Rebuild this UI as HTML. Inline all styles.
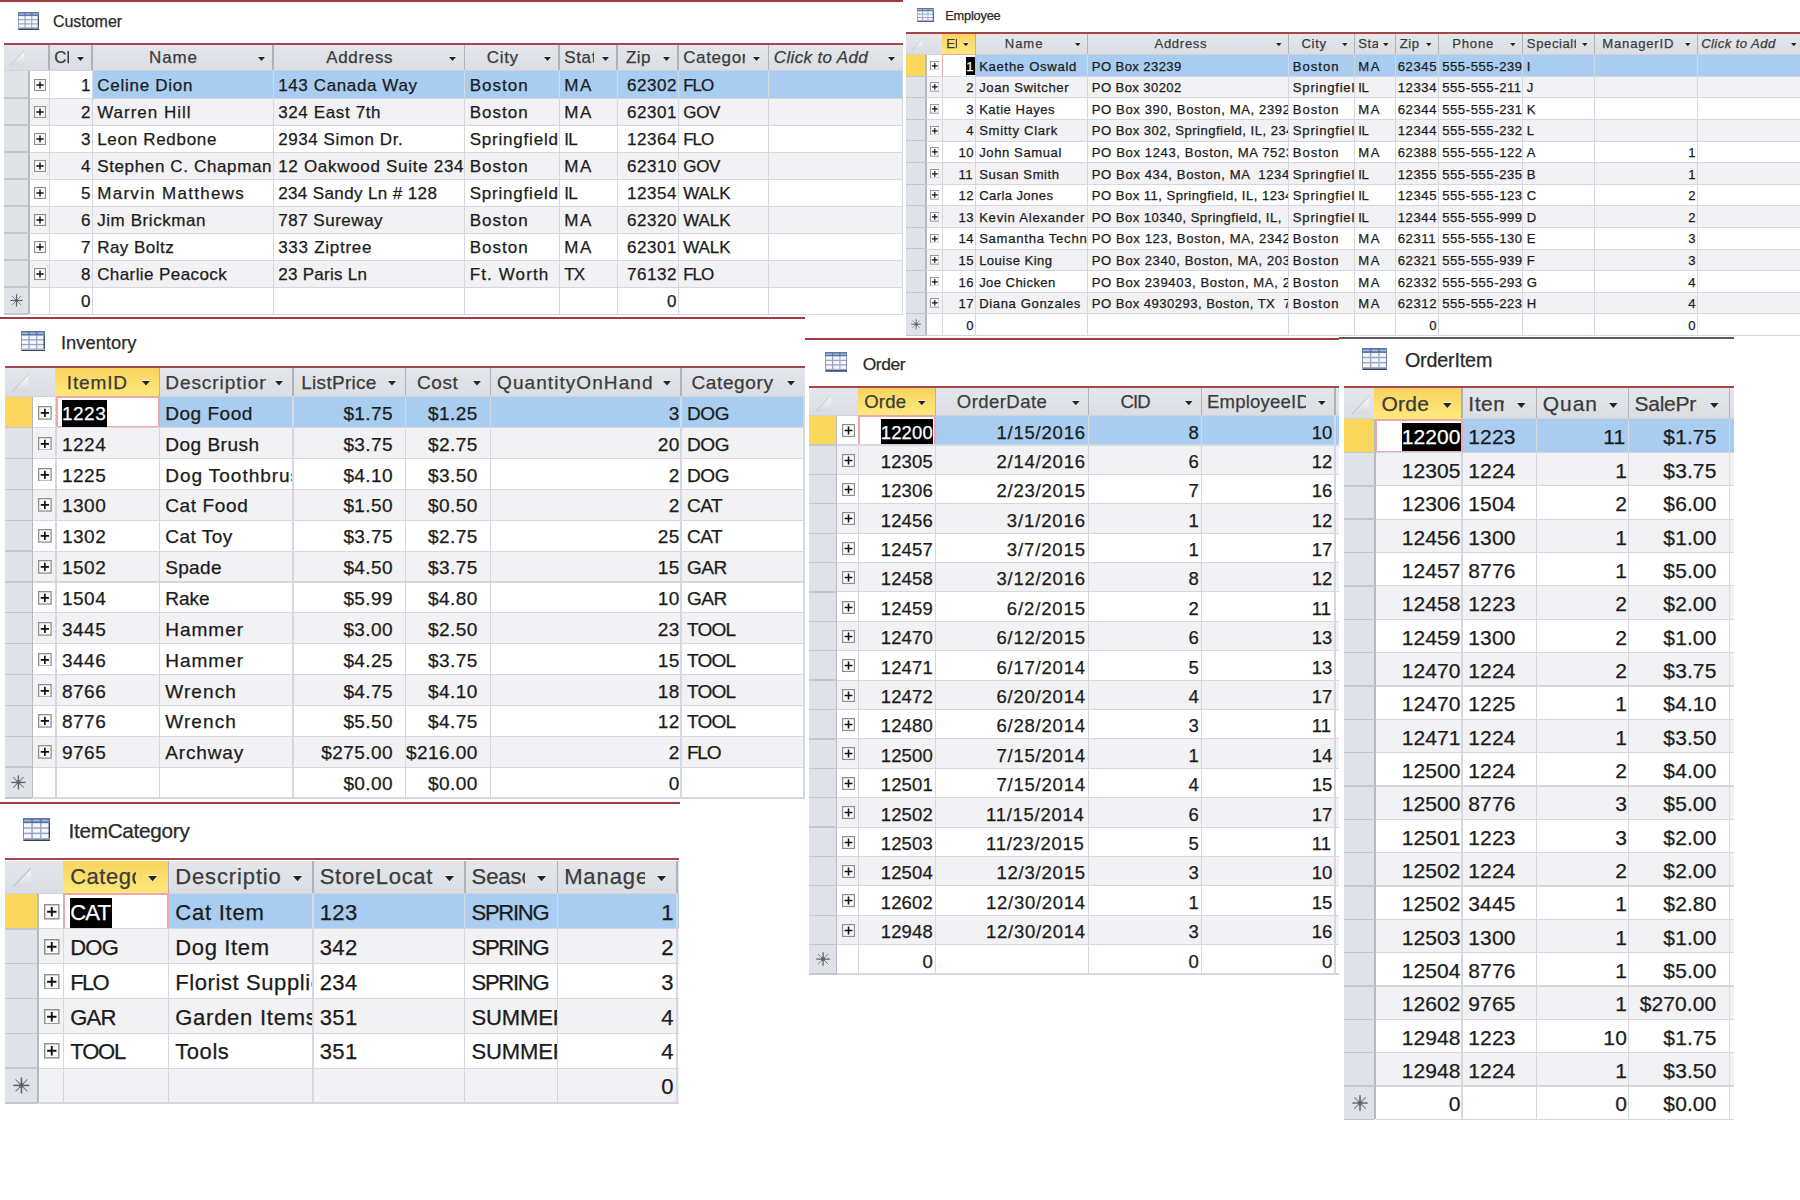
<!DOCTYPE html><html><head><meta charset="utf-8"><style>html,body{margin:0;padding:0;width:1800px;height:1200px;overflow:hidden;background:#fff;}body{position:relative;font-family:"Liberation Sans",sans-serif;}div{position:absolute;}.t{white-space:pre;line-height:0;-webkit-text-stroke:0.25px currentColor;}.c{overflow:hidden;}</style></head><body>
<div style="left:0px;top:0px;width:903px;height:317px;background:#fff"></div>
<div style="left:0px;top:0px;width:903px;height:1.5px;background:#a5393f"></div>
<svg style="position:absolute;left:18px;top:12px" width="20.8" height="18" viewBox="0 0 26 21.5" preserveAspectRatio="none">
<rect x="0" y="0" width="26" height="21.5" fill="#6f83a8"/><rect x="0" y="0" width="26" height="4.6" fill="#5c76a3"/><rect x="0.9" y="1.6" width="7" height="1.5" fill="#a9bbe2"/><rect x="9.6" y="1.6" width="6.6" height="1.5" fill="#a9bbe2"/><rect x="18" y="1.6" width="6.6" height="1.5" fill="#a9bbe2"/><rect x="0.9" y="4.8" width="24" height="14" fill="#9aa5bf"/>
<rect x="0.9" y="4.9" width="7.1" height="3.6" fill="#f4f7fd"/>
<rect x="9.5" y="4.9" width="7.0" height="3.6" fill="#f4f7fd"/>
<rect x="17.8" y="4.9" width="7.0" height="3.6" fill="#f4f7fd"/>
<rect x="0.9" y="9.9" width="7.1" height="3.6" fill="#f4f7fd"/>
<rect x="9.5" y="9.9" width="7.0" height="3.6" fill="#f4f7fd"/>
<rect x="17.8" y="9.9" width="7.0" height="3.6" fill="#f4f7fd"/>
<rect x="0.9" y="14.9" width="7.1" height="3.6" fill="#f4f7fd"/>
<rect x="9.5" y="14.9" width="7.0" height="3.6" fill="#f4f7fd"/>
<rect x="17.8" y="14.9" width="7.0" height="3.6" fill="#f4f7fd"/>
<rect x="24.8" y="4.8" width="1.2" height="16.7" fill="#34405f"/><rect x="0" y="18.6" width="26" height="1.5" fill="#a6b2c9"/><rect x="0.9" y="20" width="25.1" height="1.5" fill="#34405f"/>
</svg>
<div class="t" style="left:53px;top:22.46px;font-size:16px;letter-spacing:-0.04px;color:#2a2a2a;">Customer</div>
<div style="left:4px;top:43px;width:899px;height:1.7px;background:#a8464b"></div>
<div style="left:4px;top:45px;width:899px;height:26px;background:linear-gradient(#e3e6ea,#dadee4)"></div>
<svg style="position:absolute;left:10px;top:51px" width="14" height="14.6" viewBox="0 0 14 14.6">
<defs><linearGradient id="tg" x1="0" y1="0" x2="0" y2="1"><stop offset="0" stop-color="#f8f9fb"/><stop offset="1" stop-color="#d6dae0"/></linearGradient></defs><path d="M0,14.6 L14,0 L14,14.6 Z" fill="url(#tg)"/><path d="M0,14.6 L14,0" stroke="#b9bec6" stroke-width="0.8"/></svg>
<div style="left:48.45px;top:45px;width:1.1px;height:26px;background:#aeb3ba"></div>
<div style="left:91.45px;top:45px;width:1.1px;height:26px;background:#aeb3ba"></div>
<div style="left:272.45px;top:45px;width:1.1px;height:26px;background:#aeb3ba"></div>
<div style="left:463.95px;top:45px;width:1.1px;height:26px;background:#aeb3ba"></div>
<div style="left:558.45px;top:45px;width:1.1px;height:26px;background:#aeb3ba"></div>
<div style="left:616.45px;top:45px;width:1.1px;height:26px;background:#aeb3ba"></div>
<div style="left:677.45px;top:45px;width:1.1px;height:26px;background:#aeb3ba"></div>
<div style="left:768.05px;top:45px;width:1.1px;height:26px;background:#aeb3ba"></div>
<div style="left:4px;top:70px;width:899px;height:1px;background:#cfd4da"></div>
<div class="c" style="left:50px;top:41.11px;width:18.5px;height:34px">
<div class="t" style="left:4.2px;top:17px;font-size:17px;letter-spacing:-0.43px;color:#3b3b3b;">CID</div></div>
<svg style="position:absolute;left:76.5px;top:57px;overflow:visible" width="7" height="4" viewBox="0 0 7 4">
<path d="M-0.6,-0.5 L7.6,-0.5 L3.5,4.6 Z" fill="#fbfcfd" opacity="0.9"/><path d="M0,0 L7,0 L3.5,4 Z" fill="#232323"/></svg>
<div class="c" style="left:93px;top:41.11px;width:156.5px;height:34px">
<div class="t" style="left:56px;top:17px;font-size:17px;letter-spacing:0.91px;color:#3b3b3b;">Name</div></div>
<svg style="position:absolute;left:257.5px;top:57px;overflow:visible" width="7" height="4" viewBox="0 0 7 4">
<path d="M-0.6,-0.5 L7.6,-0.5 L3.5,4.6 Z" fill="#fbfcfd" opacity="0.9"/><path d="M0,0 L7,0 L3.5,4 Z" fill="#232323"/></svg>
<div class="c" style="left:274px;top:41.11px;width:167px;height:34px">
<div class="t" style="left:52.25px;top:17px;font-size:17px;letter-spacing:0.66px;color:#3b3b3b;">Address</div></div>
<svg style="position:absolute;left:449px;top:57px;overflow:visible" width="7" height="4" viewBox="0 0 7 4">
<path d="M-0.6,-0.5 L7.6,-0.5 L3.5,4.6 Z" fill="#fbfcfd" opacity="0.9"/><path d="M0,0 L7,0 L3.5,4 Z" fill="#232323"/></svg>
<div class="c" style="left:465.5px;top:41.11px;width:70px;height:34px">
<div class="t" style="left:21.25px;top:17px;font-size:17px;letter-spacing:0.68px;color:#3b3b3b;">City</div></div>
<svg style="position:absolute;left:543.5px;top:57px;overflow:visible" width="7" height="4" viewBox="0 0 7 4">
<path d="M-0.6,-0.5 L7.6,-0.5 L3.5,4.6 Z" fill="#fbfcfd" opacity="0.9"/><path d="M0,0 L7,0 L3.5,4 Z" fill="#232323"/></svg>
<div class="c" style="left:560px;top:41.11px;width:33.5px;height:34px">
<div class="t" style="left:4.2px;top:17px;font-size:17px;letter-spacing:0.66px;color:#3b3b3b;">State</div></div>
<svg style="position:absolute;left:601.5px;top:57px;overflow:visible" width="7" height="4" viewBox="0 0 7 4">
<path d="M-0.6,-0.5 L7.6,-0.5 L3.5,4.6 Z" fill="#fbfcfd" opacity="0.9"/><path d="M0,0 L7,0 L3.5,4 Z" fill="#232323"/></svg>
<div class="c" style="left:618px;top:41.11px;width:36.5px;height:34px">
<div class="t" style="left:8px;top:17px;font-size:17px;letter-spacing:0.46px;color:#3b3b3b;">Zip</div></div>
<svg style="position:absolute;left:662.5px;top:57px;overflow:visible" width="7" height="4" viewBox="0 0 7 4">
<path d="M-0.6,-0.5 L7.6,-0.5 L3.5,4.6 Z" fill="#fbfcfd" opacity="0.9"/><path d="M0,0 L7,0 L3.5,4 Z" fill="#232323"/></svg>
<div class="c" style="left:679px;top:41.11px;width:66.1px;height:34px">
<div class="t" style="left:4.2px;top:17px;font-size:17px;letter-spacing:0.63px;color:#3b3b3b;">Category</div></div>
<svg style="position:absolute;left:753.1px;top:57px;overflow:visible" width="7" height="4" viewBox="0 0 7 4">
<path d="M-0.6,-0.5 L7.6,-0.5 L3.5,4.6 Z" fill="#fbfcfd" opacity="0.9"/><path d="M0,0 L7,0 L3.5,4 Z" fill="#232323"/></svg>
<div class="c" style="left:769.6px;top:41.11px;width:109.9px;height:34px">
<div class="t" style="left:4.2px;top:17px;font-size:17px;letter-spacing:0.36px;color:#3b3b3b;font-style:italic;">Click to Add</div></div>
<svg style="position:absolute;left:887.5px;top:57px;overflow:visible" width="7" height="4" viewBox="0 0 7 4">
<path d="M-0.6,-0.5 L7.6,-0.5 L3.5,4.6 Z" fill="#fbfcfd" opacity="0.9"/><path d="M0,0 L7,0 L3.5,4 Z" fill="#232323"/></svg>
<div style="left:4px;top:71px;width:25px;height:27px;background:#dfe3e8"></div>
<div style="left:29px;top:71px;width:874px;height:27px;background:#ffffff"></div>
<div style="left:92px;top:71px;width:811px;height:27px;background:#a8cdf0"></div>
<div style="left:28.35px;top:71px;width:1.3px;height:27px;background:#b5bac1"></div>
<div style="left:48.5px;top:71px;width:1px;height:27px;background:#d3d8e1"></div>
<div style="left:91.5px;top:71px;width:1px;height:27px;background:#d3d8e1"></div>
<div style="left:272.5px;top:71px;width:1px;height:27px;background:#d3d8e1"></div>
<div style="left:464px;top:71px;width:1px;height:27px;background:#d3d8e1"></div>
<div style="left:558.5px;top:71px;width:1px;height:27px;background:#d3d8e1"></div>
<div style="left:616.5px;top:71px;width:1px;height:27px;background:#d3d8e1"></div>
<div style="left:677.5px;top:71px;width:1px;height:27px;background:#d3d8e1"></div>
<div style="left:768.1px;top:71px;width:1px;height:27px;background:#d3d8e1"></div>
<div style="left:902px;top:71px;width:1px;height:27px;background:#d3d8e1"></div>
<svg style="position:absolute;left:33.8px;top:78.9px" width="12" height="12" viewBox="0 0 12 12">
<rect x="0.55" y="0.55" width="10.9" height="10.9" fill="#fbfbfb" stroke="#8e8e8e" stroke-width="1.1"/><path d="M2.4,6 H9.6 M6,2.4 V9.6" stroke="#111" stroke-width="1.45"/></svg>
<div class="c" style="left:49.5px;top:68.81px;width:42px;height:34px">
<div class="t" style="left:31.5px;top:17px;font-size:17px;letter-spacing:0.55px;color:#1b1b1b;">1</div></div>
<div class="c" style="left:92.5px;top:68.81px;width:180px;height:34px">
<div class="t" style="left:4.7px;top:17px;font-size:17px;letter-spacing:0.74px;color:#1b1b1b;">Celine Dion</div></div>
<div class="c" style="left:273.5px;top:68.81px;width:190.5px;height:34px">
<div class="t" style="left:4.7px;top:17px;font-size:17px;letter-spacing:0.62px;color:#1b1b1b;">143 Canada Way</div></div>
<div class="c" style="left:465px;top:68.81px;width:93.5px;height:34px">
<div class="t" style="left:4.7px;top:17px;font-size:17px;letter-spacing:1.01px;color:#1b1b1b;">Boston</div></div>
<div class="c" style="left:559.5px;top:68.81px;width:57px;height:34px">
<div class="t" style="left:4.7px;top:17px;font-size:17px;letter-spacing:1.75px;color:#1b1b1b;">MA</div></div>
<div class="c" style="left:617.5px;top:68.81px;width:60px;height:34px">
<div class="t" style="left:9.5px;top:17px;font-size:17px;letter-spacing:0.55px;color:#1b1b1b;">62302</div></div>
<div class="c" style="left:678.5px;top:68.81px;width:89.6px;height:34px">
<div class="t" style="left:4.7px;top:17px;font-size:17px;letter-spacing:-1.02px;color:#1b1b1b;">FLO</div></div>
<div style="left:4px;top:98px;width:25px;height:27px;background:#dfe3e8"></div>
<div style="left:29px;top:98px;width:874px;height:27px;background:#f2f1f3"></div>
<div style="left:28.35px;top:98px;width:1.3px;height:27px;background:#b5bac1"></div>
<div style="left:48.5px;top:98px;width:1px;height:27px;background:#d3d8e1"></div>
<div style="left:91.5px;top:98px;width:1px;height:27px;background:#d3d8e1"></div>
<div style="left:272.5px;top:98px;width:1px;height:27px;background:#d3d8e1"></div>
<div style="left:464px;top:98px;width:1px;height:27px;background:#d3d8e1"></div>
<div style="left:558.5px;top:98px;width:1px;height:27px;background:#d3d8e1"></div>
<div style="left:616.5px;top:98px;width:1px;height:27px;background:#d3d8e1"></div>
<div style="left:677.5px;top:98px;width:1px;height:27px;background:#d3d8e1"></div>
<div style="left:768.1px;top:98px;width:1px;height:27px;background:#d3d8e1"></div>
<div style="left:902px;top:98px;width:1px;height:27px;background:#d3d8e1"></div>
<div style="left:4px;top:97.4px;width:25px;height:1.2px;background:#c2c7ce"></div>
<div style="left:29.6px;top:97.5px;width:873.4px;height:1px;background:#d3d8e1"></div>
<svg style="position:absolute;left:33.8px;top:105.9px" width="12" height="12" viewBox="0 0 12 12">
<rect x="0.55" y="0.55" width="10.9" height="10.9" fill="#fbfbfb" stroke="#8e8e8e" stroke-width="1.1"/><path d="M2.4,6 H9.6 M6,2.4 V9.6" stroke="#111" stroke-width="1.45"/></svg>
<div class="c" style="left:49.5px;top:95.81px;width:42px;height:34px">
<div class="t" style="left:31.5px;top:17px;font-size:17px;letter-spacing:0.55px;color:#1b1b1b;">2</div></div>
<div class="c" style="left:92.5px;top:95.81px;width:180px;height:34px">
<div class="t" style="left:4.7px;top:17px;font-size:17px;letter-spacing:0.99px;color:#1b1b1b;">Warren Hill</div></div>
<div class="c" style="left:273.5px;top:95.81px;width:190.5px;height:34px">
<div class="t" style="left:4.7px;top:17px;font-size:17px;letter-spacing:0.63px;color:#1b1b1b;">324 East 7th</div></div>
<div class="c" style="left:465px;top:95.81px;width:93.5px;height:34px">
<div class="t" style="left:4.7px;top:17px;font-size:17px;letter-spacing:1.01px;color:#1b1b1b;">Boston</div></div>
<div class="c" style="left:559.5px;top:95.81px;width:57px;height:34px">
<div class="t" style="left:4.7px;top:17px;font-size:17px;letter-spacing:1.75px;color:#1b1b1b;">MA</div></div>
<div class="c" style="left:617.5px;top:95.81px;width:60px;height:34px">
<div class="t" style="left:9.5px;top:17px;font-size:17px;letter-spacing:0.55px;color:#1b1b1b;">62301</div></div>
<div class="c" style="left:678.5px;top:95.81px;width:89.6px;height:34px">
<div class="t" style="left:4.7px;top:17px;font-size:17px;letter-spacing:-0.26px;color:#1b1b1b;">GOV</div></div>
<div style="left:4px;top:125px;width:25px;height:27px;background:#dfe3e8"></div>
<div style="left:29px;top:125px;width:874px;height:27px;background:#ffffff"></div>
<div style="left:28.35px;top:125px;width:1.3px;height:27px;background:#b5bac1"></div>
<div style="left:48.5px;top:125px;width:1px;height:27px;background:#d3d8e1"></div>
<div style="left:91.5px;top:125px;width:1px;height:27px;background:#d3d8e1"></div>
<div style="left:272.5px;top:125px;width:1px;height:27px;background:#d3d8e1"></div>
<div style="left:464px;top:125px;width:1px;height:27px;background:#d3d8e1"></div>
<div style="left:558.5px;top:125px;width:1px;height:27px;background:#d3d8e1"></div>
<div style="left:616.5px;top:125px;width:1px;height:27px;background:#d3d8e1"></div>
<div style="left:677.5px;top:125px;width:1px;height:27px;background:#d3d8e1"></div>
<div style="left:768.1px;top:125px;width:1px;height:27px;background:#d3d8e1"></div>
<div style="left:902px;top:125px;width:1px;height:27px;background:#d3d8e1"></div>
<div style="left:4px;top:124.4px;width:25px;height:1.2px;background:#c2c7ce"></div>
<div style="left:29.6px;top:124.5px;width:873.4px;height:1px;background:#d3d8e1"></div>
<svg style="position:absolute;left:33.8px;top:132.9px" width="12" height="12" viewBox="0 0 12 12">
<rect x="0.55" y="0.55" width="10.9" height="10.9" fill="#fbfbfb" stroke="#8e8e8e" stroke-width="1.1"/><path d="M2.4,6 H9.6 M6,2.4 V9.6" stroke="#111" stroke-width="1.45"/></svg>
<div class="c" style="left:49.5px;top:122.81px;width:42px;height:34px">
<div class="t" style="left:31.5px;top:17px;font-size:17px;letter-spacing:0.55px;color:#1b1b1b;">3</div></div>
<div class="c" style="left:92.5px;top:122.81px;width:180px;height:34px">
<div class="t" style="left:4.7px;top:17px;font-size:17px;letter-spacing:0.7px;color:#1b1b1b;">Leon Redbone</div></div>
<div class="c" style="left:273.5px;top:122.81px;width:190.5px;height:34px">
<div class="t" style="left:4.7px;top:17px;font-size:17px;letter-spacing:0.56px;color:#1b1b1b;">2934 Simon Dr.</div></div>
<div class="c" style="left:465px;top:122.81px;width:93.5px;height:34px">
<div class="t" style="left:4.7px;top:17px;font-size:17px;letter-spacing:0.79px;color:#1b1b1b;">Springfield</div></div>
<div class="c" style="left:559.5px;top:122.81px;width:57px;height:34px">
<div class="t" style="left:4.7px;top:17px;font-size:17px;letter-spacing:-0.59px;color:#1b1b1b;">IL</div></div>
<div class="c" style="left:617.5px;top:122.81px;width:60px;height:34px">
<div class="t" style="left:9.5px;top:17px;font-size:17px;letter-spacing:0.55px;color:#1b1b1b;">12364</div></div>
<div class="c" style="left:678.5px;top:122.81px;width:89.6px;height:34px">
<div class="t" style="left:4.7px;top:17px;font-size:17px;letter-spacing:-1.02px;color:#1b1b1b;">FLO</div></div>
<div style="left:4px;top:152px;width:25px;height:27px;background:#dfe3e8"></div>
<div style="left:29px;top:152px;width:874px;height:27px;background:#f2f1f3"></div>
<div style="left:28.35px;top:152px;width:1.3px;height:27px;background:#b5bac1"></div>
<div style="left:48.5px;top:152px;width:1px;height:27px;background:#d3d8e1"></div>
<div style="left:91.5px;top:152px;width:1px;height:27px;background:#d3d8e1"></div>
<div style="left:272.5px;top:152px;width:1px;height:27px;background:#d3d8e1"></div>
<div style="left:464px;top:152px;width:1px;height:27px;background:#d3d8e1"></div>
<div style="left:558.5px;top:152px;width:1px;height:27px;background:#d3d8e1"></div>
<div style="left:616.5px;top:152px;width:1px;height:27px;background:#d3d8e1"></div>
<div style="left:677.5px;top:152px;width:1px;height:27px;background:#d3d8e1"></div>
<div style="left:768.1px;top:152px;width:1px;height:27px;background:#d3d8e1"></div>
<div style="left:902px;top:152px;width:1px;height:27px;background:#d3d8e1"></div>
<div style="left:4px;top:151.4px;width:25px;height:1.2px;background:#c2c7ce"></div>
<div style="left:29.6px;top:151.5px;width:873.4px;height:1px;background:#d3d8e1"></div>
<svg style="position:absolute;left:33.8px;top:159.9px" width="12" height="12" viewBox="0 0 12 12">
<rect x="0.55" y="0.55" width="10.9" height="10.9" fill="#fbfbfb" stroke="#8e8e8e" stroke-width="1.1"/><path d="M2.4,6 H9.6 M6,2.4 V9.6" stroke="#111" stroke-width="1.45"/></svg>
<div class="c" style="left:49.5px;top:149.81px;width:42px;height:34px">
<div class="t" style="left:31.5px;top:17px;font-size:17px;letter-spacing:0.55px;color:#1b1b1b;">4</div></div>
<div class="c" style="left:92.5px;top:149.81px;width:180px;height:34px">
<div class="t" style="left:4.7px;top:17px;font-size:17px;letter-spacing:0.64px;color:#1b1b1b;">Stephen C. Chapman</div></div>
<div class="c" style="left:273.5px;top:149.81px;width:190.5px;height:34px">
<div class="t" style="left:4.7px;top:17px;font-size:17px;letter-spacing:0.7px;color:#1b1b1b;">12 Oakwood Suite 234</div></div>
<div class="c" style="left:465px;top:149.81px;width:93.5px;height:34px">
<div class="t" style="left:4.7px;top:17px;font-size:17px;letter-spacing:1.01px;color:#1b1b1b;">Boston</div></div>
<div class="c" style="left:559.5px;top:149.81px;width:57px;height:34px">
<div class="t" style="left:4.7px;top:17px;font-size:17px;letter-spacing:1.75px;color:#1b1b1b;">MA</div></div>
<div class="c" style="left:617.5px;top:149.81px;width:60px;height:34px">
<div class="t" style="left:9.5px;top:17px;font-size:17px;letter-spacing:0.55px;color:#1b1b1b;">62310</div></div>
<div class="c" style="left:678.5px;top:149.81px;width:89.6px;height:34px">
<div class="t" style="left:4.7px;top:17px;font-size:17px;letter-spacing:-0.26px;color:#1b1b1b;">GOV</div></div>
<div style="left:4px;top:179px;width:25px;height:27px;background:#dfe3e8"></div>
<div style="left:29px;top:179px;width:874px;height:27px;background:#ffffff"></div>
<div style="left:28.35px;top:179px;width:1.3px;height:27px;background:#b5bac1"></div>
<div style="left:48.5px;top:179px;width:1px;height:27px;background:#d3d8e1"></div>
<div style="left:91.5px;top:179px;width:1px;height:27px;background:#d3d8e1"></div>
<div style="left:272.5px;top:179px;width:1px;height:27px;background:#d3d8e1"></div>
<div style="left:464px;top:179px;width:1px;height:27px;background:#d3d8e1"></div>
<div style="left:558.5px;top:179px;width:1px;height:27px;background:#d3d8e1"></div>
<div style="left:616.5px;top:179px;width:1px;height:27px;background:#d3d8e1"></div>
<div style="left:677.5px;top:179px;width:1px;height:27px;background:#d3d8e1"></div>
<div style="left:768.1px;top:179px;width:1px;height:27px;background:#d3d8e1"></div>
<div style="left:902px;top:179px;width:1px;height:27px;background:#d3d8e1"></div>
<div style="left:4px;top:178.4px;width:25px;height:1.2px;background:#c2c7ce"></div>
<div style="left:29.6px;top:178.5px;width:873.4px;height:1px;background:#d3d8e1"></div>
<svg style="position:absolute;left:33.8px;top:186.9px" width="12" height="12" viewBox="0 0 12 12">
<rect x="0.55" y="0.55" width="10.9" height="10.9" fill="#fbfbfb" stroke="#8e8e8e" stroke-width="1.1"/><path d="M2.4,6 H9.6 M6,2.4 V9.6" stroke="#111" stroke-width="1.45"/></svg>
<div class="c" style="left:49.5px;top:176.81px;width:42px;height:34px">
<div class="t" style="left:31.5px;top:17px;font-size:17px;letter-spacing:0.55px;color:#1b1b1b;">5</div></div>
<div class="c" style="left:92.5px;top:176.81px;width:180px;height:34px">
<div class="t" style="left:4.7px;top:17px;font-size:17px;letter-spacing:1.3px;color:#1b1b1b;">Marvin Matthews</div></div>
<div class="c" style="left:273.5px;top:176.81px;width:190.5px;height:34px">
<div class="t" style="left:4.7px;top:17px;font-size:17px;letter-spacing:0.38px;color:#1b1b1b;">234 Sandy Ln # 128</div></div>
<div class="c" style="left:465px;top:176.81px;width:93.5px;height:34px">
<div class="t" style="left:4.7px;top:17px;font-size:17px;letter-spacing:0.79px;color:#1b1b1b;">Springfield</div></div>
<div class="c" style="left:559.5px;top:176.81px;width:57px;height:34px">
<div class="t" style="left:4.7px;top:17px;font-size:17px;letter-spacing:-0.59px;color:#1b1b1b;">IL</div></div>
<div class="c" style="left:617.5px;top:176.81px;width:60px;height:34px">
<div class="t" style="left:9.5px;top:17px;font-size:17px;letter-spacing:0.55px;color:#1b1b1b;">12354</div></div>
<div class="c" style="left:678.5px;top:176.81px;width:89.6px;height:34px">
<div class="t" style="left:4.7px;top:17px;font-size:17px;letter-spacing:-0.04px;color:#1b1b1b;">WALK</div></div>
<div style="left:4px;top:206px;width:25px;height:27px;background:#dfe3e8"></div>
<div style="left:29px;top:206px;width:874px;height:27px;background:#f2f1f3"></div>
<div style="left:28.35px;top:206px;width:1.3px;height:27px;background:#b5bac1"></div>
<div style="left:48.5px;top:206px;width:1px;height:27px;background:#d3d8e1"></div>
<div style="left:91.5px;top:206px;width:1px;height:27px;background:#d3d8e1"></div>
<div style="left:272.5px;top:206px;width:1px;height:27px;background:#d3d8e1"></div>
<div style="left:464px;top:206px;width:1px;height:27px;background:#d3d8e1"></div>
<div style="left:558.5px;top:206px;width:1px;height:27px;background:#d3d8e1"></div>
<div style="left:616.5px;top:206px;width:1px;height:27px;background:#d3d8e1"></div>
<div style="left:677.5px;top:206px;width:1px;height:27px;background:#d3d8e1"></div>
<div style="left:768.1px;top:206px;width:1px;height:27px;background:#d3d8e1"></div>
<div style="left:902px;top:206px;width:1px;height:27px;background:#d3d8e1"></div>
<div style="left:4px;top:205.4px;width:25px;height:1.2px;background:#c2c7ce"></div>
<div style="left:29.6px;top:205.5px;width:873.4px;height:1px;background:#d3d8e1"></div>
<svg style="position:absolute;left:33.8px;top:213.9px" width="12" height="12" viewBox="0 0 12 12">
<rect x="0.55" y="0.55" width="10.9" height="10.9" fill="#fbfbfb" stroke="#8e8e8e" stroke-width="1.1"/><path d="M2.4,6 H9.6 M6,2.4 V9.6" stroke="#111" stroke-width="1.45"/></svg>
<div class="c" style="left:49.5px;top:203.81px;width:42px;height:34px">
<div class="t" style="left:31.5px;top:17px;font-size:17px;letter-spacing:0.55px;color:#1b1b1b;">6</div></div>
<div class="c" style="left:92.5px;top:203.81px;width:180px;height:34px">
<div class="t" style="left:4.7px;top:17px;font-size:17px;letter-spacing:0.58px;color:#1b1b1b;">Jim Brickman</div></div>
<div class="c" style="left:273.5px;top:203.81px;width:190.5px;height:34px">
<div class="t" style="left:4.7px;top:17px;font-size:17px;letter-spacing:0.52px;color:#1b1b1b;">787 Sureway</div></div>
<div class="c" style="left:465px;top:203.81px;width:93.5px;height:34px">
<div class="t" style="left:4.7px;top:17px;font-size:17px;letter-spacing:1.01px;color:#1b1b1b;">Boston</div></div>
<div class="c" style="left:559.5px;top:203.81px;width:57px;height:34px">
<div class="t" style="left:4.7px;top:17px;font-size:17px;letter-spacing:1.75px;color:#1b1b1b;">MA</div></div>
<div class="c" style="left:617.5px;top:203.81px;width:60px;height:34px">
<div class="t" style="left:9.5px;top:17px;font-size:17px;letter-spacing:0.55px;color:#1b1b1b;">62320</div></div>
<div class="c" style="left:678.5px;top:203.81px;width:89.6px;height:34px">
<div class="t" style="left:4.7px;top:17px;font-size:17px;letter-spacing:-0.04px;color:#1b1b1b;">WALK</div></div>
<div style="left:4px;top:233px;width:25px;height:27px;background:#dfe3e8"></div>
<div style="left:29px;top:233px;width:874px;height:27px;background:#ffffff"></div>
<div style="left:28.35px;top:233px;width:1.3px;height:27px;background:#b5bac1"></div>
<div style="left:48.5px;top:233px;width:1px;height:27px;background:#d3d8e1"></div>
<div style="left:91.5px;top:233px;width:1px;height:27px;background:#d3d8e1"></div>
<div style="left:272.5px;top:233px;width:1px;height:27px;background:#d3d8e1"></div>
<div style="left:464px;top:233px;width:1px;height:27px;background:#d3d8e1"></div>
<div style="left:558.5px;top:233px;width:1px;height:27px;background:#d3d8e1"></div>
<div style="left:616.5px;top:233px;width:1px;height:27px;background:#d3d8e1"></div>
<div style="left:677.5px;top:233px;width:1px;height:27px;background:#d3d8e1"></div>
<div style="left:768.1px;top:233px;width:1px;height:27px;background:#d3d8e1"></div>
<div style="left:902px;top:233px;width:1px;height:27px;background:#d3d8e1"></div>
<div style="left:4px;top:232.4px;width:25px;height:1.2px;background:#c2c7ce"></div>
<div style="left:29.6px;top:232.5px;width:873.4px;height:1px;background:#d3d8e1"></div>
<svg style="position:absolute;left:33.8px;top:240.9px" width="12" height="12" viewBox="0 0 12 12">
<rect x="0.55" y="0.55" width="10.9" height="10.9" fill="#fbfbfb" stroke="#8e8e8e" stroke-width="1.1"/><path d="M2.4,6 H9.6 M6,2.4 V9.6" stroke="#111" stroke-width="1.45"/></svg>
<div class="c" style="left:49.5px;top:230.81px;width:42px;height:34px">
<div class="t" style="left:31.5px;top:17px;font-size:17px;letter-spacing:0.55px;color:#1b1b1b;">7</div></div>
<div class="c" style="left:92.5px;top:230.81px;width:180px;height:34px">
<div class="t" style="left:4.7px;top:17px;font-size:17px;letter-spacing:0.47px;color:#1b1b1b;">Ray Boltz</div></div>
<div class="c" style="left:273.5px;top:230.81px;width:190.5px;height:34px">
<div class="t" style="left:4.7px;top:17px;font-size:17px;letter-spacing:0.73px;color:#1b1b1b;">333 Ziptree</div></div>
<div class="c" style="left:465px;top:230.81px;width:93.5px;height:34px">
<div class="t" style="left:4.7px;top:17px;font-size:17px;letter-spacing:1.01px;color:#1b1b1b;">Boston</div></div>
<div class="c" style="left:559.5px;top:230.81px;width:57px;height:34px">
<div class="t" style="left:4.7px;top:17px;font-size:17px;letter-spacing:1.75px;color:#1b1b1b;">MA</div></div>
<div class="c" style="left:617.5px;top:230.81px;width:60px;height:34px">
<div class="t" style="left:9.5px;top:17px;font-size:17px;letter-spacing:0.55px;color:#1b1b1b;">62301</div></div>
<div class="c" style="left:678.5px;top:230.81px;width:89.6px;height:34px">
<div class="t" style="left:4.7px;top:17px;font-size:17px;letter-spacing:-0.04px;color:#1b1b1b;">WALK</div></div>
<div style="left:4px;top:260px;width:25px;height:27px;background:#dfe3e8"></div>
<div style="left:29px;top:260px;width:874px;height:27px;background:#f2f1f3"></div>
<div style="left:28.35px;top:260px;width:1.3px;height:27px;background:#b5bac1"></div>
<div style="left:48.5px;top:260px;width:1px;height:27px;background:#d3d8e1"></div>
<div style="left:91.5px;top:260px;width:1px;height:27px;background:#d3d8e1"></div>
<div style="left:272.5px;top:260px;width:1px;height:27px;background:#d3d8e1"></div>
<div style="left:464px;top:260px;width:1px;height:27px;background:#d3d8e1"></div>
<div style="left:558.5px;top:260px;width:1px;height:27px;background:#d3d8e1"></div>
<div style="left:616.5px;top:260px;width:1px;height:27px;background:#d3d8e1"></div>
<div style="left:677.5px;top:260px;width:1px;height:27px;background:#d3d8e1"></div>
<div style="left:768.1px;top:260px;width:1px;height:27px;background:#d3d8e1"></div>
<div style="left:902px;top:260px;width:1px;height:27px;background:#d3d8e1"></div>
<div style="left:4px;top:259.4px;width:25px;height:1.2px;background:#c2c7ce"></div>
<div style="left:29.6px;top:259.5px;width:873.4px;height:1px;background:#d3d8e1"></div>
<svg style="position:absolute;left:33.8px;top:267.9px" width="12" height="12" viewBox="0 0 12 12">
<rect x="0.55" y="0.55" width="10.9" height="10.9" fill="#fbfbfb" stroke="#8e8e8e" stroke-width="1.1"/><path d="M2.4,6 H9.6 M6,2.4 V9.6" stroke="#111" stroke-width="1.45"/></svg>
<div class="c" style="left:49.5px;top:257.81px;width:42px;height:34px">
<div class="t" style="left:31.5px;top:17px;font-size:17px;letter-spacing:0.55px;color:#1b1b1b;">8</div></div>
<div class="c" style="left:92.5px;top:257.81px;width:180px;height:34px">
<div class="t" style="left:4.7px;top:17px;font-size:17px;letter-spacing:0.41px;color:#1b1b1b;">Charlie Peacock</div></div>
<div class="c" style="left:273.5px;top:257.81px;width:190.5px;height:34px">
<div class="t" style="left:4.7px;top:17px;font-size:17px;letter-spacing:0.27px;color:#1b1b1b;">23 Paris Ln</div></div>
<div class="c" style="left:465px;top:257.81px;width:93.5px;height:34px">
<div class="t" style="left:4.7px;top:17px;font-size:17px;letter-spacing:1.12px;color:#1b1b1b;">Ft. Worth</div></div>
<div class="c" style="left:559.5px;top:257.81px;width:57px;height:34px">
<div class="t" style="left:4.7px;top:17px;font-size:17px;letter-spacing:-0.86px;color:#1b1b1b;">TX</div></div>
<div class="c" style="left:617.5px;top:257.81px;width:60px;height:34px">
<div class="t" style="left:9.5px;top:17px;font-size:17px;letter-spacing:0.55px;color:#1b1b1b;">76132</div></div>
<div class="c" style="left:678.5px;top:257.81px;width:89.6px;height:34px">
<div class="t" style="left:4.7px;top:17px;font-size:17px;letter-spacing:-1.02px;color:#1b1b1b;">FLO</div></div>
<div style="left:4px;top:287px;width:25px;height:27px;background:#dfe3e8"></div>
<div style="left:29px;top:287px;width:874px;height:27px;background:#ffffff"></div>
<div style="left:28.35px;top:287px;width:1.3px;height:27px;background:#b5bac1"></div>
<div style="left:48.5px;top:287px;width:1px;height:27px;background:#d3d8e1"></div>
<div style="left:91.5px;top:287px;width:1px;height:27px;background:#d3d8e1"></div>
<div style="left:272.5px;top:287px;width:1px;height:27px;background:#d3d8e1"></div>
<div style="left:464px;top:287px;width:1px;height:27px;background:#d3d8e1"></div>
<div style="left:558.5px;top:287px;width:1px;height:27px;background:#d3d8e1"></div>
<div style="left:616.5px;top:287px;width:1px;height:27px;background:#d3d8e1"></div>
<div style="left:677.5px;top:287px;width:1px;height:27px;background:#d3d8e1"></div>
<div style="left:768.1px;top:287px;width:1px;height:27px;background:#d3d8e1"></div>
<div style="left:902px;top:287px;width:1px;height:27px;background:#d3d8e1"></div>
<div style="left:4px;top:286.4px;width:25px;height:1.2px;background:#c2c7ce"></div>
<div style="left:29.6px;top:286.5px;width:873.4px;height:1px;background:#d3d8e1"></div>
<div style="left:4px;top:313.4px;width:25px;height:1.2px;background:#c2c7ce"></div>
<div style="left:29.6px;top:313.5px;width:873.4px;height:1px;background:#d3d8e1"></div>
<svg style="position:absolute;left:10px;top:294px" width="13" height="13" viewBox="-6.5 -6.5 13 13">
<g stroke="#60636a" stroke-width="1.2"><line x1="-6.2" y1="0" x2="6.2" y2="0"/><line x1="0" y1="-6.2" x2="0" y2="6.2"/></g><g stroke="#7d8087" stroke-width="0.9"><line x1="-4.6" y1="-4.6" x2="4.6" y2="4.6"/><line x1="-4.6" y1="4.6" x2="4.6" y2="-4.6"/></g><circle r="1.8" fill="#60636a"/></svg>
<div class="c" style="left:49.5px;top:284.81px;width:42px;height:34px">
<div class="t" style="left:31.5px;top:17px;font-size:17px;letter-spacing:0.55px;color:#1b1b1b;">0</div></div>
<div class="c" style="left:617.5px;top:284.81px;width:60px;height:34px">
<div class="t" style="left:49.5px;top:17px;font-size:17px;letter-spacing:0.55px;color:#1b1b1b;">0</div></div>
<div style="left:903px;top:0px;width:897px;height:338px;background:#fff"></div>
<svg style="position:absolute;left:917.2px;top:7.5px" width="16.64" height="14.4" viewBox="0 0 26 21.5" preserveAspectRatio="none">
<rect x="0" y="0" width="26" height="21.5" fill="#6f83a8"/><rect x="0" y="0" width="26" height="4.6" fill="#5c76a3"/><rect x="0.9" y="1.6" width="7" height="1.5" fill="#a9bbe2"/><rect x="9.6" y="1.6" width="6.6" height="1.5" fill="#a9bbe2"/><rect x="18" y="1.6" width="6.6" height="1.5" fill="#a9bbe2"/><rect x="0.9" y="4.8" width="24" height="14" fill="#9aa5bf"/>
<rect x="0.9" y="4.9" width="7.1" height="3.6" fill="#f4f7fd"/>
<rect x="9.5" y="4.9" width="7.0" height="3.6" fill="#f4f7fd"/>
<rect x="17.8" y="4.9" width="7.0" height="3.6" fill="#f4f7fd"/>
<rect x="0.9" y="9.9" width="7.1" height="3.6" fill="#f4f7fd"/>
<rect x="9.5" y="9.9" width="7.0" height="3.6" fill="#f4f7fd"/>
<rect x="17.8" y="9.9" width="7.0" height="3.6" fill="#f4f7fd"/>
<rect x="0.9" y="14.9" width="7.1" height="3.6" fill="#f4f7fd"/>
<rect x="9.5" y="14.9" width="7.0" height="3.6" fill="#f4f7fd"/>
<rect x="17.8" y="14.9" width="7.0" height="3.6" fill="#f4f7fd"/>
<rect x="24.8" y="4.8" width="1.2" height="16.7" fill="#34405f"/><rect x="0" y="18.6" width="26" height="1.5" fill="#a6b2c9"/><rect x="0.9" y="20" width="25.1" height="1.5" fill="#34405f"/>
</svg>
<div class="t" style="left:945.2px;top:15.86px;font-size:12.8px;letter-spacing:-0.2px;color:#2a2a2a;">Employee</div>
<div style="left:906px;top:32.3px;width:894px;height:1.36px;background:#a8464b"></div>
<div style="left:906px;top:33.9px;width:894px;height:20.6px;background:linear-gradient(#e3e6ea,#dadee4)"></div>
<svg style="position:absolute;left:910.8px;top:38.7px" width="11.2" height="11.68" viewBox="0 0 14 14.6">
<defs><linearGradient id="tg" x1="0" y1="0" x2="0" y2="1"><stop offset="0" stop-color="#f8f9fb"/><stop offset="1" stop-color="#d6dae0"/></linearGradient></defs><path d="M0,14.6 L14,0 L14,14.6 Z" fill="url(#tg)"/><path d="M0,14.6 L14,0" stroke="#b9bec6" stroke-width="0.8"/></svg>
<div style="left:941.56px;top:33.9px;width:0.88px;height:20.6px;background:#aeb3ba"></div>
<div style="left:974.56px;top:33.9px;width:0.88px;height:20.6px;background:#aeb3ba"></div>
<div style="left:1087.16px;top:33.9px;width:0.88px;height:20.6px;background:#aeb3ba"></div>
<div style="left:1288.26px;top:33.9px;width:0.88px;height:20.6px;background:#aeb3ba"></div>
<div style="left:1353.56px;top:33.9px;width:0.88px;height:20.6px;background:#aeb3ba"></div>
<div style="left:1395.16px;top:33.9px;width:0.88px;height:20.6px;background:#aeb3ba"></div>
<div style="left:1437.56px;top:33.9px;width:0.88px;height:20.6px;background:#aeb3ba"></div>
<div style="left:1522.26px;top:33.9px;width:0.88px;height:20.6px;background:#aeb3ba"></div>
<div style="left:1593.56px;top:33.9px;width:0.88px;height:20.6px;background:#aeb3ba"></div>
<div style="left:1696.56px;top:33.9px;width:0.88px;height:20.6px;background:#aeb3ba"></div>
<div style="left:906px;top:53.7px;width:894px;height:0.8px;background:#cfd4da"></div>
<div style="left:941.52px;top:33.9px;width:33px;height:20.6px;background:linear-gradient(#fad35f,#fee97c)"></div>
<div class="c" style="left:943px;top:31.37px;width:14.4px;height:26.18px">
<div class="t" style="left:3.16px;top:13.09px;font-size:13.09px;letter-spacing:-0.16px;color:#3b3b3b;">EID</div></div>
<svg style="position:absolute;left:962.6px;top:43.4px;overflow:visible" width="5.6" height="3.2" viewBox="0 0 7 4">
<path d="M-0.6,-0.5 L7.6,-0.5 L3.5,4.6 Z" fill="#fbfcfd" opacity="0.9"/><path d="M0,0 L7,0 L3.5,4 Z" fill="#232323"/></svg>
<div class="c" style="left:976px;top:31.37px;width:94px;height:26.18px">
<div class="t" style="left:28.74px;top:13.09px;font-size:13.09px;letter-spacing:0.95px;color:#3b3b3b;">Name</div></div>
<svg style="position:absolute;left:1075.2px;top:43.4px;overflow:visible" width="5.6" height="3.2" viewBox="0 0 7 4">
<path d="M-0.6,-0.5 L7.6,-0.5 L3.5,4.6 Z" fill="#fbfcfd" opacity="0.9"/><path d="M0,0 L7,0 L3.5,4 Z" fill="#232323"/></svg>
<div class="c" style="left:1088.6px;top:31.37px;width:182.5px;height:26.18px">
<div class="t" style="left:65.88px;top:13.09px;font-size:13.09px;letter-spacing:0.7px;color:#3b3b3b;">Address</div></div>
<svg style="position:absolute;left:1276.3px;top:43.4px;overflow:visible" width="5.6" height="3.2" viewBox="0 0 7 4">
<path d="M-0.6,-0.5 L7.6,-0.5 L3.5,4.6 Z" fill="#fbfcfd" opacity="0.9"/><path d="M0,0 L7,0 L3.5,4 Z" fill="#232323"/></svg>
<div class="c" style="left:1289.7px;top:31.37px;width:46.7px;height:26.18px">
<div class="t" style="left:11.81px;top:13.09px;font-size:13.09px;letter-spacing:0.68px;color:#3b3b3b;">City</div></div>
<svg style="position:absolute;left:1341.6px;top:43.4px;overflow:visible" width="5.6" height="3.2" viewBox="0 0 7 4">
<path d="M-0.6,-0.5 L7.6,-0.5 L3.5,4.6 Z" fill="#fbfcfd" opacity="0.9"/><path d="M0,0 L7,0 L3.5,4 Z" fill="#232323"/></svg>
<div class="c" style="left:1355px;top:31.37px;width:23px;height:26.18px">
<div class="t" style="left:3.16px;top:13.09px;font-size:13.09px;letter-spacing:0.68px;color:#3b3b3b;">State</div></div>
<svg style="position:absolute;left:1383.2px;top:43.4px;overflow:visible" width="5.6" height="3.2" viewBox="0 0 7 4">
<path d="M-0.6,-0.5 L7.6,-0.5 L3.5,4.6 Z" fill="#fbfcfd" opacity="0.9"/><path d="M0,0 L7,0 L3.5,4 Z" fill="#232323"/></svg>
<div class="c" style="left:1396.6px;top:31.37px;width:23.8px;height:26.18px">
<div class="t" style="left:3.12px;top:13.09px;font-size:13.09px;letter-spacing:0.52px;color:#3b3b3b;">Zip</div></div>
<svg style="position:absolute;left:1425.6px;top:43.4px;overflow:visible" width="5.6" height="3.2" viewBox="0 0 7 4">
<path d="M-0.6,-0.5 L7.6,-0.5 L3.5,4.6 Z" fill="#fbfcfd" opacity="0.9"/><path d="M0,0 L7,0 L3.5,4 Z" fill="#232323"/></svg>
<div class="c" style="left:1439px;top:31.37px;width:66.1px;height:26.18px">
<div class="t" style="left:13.22px;top:13.09px;font-size:13.09px;letter-spacing:0.8px;color:#3b3b3b;">Phone</div></div>
<svg style="position:absolute;left:1510.3px;top:43.4px;overflow:visible" width="5.6" height="3.2" viewBox="0 0 7 4">
<path d="M-0.6,-0.5 L7.6,-0.5 L3.5,4.6 Z" fill="#fbfcfd" opacity="0.9"/><path d="M0,0 L7,0 L3.5,4 Z" fill="#232323"/></svg>
<div class="c" style="left:1523.7px;top:31.37px;width:52.7px;height:26.18px">
<div class="t" style="left:3.16px;top:13.09px;font-size:13.09px;letter-spacing:0.59px;color:#3b3b3b;">Specialty</div></div>
<svg style="position:absolute;left:1581.6px;top:43.4px;overflow:visible" width="5.6" height="3.2" viewBox="0 0 7 4">
<path d="M-0.6,-0.5 L7.6,-0.5 L3.5,4.6 Z" fill="#fbfcfd" opacity="0.9"/><path d="M0,0 L7,0 L3.5,4 Z" fill="#232323"/></svg>
<div class="c" style="left:1595px;top:31.37px;width:84.4px;height:26.18px">
<div class="t" style="left:7.36px;top:13.09px;font-size:13.09px;letter-spacing:0.79px;color:#3b3b3b;">ManagerID</div></div>
<svg style="position:absolute;left:1684.6px;top:43.4px;overflow:visible" width="5.6" height="3.2" viewBox="0 0 7 4">
<path d="M-0.6,-0.5 L7.6,-0.5 L3.5,4.6 Z" fill="#fbfcfd" opacity="0.9"/><path d="M0,0 L7,0 L3.5,4 Z" fill="#232323"/></svg>
<div class="c" style="left:1698px;top:31.37px;width:87.9px;height:26.18px">
<div class="t" style="left:3.16px;top:13.09px;font-size:13.09px;letter-spacing:0.43px;color:#3b3b3b;font-style:italic;">Click to Add</div></div>
<svg style="position:absolute;left:1791.1px;top:43.4px;overflow:visible" width="5.6" height="3.2" viewBox="0 0 7 4">
<path d="M-0.6,-0.5 L7.6,-0.5 L3.5,4.6 Z" fill="#fbfcfd" opacity="0.9"/><path d="M0,0 L7,0 L3.5,4 Z" fill="#232323"/></svg>
<div style="left:906px;top:54.5px;width:20px;height:21.6px;background:#fcd75e"></div>
<div style="left:926px;top:54.5px;width:874px;height:21.6px;background:#ffffff"></div>
<div style="left:975px;top:54.5px;width:825px;height:21.6px;background:#a8cdf0"></div>
<div style="left:925.48px;top:54.5px;width:1.04px;height:21.6px;background:#b5bac1"></div>
<div style="left:941.6px;top:54.5px;width:0.8px;height:21.6px;background:#d3d8e1"></div>
<div style="left:974.6px;top:54.5px;width:0.8px;height:21.6px;background:#d3d8e1"></div>
<div style="left:1087.2px;top:54.5px;width:0.8px;height:21.6px;background:#d3d8e1"></div>
<div style="left:1288.3px;top:54.5px;width:0.8px;height:21.6px;background:#d3d8e1"></div>
<div style="left:1353.6px;top:54.5px;width:0.8px;height:21.6px;background:#d3d8e1"></div>
<div style="left:1395.2px;top:54.5px;width:0.8px;height:21.6px;background:#d3d8e1"></div>
<div style="left:1437.6px;top:54.5px;width:0.8px;height:21.6px;background:#d3d8e1"></div>
<div style="left:1522.3px;top:54.5px;width:0.8px;height:21.6px;background:#d3d8e1"></div>
<div style="left:1593.6px;top:54.5px;width:0.8px;height:21.6px;background:#d3d8e1"></div>
<div style="left:1696.6px;top:54.5px;width:0.8px;height:21.6px;background:#d3d8e1"></div>
<svg style="position:absolute;left:929.84px;top:60.82px" width="9.6" height="9.6" viewBox="0 0 12 12">
<rect x="0.55" y="0.55" width="10.9" height="10.9" fill="#fbfbfb" stroke="#8e8e8e" stroke-width="1.1"/><path d="M2.4,6 H9.6 M6,2.4 V9.6" stroke="#111" stroke-width="1.45"/></svg>
<div style="left:941.84px;top:54.1px;width:33.72px;height:22.56px;border:1.6px solid #f3a5ac;background:#fff;box-sizing:border-box"></div>
<div style="left:966.3px;top:56.9px;width:8.3px;height:18.4px;background:#000"></div>
<div class="c" style="left:942.4px;top:53.43px;width:32.2px;height:26.18px">
<div class="t" style="left:23.9px;top:13.09px;font-size:13.09px;letter-spacing:0.62px;color:#ffffff;">1</div></div>
<div class="c" style="left:975.4px;top:53.43px;width:111.8px;height:26.18px">
<div class="t" style="left:3.76px;top:13.09px;font-size:13.09px;letter-spacing:0.71px;color:#1b1b1b;">Kaethe Oswald</div></div>
<div class="c" style="left:1088px;top:53.43px;width:200.3px;height:26.18px">
<div class="t" style="left:3.76px;top:13.09px;font-size:13.09px;letter-spacing:0.41px;color:#1b1b1b;">PO Box 23239</div></div>
<div class="c" style="left:1289.1px;top:53.43px;width:64.5px;height:26.18px">
<div class="t" style="left:3.76px;top:13.09px;font-size:13.09px;letter-spacing:0.98px;color:#1b1b1b;">Boston</div></div>
<div class="c" style="left:1354.4px;top:53.43px;width:40.8px;height:26.18px">
<div class="t" style="left:3.76px;top:13.09px;font-size:13.09px;letter-spacing:1.64px;color:#1b1b1b;">MA</div></div>
<div class="c" style="left:1396px;top:53.43px;width:41.6px;height:26.18px">
<div class="t" style="left:1.7px;top:13.09px;font-size:13.09px;letter-spacing:0.62px;color:#1b1b1b;">62345</div></div>
<div class="c" style="left:1438.4px;top:53.43px;width:83.9px;height:26.18px">
<div class="t" style="left:3.76px;top:13.09px;font-size:13.09px;letter-spacing:0.58px;color:#1b1b1b;">555-555-2394</div></div>
<div class="c" style="left:1523.1px;top:53.43px;width:70.5px;height:26.18px">
<div class="t" style="left:3.76px;top:13.09px;font-size:13.09px;letter-spacing:0.31px;color:#1b1b1b;">I</div></div>
<div style="left:906px;top:76.1px;width:20px;height:21.6px;background:#dfe3e8"></div>
<div style="left:926px;top:76.1px;width:874px;height:21.6px;background:#f2f1f3"></div>
<div style="left:925.48px;top:76.1px;width:1.04px;height:21.6px;background:#b5bac1"></div>
<div style="left:941.6px;top:76.1px;width:0.8px;height:21.6px;background:#d3d8e1"></div>
<div style="left:974.6px;top:76.1px;width:0.8px;height:21.6px;background:#d3d8e1"></div>
<div style="left:1087.2px;top:76.1px;width:0.8px;height:21.6px;background:#d3d8e1"></div>
<div style="left:1288.3px;top:76.1px;width:0.8px;height:21.6px;background:#d3d8e1"></div>
<div style="left:1353.6px;top:76.1px;width:0.8px;height:21.6px;background:#d3d8e1"></div>
<div style="left:1395.2px;top:76.1px;width:0.8px;height:21.6px;background:#d3d8e1"></div>
<div style="left:1437.6px;top:76.1px;width:0.8px;height:21.6px;background:#d3d8e1"></div>
<div style="left:1522.3px;top:76.1px;width:0.8px;height:21.6px;background:#d3d8e1"></div>
<div style="left:1593.6px;top:76.1px;width:0.8px;height:21.6px;background:#d3d8e1"></div>
<div style="left:1696.6px;top:76.1px;width:0.8px;height:21.6px;background:#d3d8e1"></div>
<div style="left:906px;top:75.62px;width:20px;height:0.96px;background:#c2c7ce"></div>
<div style="left:926.48px;top:75.7px;width:873.52px;height:0.8px;background:#d3d8e1"></div>
<svg style="position:absolute;left:929.84px;top:82.42px" width="9.6" height="9.6" viewBox="0 0 12 12">
<rect x="0.55" y="0.55" width="10.9" height="10.9" fill="#fbfbfb" stroke="#8e8e8e" stroke-width="1.1"/><path d="M2.4,6 H9.6 M6,2.4 V9.6" stroke="#111" stroke-width="1.45"/></svg>
<div class="c" style="left:942.4px;top:75.03px;width:32.2px;height:26.18px">
<div class="t" style="left:23.9px;top:13.09px;font-size:13.09px;letter-spacing:0.62px;color:#1b1b1b;">2</div></div>
<div class="c" style="left:975.4px;top:75.03px;width:111.8px;height:26.18px">
<div class="t" style="left:3.76px;top:13.09px;font-size:13.09px;letter-spacing:0.6px;color:#1b1b1b;">Joan Switcher</div></div>
<div class="c" style="left:1088px;top:75.03px;width:200.3px;height:26.18px">
<div class="t" style="left:3.76px;top:13.09px;font-size:13.09px;letter-spacing:0.41px;color:#1b1b1b;">PO Box 30202</div></div>
<div class="c" style="left:1289.1px;top:75.03px;width:64.5px;height:26.18px">
<div class="t" style="left:3.76px;top:13.09px;font-size:13.09px;letter-spacing:0.77px;color:#1b1b1b;">Springfield</div></div>
<div class="c" style="left:1354.4px;top:75.03px;width:40.8px;height:26.18px">
<div class="t" style="left:3.76px;top:13.09px;font-size:13.09px;letter-spacing:-0.32px;color:#1b1b1b;">IL</div></div>
<div class="c" style="left:1396px;top:75.03px;width:41.6px;height:26.18px">
<div class="t" style="left:1.7px;top:13.09px;font-size:13.09px;letter-spacing:0.62px;color:#1b1b1b;">12334</div></div>
<div class="c" style="left:1438.4px;top:75.03px;width:83.9px;height:26.18px">
<div class="t" style="left:3.76px;top:13.09px;font-size:13.09px;letter-spacing:0.58px;color:#1b1b1b;">555-555-2112</div></div>
<div class="c" style="left:1523.1px;top:75.03px;width:70.5px;height:26.18px">
<div class="t" style="left:3.76px;top:13.09px;font-size:13.09px;letter-spacing:-1.8px;color:#1b1b1b;">J</div></div>
<div style="left:906px;top:97.7px;width:20px;height:21.6px;background:#dfe3e8"></div>
<div style="left:926px;top:97.7px;width:874px;height:21.6px;background:#ffffff"></div>
<div style="left:925.48px;top:97.7px;width:1.04px;height:21.6px;background:#b5bac1"></div>
<div style="left:941.6px;top:97.7px;width:0.8px;height:21.6px;background:#d3d8e1"></div>
<div style="left:974.6px;top:97.7px;width:0.8px;height:21.6px;background:#d3d8e1"></div>
<div style="left:1087.2px;top:97.7px;width:0.8px;height:21.6px;background:#d3d8e1"></div>
<div style="left:1288.3px;top:97.7px;width:0.8px;height:21.6px;background:#d3d8e1"></div>
<div style="left:1353.6px;top:97.7px;width:0.8px;height:21.6px;background:#d3d8e1"></div>
<div style="left:1395.2px;top:97.7px;width:0.8px;height:21.6px;background:#d3d8e1"></div>
<div style="left:1437.6px;top:97.7px;width:0.8px;height:21.6px;background:#d3d8e1"></div>
<div style="left:1522.3px;top:97.7px;width:0.8px;height:21.6px;background:#d3d8e1"></div>
<div style="left:1593.6px;top:97.7px;width:0.8px;height:21.6px;background:#d3d8e1"></div>
<div style="left:1696.6px;top:97.7px;width:0.8px;height:21.6px;background:#d3d8e1"></div>
<div style="left:906px;top:97.22px;width:20px;height:0.96px;background:#c2c7ce"></div>
<div style="left:926.48px;top:97.3px;width:873.52px;height:0.8px;background:#d3d8e1"></div>
<svg style="position:absolute;left:929.84px;top:104.02px" width="9.6" height="9.6" viewBox="0 0 12 12">
<rect x="0.55" y="0.55" width="10.9" height="10.9" fill="#fbfbfb" stroke="#8e8e8e" stroke-width="1.1"/><path d="M2.4,6 H9.6 M6,2.4 V9.6" stroke="#111" stroke-width="1.45"/></svg>
<div class="c" style="left:942.4px;top:96.63px;width:32.2px;height:26.18px">
<div class="t" style="left:23.9px;top:13.09px;font-size:13.09px;letter-spacing:0.62px;color:#1b1b1b;">3</div></div>
<div class="c" style="left:975.4px;top:96.63px;width:111.8px;height:26.18px">
<div class="t" style="left:3.76px;top:13.09px;font-size:13.09px;letter-spacing:0.48px;color:#1b1b1b;">Katie Hayes</div></div>
<div class="c" style="left:1088px;top:96.63px;width:200.3px;height:26.18px">
<div class="t" style="left:3.76px;top:13.09px;font-size:13.09px;letter-spacing:0.61px;color:#1b1b1b;">PO Box 390, Boston, MA, 23920</div></div>
<div class="c" style="left:1289.1px;top:96.63px;width:64.5px;height:26.18px">
<div class="t" style="left:3.76px;top:13.09px;font-size:13.09px;letter-spacing:0.98px;color:#1b1b1b;">Boston</div></div>
<div class="c" style="left:1354.4px;top:96.63px;width:40.8px;height:26.18px">
<div class="t" style="left:3.76px;top:13.09px;font-size:13.09px;letter-spacing:1.64px;color:#1b1b1b;">MA</div></div>
<div class="c" style="left:1396px;top:96.63px;width:41.6px;height:26.18px">
<div class="t" style="left:1.7px;top:13.09px;font-size:13.09px;letter-spacing:0.62px;color:#1b1b1b;">62344</div></div>
<div class="c" style="left:1438.4px;top:96.63px;width:83.9px;height:26.18px">
<div class="t" style="left:3.76px;top:13.09px;font-size:13.09px;letter-spacing:0.58px;color:#1b1b1b;">555-555-2311</div></div>
<div class="c" style="left:1523.1px;top:96.63px;width:70.5px;height:26.18px">
<div class="t" style="left:3.76px;top:13.09px;font-size:13.09px;letter-spacing:-0.83px;color:#1b1b1b;">K</div></div>
<div style="left:906px;top:119.3px;width:20px;height:21.6px;background:#dfe3e8"></div>
<div style="left:926px;top:119.3px;width:874px;height:21.6px;background:#f2f1f3"></div>
<div style="left:925.48px;top:119.3px;width:1.04px;height:21.6px;background:#b5bac1"></div>
<div style="left:941.6px;top:119.3px;width:0.8px;height:21.6px;background:#d3d8e1"></div>
<div style="left:974.6px;top:119.3px;width:0.8px;height:21.6px;background:#d3d8e1"></div>
<div style="left:1087.2px;top:119.3px;width:0.8px;height:21.6px;background:#d3d8e1"></div>
<div style="left:1288.3px;top:119.3px;width:0.8px;height:21.6px;background:#d3d8e1"></div>
<div style="left:1353.6px;top:119.3px;width:0.8px;height:21.6px;background:#d3d8e1"></div>
<div style="left:1395.2px;top:119.3px;width:0.8px;height:21.6px;background:#d3d8e1"></div>
<div style="left:1437.6px;top:119.3px;width:0.8px;height:21.6px;background:#d3d8e1"></div>
<div style="left:1522.3px;top:119.3px;width:0.8px;height:21.6px;background:#d3d8e1"></div>
<div style="left:1593.6px;top:119.3px;width:0.8px;height:21.6px;background:#d3d8e1"></div>
<div style="left:1696.6px;top:119.3px;width:0.8px;height:21.6px;background:#d3d8e1"></div>
<div style="left:906px;top:118.82px;width:20px;height:0.96px;background:#c2c7ce"></div>
<div style="left:926.48px;top:118.9px;width:873.52px;height:0.8px;background:#d3d8e1"></div>
<svg style="position:absolute;left:929.84px;top:125.62px" width="9.6" height="9.6" viewBox="0 0 12 12">
<rect x="0.55" y="0.55" width="10.9" height="10.9" fill="#fbfbfb" stroke="#8e8e8e" stroke-width="1.1"/><path d="M2.4,6 H9.6 M6,2.4 V9.6" stroke="#111" stroke-width="1.45"/></svg>
<div class="c" style="left:942.4px;top:118.23px;width:32.2px;height:26.18px">
<div class="t" style="left:23.9px;top:13.09px;font-size:13.09px;letter-spacing:0.62px;color:#1b1b1b;">4</div></div>
<div class="c" style="left:975.4px;top:118.23px;width:111.8px;height:26.18px">
<div class="t" style="left:3.76px;top:13.09px;font-size:13.09px;letter-spacing:0.7px;color:#1b1b1b;">Smitty Clark</div></div>
<div class="c" style="left:1088px;top:118.23px;width:200.3px;height:26.18px">
<div class="t" style="left:3.76px;top:13.09px;font-size:13.09px;letter-spacing:0.48px;color:#1b1b1b;">PO Box 302, Springfield, IL, 234</div></div>
<div class="c" style="left:1289.1px;top:118.23px;width:64.5px;height:26.18px">
<div class="t" style="left:3.76px;top:13.09px;font-size:13.09px;letter-spacing:0.77px;color:#1b1b1b;">Springfield</div></div>
<div class="c" style="left:1354.4px;top:118.23px;width:40.8px;height:26.18px">
<div class="t" style="left:3.76px;top:13.09px;font-size:13.09px;letter-spacing:-0.32px;color:#1b1b1b;">IL</div></div>
<div class="c" style="left:1396px;top:118.23px;width:41.6px;height:26.18px">
<div class="t" style="left:1.7px;top:13.09px;font-size:13.09px;letter-spacing:0.62px;color:#1b1b1b;">12344</div></div>
<div class="c" style="left:1438.4px;top:118.23px;width:83.9px;height:26.18px">
<div class="t" style="left:3.76px;top:13.09px;font-size:13.09px;letter-spacing:0.58px;color:#1b1b1b;">555-555-2321</div></div>
<div class="c" style="left:1523.1px;top:118.23px;width:70.5px;height:26.18px">
<div class="t" style="left:3.76px;top:13.09px;font-size:13.09px;letter-spacing:-0.96px;color:#1b1b1b;">L</div></div>
<div style="left:906px;top:140.9px;width:20px;height:21.6px;background:#dfe3e8"></div>
<div style="left:926px;top:140.9px;width:874px;height:21.6px;background:#ffffff"></div>
<div style="left:925.48px;top:140.9px;width:1.04px;height:21.6px;background:#b5bac1"></div>
<div style="left:941.6px;top:140.9px;width:0.8px;height:21.6px;background:#d3d8e1"></div>
<div style="left:974.6px;top:140.9px;width:0.8px;height:21.6px;background:#d3d8e1"></div>
<div style="left:1087.2px;top:140.9px;width:0.8px;height:21.6px;background:#d3d8e1"></div>
<div style="left:1288.3px;top:140.9px;width:0.8px;height:21.6px;background:#d3d8e1"></div>
<div style="left:1353.6px;top:140.9px;width:0.8px;height:21.6px;background:#d3d8e1"></div>
<div style="left:1395.2px;top:140.9px;width:0.8px;height:21.6px;background:#d3d8e1"></div>
<div style="left:1437.6px;top:140.9px;width:0.8px;height:21.6px;background:#d3d8e1"></div>
<div style="left:1522.3px;top:140.9px;width:0.8px;height:21.6px;background:#d3d8e1"></div>
<div style="left:1593.6px;top:140.9px;width:0.8px;height:21.6px;background:#d3d8e1"></div>
<div style="left:1696.6px;top:140.9px;width:0.8px;height:21.6px;background:#d3d8e1"></div>
<div style="left:906px;top:140.42px;width:20px;height:0.96px;background:#c2c7ce"></div>
<div style="left:926.48px;top:140.5px;width:873.52px;height:0.8px;background:#d3d8e1"></div>
<svg style="position:absolute;left:929.84px;top:147.22px" width="9.6" height="9.6" viewBox="0 0 12 12">
<rect x="0.55" y="0.55" width="10.9" height="10.9" fill="#fbfbfb" stroke="#8e8e8e" stroke-width="1.1"/><path d="M2.4,6 H9.6 M6,2.4 V9.6" stroke="#111" stroke-width="1.45"/></svg>
<div class="c" style="left:942.4px;top:139.83px;width:32.2px;height:26.18px">
<div class="t" style="left:16px;top:13.09px;font-size:13.09px;letter-spacing:0.62px;color:#1b1b1b;">10</div></div>
<div class="c" style="left:975.4px;top:139.83px;width:111.8px;height:26.18px">
<div class="t" style="left:3.76px;top:13.09px;font-size:13.09px;letter-spacing:0.59px;color:#1b1b1b;">John Samual</div></div>
<div class="c" style="left:1088px;top:139.83px;width:200.3px;height:26.18px">
<div class="t" style="left:3.76px;top:13.09px;font-size:13.09px;letter-spacing:0.62px;color:#1b1b1b;">PO Box 1243, Boston, MA 75234</div></div>
<div class="c" style="left:1289.1px;top:139.83px;width:64.5px;height:26.18px">
<div class="t" style="left:3.76px;top:13.09px;font-size:13.09px;letter-spacing:0.98px;color:#1b1b1b;">Boston</div></div>
<div class="c" style="left:1354.4px;top:139.83px;width:40.8px;height:26.18px">
<div class="t" style="left:3.76px;top:13.09px;font-size:13.09px;letter-spacing:1.64px;color:#1b1b1b;">MA</div></div>
<div class="c" style="left:1396px;top:139.83px;width:41.6px;height:26.18px">
<div class="t" style="left:1.7px;top:13.09px;font-size:13.09px;letter-spacing:0.62px;color:#1b1b1b;">62388</div></div>
<div class="c" style="left:1438.4px;top:139.83px;width:83.9px;height:26.18px">
<div class="t" style="left:3.76px;top:13.09px;font-size:13.09px;letter-spacing:0.58px;color:#1b1b1b;">555-555-1223</div></div>
<div class="c" style="left:1523.1px;top:139.83px;width:70.5px;height:26.18px">
<div class="t" style="left:3.76px;top:13.09px;font-size:13.09px;letter-spacing:0.75px;color:#1b1b1b;">A</div></div>
<div class="c" style="left:1594.4px;top:139.83px;width:102.2px;height:26.18px">
<div class="t" style="left:93.9px;top:13.09px;font-size:13.09px;letter-spacing:0.62px;color:#1b1b1b;">1</div></div>
<div style="left:906px;top:162.5px;width:20px;height:21.6px;background:#dfe3e8"></div>
<div style="left:926px;top:162.5px;width:874px;height:21.6px;background:#f2f1f3"></div>
<div style="left:925.48px;top:162.5px;width:1.04px;height:21.6px;background:#b5bac1"></div>
<div style="left:941.6px;top:162.5px;width:0.8px;height:21.6px;background:#d3d8e1"></div>
<div style="left:974.6px;top:162.5px;width:0.8px;height:21.6px;background:#d3d8e1"></div>
<div style="left:1087.2px;top:162.5px;width:0.8px;height:21.6px;background:#d3d8e1"></div>
<div style="left:1288.3px;top:162.5px;width:0.8px;height:21.6px;background:#d3d8e1"></div>
<div style="left:1353.6px;top:162.5px;width:0.8px;height:21.6px;background:#d3d8e1"></div>
<div style="left:1395.2px;top:162.5px;width:0.8px;height:21.6px;background:#d3d8e1"></div>
<div style="left:1437.6px;top:162.5px;width:0.8px;height:21.6px;background:#d3d8e1"></div>
<div style="left:1522.3px;top:162.5px;width:0.8px;height:21.6px;background:#d3d8e1"></div>
<div style="left:1593.6px;top:162.5px;width:0.8px;height:21.6px;background:#d3d8e1"></div>
<div style="left:1696.6px;top:162.5px;width:0.8px;height:21.6px;background:#d3d8e1"></div>
<div style="left:906px;top:162.02px;width:20px;height:0.96px;background:#c2c7ce"></div>
<div style="left:926.48px;top:162.1px;width:873.52px;height:0.8px;background:#d3d8e1"></div>
<svg style="position:absolute;left:929.84px;top:168.82px" width="9.6" height="9.6" viewBox="0 0 12 12">
<rect x="0.55" y="0.55" width="10.9" height="10.9" fill="#fbfbfb" stroke="#8e8e8e" stroke-width="1.1"/><path d="M2.4,6 H9.6 M6,2.4 V9.6" stroke="#111" stroke-width="1.45"/></svg>
<div class="c" style="left:942.4px;top:161.43px;width:32.2px;height:26.18px">
<div class="t" style="left:16px;top:13.09px;font-size:13.09px;letter-spacing:0.62px;color:#1b1b1b;">11</div></div>
<div class="c" style="left:975.4px;top:161.43px;width:111.8px;height:26.18px">
<div class="t" style="left:3.76px;top:13.09px;font-size:13.09px;letter-spacing:0.58px;color:#1b1b1b;">Susan Smith</div></div>
<div class="c" style="left:1088px;top:161.43px;width:200.3px;height:26.18px">
<div class="t" style="left:3.76px;top:13.09px;font-size:13.09px;letter-spacing:0.61px;color:#1b1b1b;">PO Box 434, Boston, MA  12345</div></div>
<div class="c" style="left:1289.1px;top:161.43px;width:64.5px;height:26.18px">
<div class="t" style="left:3.76px;top:13.09px;font-size:13.09px;letter-spacing:0.77px;color:#1b1b1b;">Springfield</div></div>
<div class="c" style="left:1354.4px;top:161.43px;width:40.8px;height:26.18px">
<div class="t" style="left:3.76px;top:13.09px;font-size:13.09px;letter-spacing:-0.32px;color:#1b1b1b;">IL</div></div>
<div class="c" style="left:1396px;top:161.43px;width:41.6px;height:26.18px">
<div class="t" style="left:1.7px;top:13.09px;font-size:13.09px;letter-spacing:0.62px;color:#1b1b1b;">12355</div></div>
<div class="c" style="left:1438.4px;top:161.43px;width:83.9px;height:26.18px">
<div class="t" style="left:3.76px;top:13.09px;font-size:13.09px;letter-spacing:0.58px;color:#1b1b1b;">555-555-2351</div></div>
<div class="c" style="left:1523.1px;top:161.43px;width:70.5px;height:26.18px">
<div class="t" style="left:3.76px;top:13.09px;font-size:13.09px;letter-spacing:-0.04px;color:#1b1b1b;">B</div></div>
<div class="c" style="left:1594.4px;top:161.43px;width:102.2px;height:26.18px">
<div class="t" style="left:93.9px;top:13.09px;font-size:13.09px;letter-spacing:0.62px;color:#1b1b1b;">1</div></div>
<div style="left:906px;top:184.1px;width:20px;height:21.6px;background:#dfe3e8"></div>
<div style="left:926px;top:184.1px;width:874px;height:21.6px;background:#ffffff"></div>
<div style="left:925.48px;top:184.1px;width:1.04px;height:21.6px;background:#b5bac1"></div>
<div style="left:941.6px;top:184.1px;width:0.8px;height:21.6px;background:#d3d8e1"></div>
<div style="left:974.6px;top:184.1px;width:0.8px;height:21.6px;background:#d3d8e1"></div>
<div style="left:1087.2px;top:184.1px;width:0.8px;height:21.6px;background:#d3d8e1"></div>
<div style="left:1288.3px;top:184.1px;width:0.8px;height:21.6px;background:#d3d8e1"></div>
<div style="left:1353.6px;top:184.1px;width:0.8px;height:21.6px;background:#d3d8e1"></div>
<div style="left:1395.2px;top:184.1px;width:0.8px;height:21.6px;background:#d3d8e1"></div>
<div style="left:1437.6px;top:184.1px;width:0.8px;height:21.6px;background:#d3d8e1"></div>
<div style="left:1522.3px;top:184.1px;width:0.8px;height:21.6px;background:#d3d8e1"></div>
<div style="left:1593.6px;top:184.1px;width:0.8px;height:21.6px;background:#d3d8e1"></div>
<div style="left:1696.6px;top:184.1px;width:0.8px;height:21.6px;background:#d3d8e1"></div>
<div style="left:906px;top:183.62px;width:20px;height:0.96px;background:#c2c7ce"></div>
<div style="left:926.48px;top:183.7px;width:873.52px;height:0.8px;background:#d3d8e1"></div>
<svg style="position:absolute;left:929.84px;top:190.42px" width="9.6" height="9.6" viewBox="0 0 12 12">
<rect x="0.55" y="0.55" width="10.9" height="10.9" fill="#fbfbfb" stroke="#8e8e8e" stroke-width="1.1"/><path d="M2.4,6 H9.6 M6,2.4 V9.6" stroke="#111" stroke-width="1.45"/></svg>
<div class="c" style="left:942.4px;top:183.03px;width:32.2px;height:26.18px">
<div class="t" style="left:16px;top:13.09px;font-size:13.09px;letter-spacing:0.62px;color:#1b1b1b;">12</div></div>
<div class="c" style="left:975.4px;top:183.03px;width:111.8px;height:26.18px">
<div class="t" style="left:3.76px;top:13.09px;font-size:13.09px;letter-spacing:0.4px;color:#1b1b1b;">Carla Jones</div></div>
<div class="c" style="left:1088px;top:183.03px;width:200.3px;height:26.18px">
<div class="t" style="left:3.76px;top:13.09px;font-size:13.09px;letter-spacing:0.48px;color:#1b1b1b;">PO Box 11, Springfield, IL, 1234</div></div>
<div class="c" style="left:1289.1px;top:183.03px;width:64.5px;height:26.18px">
<div class="t" style="left:3.76px;top:13.09px;font-size:13.09px;letter-spacing:0.77px;color:#1b1b1b;">Springfield</div></div>
<div class="c" style="left:1354.4px;top:183.03px;width:40.8px;height:26.18px">
<div class="t" style="left:3.76px;top:13.09px;font-size:13.09px;letter-spacing:-0.32px;color:#1b1b1b;">IL</div></div>
<div class="c" style="left:1396px;top:183.03px;width:41.6px;height:26.18px">
<div class="t" style="left:1.7px;top:13.09px;font-size:13.09px;letter-spacing:0.62px;color:#1b1b1b;">12345</div></div>
<div class="c" style="left:1438.4px;top:183.03px;width:83.9px;height:26.18px">
<div class="t" style="left:3.76px;top:13.09px;font-size:13.09px;letter-spacing:0.58px;color:#1b1b1b;">555-555-1231</div></div>
<div class="c" style="left:1523.1px;top:183.03px;width:70.5px;height:26.18px">
<div class="t" style="left:3.76px;top:13.09px;font-size:13.09px;letter-spacing:-0.76px;color:#1b1b1b;">C</div></div>
<div class="c" style="left:1594.4px;top:183.03px;width:102.2px;height:26.18px">
<div class="t" style="left:93.9px;top:13.09px;font-size:13.09px;letter-spacing:0.62px;color:#1b1b1b;">2</div></div>
<div style="left:906px;top:205.7px;width:20px;height:21.6px;background:#dfe3e8"></div>
<div style="left:926px;top:205.7px;width:874px;height:21.6px;background:#f2f1f3"></div>
<div style="left:925.48px;top:205.7px;width:1.04px;height:21.6px;background:#b5bac1"></div>
<div style="left:941.6px;top:205.7px;width:0.8px;height:21.6px;background:#d3d8e1"></div>
<div style="left:974.6px;top:205.7px;width:0.8px;height:21.6px;background:#d3d8e1"></div>
<div style="left:1087.2px;top:205.7px;width:0.8px;height:21.6px;background:#d3d8e1"></div>
<div style="left:1288.3px;top:205.7px;width:0.8px;height:21.6px;background:#d3d8e1"></div>
<div style="left:1353.6px;top:205.7px;width:0.8px;height:21.6px;background:#d3d8e1"></div>
<div style="left:1395.2px;top:205.7px;width:0.8px;height:21.6px;background:#d3d8e1"></div>
<div style="left:1437.6px;top:205.7px;width:0.8px;height:21.6px;background:#d3d8e1"></div>
<div style="left:1522.3px;top:205.7px;width:0.8px;height:21.6px;background:#d3d8e1"></div>
<div style="left:1593.6px;top:205.7px;width:0.8px;height:21.6px;background:#d3d8e1"></div>
<div style="left:1696.6px;top:205.7px;width:0.8px;height:21.6px;background:#d3d8e1"></div>
<div style="left:906px;top:205.22px;width:20px;height:0.96px;background:#c2c7ce"></div>
<div style="left:926.48px;top:205.3px;width:873.52px;height:0.8px;background:#d3d8e1"></div>
<svg style="position:absolute;left:929.84px;top:212.02px" width="9.6" height="9.6" viewBox="0 0 12 12">
<rect x="0.55" y="0.55" width="10.9" height="10.9" fill="#fbfbfb" stroke="#8e8e8e" stroke-width="1.1"/><path d="M2.4,6 H9.6 M6,2.4 V9.6" stroke="#111" stroke-width="1.45"/></svg>
<div class="c" style="left:942.4px;top:204.63px;width:32.2px;height:26.18px">
<div class="t" style="left:16px;top:13.09px;font-size:13.09px;letter-spacing:0.62px;color:#1b1b1b;">13</div></div>
<div class="c" style="left:975.4px;top:204.63px;width:111.8px;height:26.18px">
<div class="t" style="left:3.76px;top:13.09px;font-size:13.09px;letter-spacing:0.76px;color:#1b1b1b;">Kevin Alexander</div></div>
<div class="c" style="left:1088px;top:204.63px;width:200.3px;height:26.18px">
<div class="t" style="left:3.76px;top:13.09px;font-size:13.09px;letter-spacing:0.47px;color:#1b1b1b;">PO Box 10340, Springfield, IL, </div></div>
<div class="c" style="left:1289.1px;top:204.63px;width:64.5px;height:26.18px">
<div class="t" style="left:3.76px;top:13.09px;font-size:13.09px;letter-spacing:0.77px;color:#1b1b1b;">Springfield</div></div>
<div class="c" style="left:1354.4px;top:204.63px;width:40.8px;height:26.18px">
<div class="t" style="left:3.76px;top:13.09px;font-size:13.09px;letter-spacing:-0.32px;color:#1b1b1b;">IL</div></div>
<div class="c" style="left:1396px;top:204.63px;width:41.6px;height:26.18px">
<div class="t" style="left:1.7px;top:13.09px;font-size:13.09px;letter-spacing:0.62px;color:#1b1b1b;">12344</div></div>
<div class="c" style="left:1438.4px;top:204.63px;width:83.9px;height:26.18px">
<div class="t" style="left:3.76px;top:13.09px;font-size:13.09px;letter-spacing:0.58px;color:#1b1b1b;">555-555-9991</div></div>
<div class="c" style="left:1523.1px;top:204.63px;width:70.5px;height:26.18px">
<div class="t" style="left:3.76px;top:13.09px;font-size:13.09px;letter-spacing:0.03px;color:#1b1b1b;">D</div></div>
<div class="c" style="left:1594.4px;top:204.63px;width:102.2px;height:26.18px">
<div class="t" style="left:93.9px;top:13.09px;font-size:13.09px;letter-spacing:0.62px;color:#1b1b1b;">2</div></div>
<div style="left:906px;top:227.3px;width:20px;height:21.6px;background:#dfe3e8"></div>
<div style="left:926px;top:227.3px;width:874px;height:21.6px;background:#ffffff"></div>
<div style="left:925.48px;top:227.3px;width:1.04px;height:21.6px;background:#b5bac1"></div>
<div style="left:941.6px;top:227.3px;width:0.8px;height:21.6px;background:#d3d8e1"></div>
<div style="left:974.6px;top:227.3px;width:0.8px;height:21.6px;background:#d3d8e1"></div>
<div style="left:1087.2px;top:227.3px;width:0.8px;height:21.6px;background:#d3d8e1"></div>
<div style="left:1288.3px;top:227.3px;width:0.8px;height:21.6px;background:#d3d8e1"></div>
<div style="left:1353.6px;top:227.3px;width:0.8px;height:21.6px;background:#d3d8e1"></div>
<div style="left:1395.2px;top:227.3px;width:0.8px;height:21.6px;background:#d3d8e1"></div>
<div style="left:1437.6px;top:227.3px;width:0.8px;height:21.6px;background:#d3d8e1"></div>
<div style="left:1522.3px;top:227.3px;width:0.8px;height:21.6px;background:#d3d8e1"></div>
<div style="left:1593.6px;top:227.3px;width:0.8px;height:21.6px;background:#d3d8e1"></div>
<div style="left:1696.6px;top:227.3px;width:0.8px;height:21.6px;background:#d3d8e1"></div>
<div style="left:906px;top:226.82px;width:20px;height:0.96px;background:#c2c7ce"></div>
<div style="left:926.48px;top:226.9px;width:873.52px;height:0.8px;background:#d3d8e1"></div>
<svg style="position:absolute;left:929.84px;top:233.62px" width="9.6" height="9.6" viewBox="0 0 12 12">
<rect x="0.55" y="0.55" width="10.9" height="10.9" fill="#fbfbfb" stroke="#8e8e8e" stroke-width="1.1"/><path d="M2.4,6 H9.6 M6,2.4 V9.6" stroke="#111" stroke-width="1.45"/></svg>
<div class="c" style="left:942.4px;top:226.23px;width:32.2px;height:26.18px">
<div class="t" style="left:16px;top:13.09px;font-size:13.09px;letter-spacing:0.62px;color:#1b1b1b;">14</div></div>
<div class="c" style="left:975.4px;top:226.23px;width:111.8px;height:26.18px">
<div class="t" style="left:3.76px;top:13.09px;font-size:13.09px;letter-spacing:0.74px;color:#1b1b1b;">Samantha Technician</div></div>
<div class="c" style="left:1088px;top:226.23px;width:200.3px;height:26.18px">
<div class="t" style="left:3.76px;top:13.09px;font-size:13.09px;letter-spacing:0.61px;color:#1b1b1b;">PO Box 123, Boston, MA, 23423</div></div>
<div class="c" style="left:1289.1px;top:226.23px;width:64.5px;height:26.18px">
<div class="t" style="left:3.76px;top:13.09px;font-size:13.09px;letter-spacing:0.98px;color:#1b1b1b;">Boston</div></div>
<div class="c" style="left:1354.4px;top:226.23px;width:40.8px;height:26.18px">
<div class="t" style="left:3.76px;top:13.09px;font-size:13.09px;letter-spacing:1.64px;color:#1b1b1b;">MA</div></div>
<div class="c" style="left:1396px;top:226.23px;width:41.6px;height:26.18px">
<div class="t" style="left:1.7px;top:13.09px;font-size:13.09px;letter-spacing:0.62px;color:#1b1b1b;">62311</div></div>
<div class="c" style="left:1438.4px;top:226.23px;width:83.9px;height:26.18px">
<div class="t" style="left:3.76px;top:13.09px;font-size:13.09px;letter-spacing:0.58px;color:#1b1b1b;">555-555-1301</div></div>
<div class="c" style="left:1523.1px;top:226.23px;width:70.5px;height:26.18px">
<div class="t" style="left:3.76px;top:13.09px;font-size:13.09px;letter-spacing:-0.83px;color:#1b1b1b;">E</div></div>
<div class="c" style="left:1594.4px;top:226.23px;width:102.2px;height:26.18px">
<div class="t" style="left:93.9px;top:13.09px;font-size:13.09px;letter-spacing:0.62px;color:#1b1b1b;">3</div></div>
<div style="left:906px;top:248.9px;width:20px;height:21.6px;background:#dfe3e8"></div>
<div style="left:926px;top:248.9px;width:874px;height:21.6px;background:#f2f1f3"></div>
<div style="left:925.48px;top:248.9px;width:1.04px;height:21.6px;background:#b5bac1"></div>
<div style="left:941.6px;top:248.9px;width:0.8px;height:21.6px;background:#d3d8e1"></div>
<div style="left:974.6px;top:248.9px;width:0.8px;height:21.6px;background:#d3d8e1"></div>
<div style="left:1087.2px;top:248.9px;width:0.8px;height:21.6px;background:#d3d8e1"></div>
<div style="left:1288.3px;top:248.9px;width:0.8px;height:21.6px;background:#d3d8e1"></div>
<div style="left:1353.6px;top:248.9px;width:0.8px;height:21.6px;background:#d3d8e1"></div>
<div style="left:1395.2px;top:248.9px;width:0.8px;height:21.6px;background:#d3d8e1"></div>
<div style="left:1437.6px;top:248.9px;width:0.8px;height:21.6px;background:#d3d8e1"></div>
<div style="left:1522.3px;top:248.9px;width:0.8px;height:21.6px;background:#d3d8e1"></div>
<div style="left:1593.6px;top:248.9px;width:0.8px;height:21.6px;background:#d3d8e1"></div>
<div style="left:1696.6px;top:248.9px;width:0.8px;height:21.6px;background:#d3d8e1"></div>
<div style="left:906px;top:248.42px;width:20px;height:0.96px;background:#c2c7ce"></div>
<div style="left:926.48px;top:248.5px;width:873.52px;height:0.8px;background:#d3d8e1"></div>
<svg style="position:absolute;left:929.84px;top:255.22px" width="9.6" height="9.6" viewBox="0 0 12 12">
<rect x="0.55" y="0.55" width="10.9" height="10.9" fill="#fbfbfb" stroke="#8e8e8e" stroke-width="1.1"/><path d="M2.4,6 H9.6 M6,2.4 V9.6" stroke="#111" stroke-width="1.45"/></svg>
<div class="c" style="left:942.4px;top:247.83px;width:32.2px;height:26.18px">
<div class="t" style="left:16px;top:13.09px;font-size:13.09px;letter-spacing:0.62px;color:#1b1b1b;">15</div></div>
<div class="c" style="left:975.4px;top:247.83px;width:111.8px;height:26.18px">
<div class="t" style="left:3.76px;top:13.09px;font-size:13.09px;letter-spacing:0.46px;color:#1b1b1b;">Louise King</div></div>
<div class="c" style="left:1088px;top:247.83px;width:200.3px;height:26.18px">
<div class="t" style="left:3.76px;top:13.09px;font-size:13.09px;letter-spacing:0.61px;color:#1b1b1b;">PO Box 2340, Boston, MA, 2034</div></div>
<div class="c" style="left:1289.1px;top:247.83px;width:64.5px;height:26.18px">
<div class="t" style="left:3.76px;top:13.09px;font-size:13.09px;letter-spacing:0.98px;color:#1b1b1b;">Boston</div></div>
<div class="c" style="left:1354.4px;top:247.83px;width:40.8px;height:26.18px">
<div class="t" style="left:3.76px;top:13.09px;font-size:13.09px;letter-spacing:1.64px;color:#1b1b1b;">MA</div></div>
<div class="c" style="left:1396px;top:247.83px;width:41.6px;height:26.18px">
<div class="t" style="left:1.7px;top:13.09px;font-size:13.09px;letter-spacing:0.62px;color:#1b1b1b;">62321</div></div>
<div class="c" style="left:1438.4px;top:247.83px;width:83.9px;height:26.18px">
<div class="t" style="left:3.76px;top:13.09px;font-size:13.09px;letter-spacing:0.58px;color:#1b1b1b;">555-555-9391</div></div>
<div class="c" style="left:1523.1px;top:247.83px;width:70.5px;height:26.18px">
<div class="t" style="left:3.76px;top:13.09px;font-size:13.09px;letter-spacing:-0.89px;color:#1b1b1b;">F</div></div>
<div class="c" style="left:1594.4px;top:247.83px;width:102.2px;height:26.18px">
<div class="t" style="left:93.9px;top:13.09px;font-size:13.09px;letter-spacing:0.62px;color:#1b1b1b;">3</div></div>
<div style="left:906px;top:270.5px;width:20px;height:21.6px;background:#dfe3e8"></div>
<div style="left:926px;top:270.5px;width:874px;height:21.6px;background:#ffffff"></div>
<div style="left:925.48px;top:270.5px;width:1.04px;height:21.6px;background:#b5bac1"></div>
<div style="left:941.6px;top:270.5px;width:0.8px;height:21.6px;background:#d3d8e1"></div>
<div style="left:974.6px;top:270.5px;width:0.8px;height:21.6px;background:#d3d8e1"></div>
<div style="left:1087.2px;top:270.5px;width:0.8px;height:21.6px;background:#d3d8e1"></div>
<div style="left:1288.3px;top:270.5px;width:0.8px;height:21.6px;background:#d3d8e1"></div>
<div style="left:1353.6px;top:270.5px;width:0.8px;height:21.6px;background:#d3d8e1"></div>
<div style="left:1395.2px;top:270.5px;width:0.8px;height:21.6px;background:#d3d8e1"></div>
<div style="left:1437.6px;top:270.5px;width:0.8px;height:21.6px;background:#d3d8e1"></div>
<div style="left:1522.3px;top:270.5px;width:0.8px;height:21.6px;background:#d3d8e1"></div>
<div style="left:1593.6px;top:270.5px;width:0.8px;height:21.6px;background:#d3d8e1"></div>
<div style="left:1696.6px;top:270.5px;width:0.8px;height:21.6px;background:#d3d8e1"></div>
<div style="left:906px;top:270.02px;width:20px;height:0.96px;background:#c2c7ce"></div>
<div style="left:926.48px;top:270.1px;width:873.52px;height:0.8px;background:#d3d8e1"></div>
<svg style="position:absolute;left:929.84px;top:276.82px" width="9.6" height="9.6" viewBox="0 0 12 12">
<rect x="0.55" y="0.55" width="10.9" height="10.9" fill="#fbfbfb" stroke="#8e8e8e" stroke-width="1.1"/><path d="M2.4,6 H9.6 M6,2.4 V9.6" stroke="#111" stroke-width="1.45"/></svg>
<div class="c" style="left:942.4px;top:269.43px;width:32.2px;height:26.18px">
<div class="t" style="left:16px;top:13.09px;font-size:13.09px;letter-spacing:0.62px;color:#1b1b1b;">16</div></div>
<div class="c" style="left:975.4px;top:269.43px;width:111.8px;height:26.18px">
<div class="t" style="left:3.76px;top:13.09px;font-size:13.09px;letter-spacing:0.42px;color:#1b1b1b;">Joe Chicken</div></div>
<div class="c" style="left:1088px;top:269.43px;width:200.3px;height:26.18px">
<div class="t" style="left:3.76px;top:13.09px;font-size:13.09px;letter-spacing:0.61px;color:#1b1b1b;">PO Box 239403, Boston, MA, 23</div></div>
<div class="c" style="left:1289.1px;top:269.43px;width:64.5px;height:26.18px">
<div class="t" style="left:3.76px;top:13.09px;font-size:13.09px;letter-spacing:0.98px;color:#1b1b1b;">Boston</div></div>
<div class="c" style="left:1354.4px;top:269.43px;width:40.8px;height:26.18px">
<div class="t" style="left:3.76px;top:13.09px;font-size:13.09px;letter-spacing:1.64px;color:#1b1b1b;">MA</div></div>
<div class="c" style="left:1396px;top:269.43px;width:41.6px;height:26.18px">
<div class="t" style="left:1.7px;top:13.09px;font-size:13.09px;letter-spacing:0.62px;color:#1b1b1b;">62332</div></div>
<div class="c" style="left:1438.4px;top:269.43px;width:83.9px;height:26.18px">
<div class="t" style="left:3.76px;top:13.09px;font-size:13.09px;letter-spacing:0.58px;color:#1b1b1b;">555-555-2931</div></div>
<div class="c" style="left:1523.1px;top:269.43px;width:70.5px;height:26.18px">
<div class="t" style="left:3.76px;top:13.09px;font-size:13.09px;letter-spacing:0.09px;color:#1b1b1b;">G</div></div>
<div class="c" style="left:1594.4px;top:269.43px;width:102.2px;height:26.18px">
<div class="t" style="left:93.9px;top:13.09px;font-size:13.09px;letter-spacing:0.62px;color:#1b1b1b;">4</div></div>
<div style="left:906px;top:292.1px;width:20px;height:21.6px;background:#dfe3e8"></div>
<div style="left:926px;top:292.1px;width:874px;height:21.6px;background:#f2f1f3"></div>
<div style="left:925.48px;top:292.1px;width:1.04px;height:21.6px;background:#b5bac1"></div>
<div style="left:941.6px;top:292.1px;width:0.8px;height:21.6px;background:#d3d8e1"></div>
<div style="left:974.6px;top:292.1px;width:0.8px;height:21.6px;background:#d3d8e1"></div>
<div style="left:1087.2px;top:292.1px;width:0.8px;height:21.6px;background:#d3d8e1"></div>
<div style="left:1288.3px;top:292.1px;width:0.8px;height:21.6px;background:#d3d8e1"></div>
<div style="left:1353.6px;top:292.1px;width:0.8px;height:21.6px;background:#d3d8e1"></div>
<div style="left:1395.2px;top:292.1px;width:0.8px;height:21.6px;background:#d3d8e1"></div>
<div style="left:1437.6px;top:292.1px;width:0.8px;height:21.6px;background:#d3d8e1"></div>
<div style="left:1522.3px;top:292.1px;width:0.8px;height:21.6px;background:#d3d8e1"></div>
<div style="left:1593.6px;top:292.1px;width:0.8px;height:21.6px;background:#d3d8e1"></div>
<div style="left:1696.6px;top:292.1px;width:0.8px;height:21.6px;background:#d3d8e1"></div>
<div style="left:906px;top:291.62px;width:20px;height:0.96px;background:#c2c7ce"></div>
<div style="left:926.48px;top:291.7px;width:873.52px;height:0.8px;background:#d3d8e1"></div>
<svg style="position:absolute;left:929.84px;top:298.42px" width="9.6" height="9.6" viewBox="0 0 12 12">
<rect x="0.55" y="0.55" width="10.9" height="10.9" fill="#fbfbfb" stroke="#8e8e8e" stroke-width="1.1"/><path d="M2.4,6 H9.6 M6,2.4 V9.6" stroke="#111" stroke-width="1.45"/></svg>
<div class="c" style="left:942.4px;top:291.03px;width:32.2px;height:26.18px">
<div class="t" style="left:16px;top:13.09px;font-size:13.09px;letter-spacing:0.62px;color:#1b1b1b;">17</div></div>
<div class="c" style="left:975.4px;top:291.03px;width:111.8px;height:26.18px">
<div class="t" style="left:3.76px;top:13.09px;font-size:13.09px;letter-spacing:0.63px;color:#1b1b1b;">Diana Gonzales</div></div>
<div class="c" style="left:1088px;top:291.03px;width:200.3px;height:26.18px">
<div class="t" style="left:3.76px;top:13.09px;font-size:13.09px;letter-spacing:0.47px;color:#1b1b1b;">PO Box 4930293, Boston, TX  72</div></div>
<div class="c" style="left:1289.1px;top:291.03px;width:64.5px;height:26.18px">
<div class="t" style="left:3.76px;top:13.09px;font-size:13.09px;letter-spacing:0.98px;color:#1b1b1b;">Boston</div></div>
<div class="c" style="left:1354.4px;top:291.03px;width:40.8px;height:26.18px">
<div class="t" style="left:3.76px;top:13.09px;font-size:13.09px;letter-spacing:1.64px;color:#1b1b1b;">MA</div></div>
<div class="c" style="left:1396px;top:291.03px;width:41.6px;height:26.18px">
<div class="t" style="left:1.7px;top:13.09px;font-size:13.09px;letter-spacing:0.62px;color:#1b1b1b;">62312</div></div>
<div class="c" style="left:1438.4px;top:291.03px;width:83.9px;height:26.18px">
<div class="t" style="left:3.76px;top:13.09px;font-size:13.09px;letter-spacing:0.58px;color:#1b1b1b;">555-555-2231</div></div>
<div class="c" style="left:1523.1px;top:291.03px;width:70.5px;height:26.18px">
<div class="t" style="left:3.76px;top:13.09px;font-size:13.09px;letter-spacing:0.03px;color:#1b1b1b;">H</div></div>
<div class="c" style="left:1594.4px;top:291.03px;width:102.2px;height:26.18px">
<div class="t" style="left:93.9px;top:13.09px;font-size:13.09px;letter-spacing:0.62px;color:#1b1b1b;">4</div></div>
<div style="left:906px;top:313.7px;width:20px;height:21.6px;background:#dfe3e8"></div>
<div style="left:926px;top:313.7px;width:874px;height:21.6px;background:#ffffff"></div>
<div style="left:925.48px;top:313.7px;width:1.04px;height:21.6px;background:#b5bac1"></div>
<div style="left:941.6px;top:313.7px;width:0.8px;height:21.6px;background:#d3d8e1"></div>
<div style="left:974.6px;top:313.7px;width:0.8px;height:21.6px;background:#d3d8e1"></div>
<div style="left:1087.2px;top:313.7px;width:0.8px;height:21.6px;background:#d3d8e1"></div>
<div style="left:1288.3px;top:313.7px;width:0.8px;height:21.6px;background:#d3d8e1"></div>
<div style="left:1353.6px;top:313.7px;width:0.8px;height:21.6px;background:#d3d8e1"></div>
<div style="left:1395.2px;top:313.7px;width:0.8px;height:21.6px;background:#d3d8e1"></div>
<div style="left:1437.6px;top:313.7px;width:0.8px;height:21.6px;background:#d3d8e1"></div>
<div style="left:1522.3px;top:313.7px;width:0.8px;height:21.6px;background:#d3d8e1"></div>
<div style="left:1593.6px;top:313.7px;width:0.8px;height:21.6px;background:#d3d8e1"></div>
<div style="left:1696.6px;top:313.7px;width:0.8px;height:21.6px;background:#d3d8e1"></div>
<div style="left:906px;top:313.22px;width:20px;height:0.96px;background:#c2c7ce"></div>
<div style="left:926.48px;top:313.3px;width:873.52px;height:0.8px;background:#d3d8e1"></div>
<div style="left:906px;top:334.82px;width:20px;height:0.96px;background:#c2c7ce"></div>
<div style="left:926.48px;top:334.9px;width:873.52px;height:0.8px;background:#d3d8e1"></div>
<svg style="position:absolute;left:910.8px;top:319.3px" width="10.4" height="10.4" viewBox="-6.5 -6.5 13 13">
<g stroke="#60636a" stroke-width="1.2"><line x1="-6.2" y1="0" x2="6.2" y2="0"/><line x1="0" y1="-6.2" x2="0" y2="6.2"/></g><g stroke="#7d8087" stroke-width="0.9"><line x1="-4.6" y1="-4.6" x2="4.6" y2="4.6"/><line x1="-4.6" y1="4.6" x2="4.6" y2="-4.6"/></g><circle r="1.8" fill="#60636a"/></svg>
<div class="c" style="left:942.4px;top:312.63px;width:32.2px;height:26.18px">
<div class="t" style="left:23.9px;top:13.09px;font-size:13.09px;letter-spacing:0.62px;color:#1b1b1b;">0</div></div>
<div class="c" style="left:1396px;top:312.63px;width:41.6px;height:26.18px">
<div class="t" style="left:33.3px;top:13.09px;font-size:13.09px;letter-spacing:0.62px;color:#1b1b1b;">0</div></div>
<div class="c" style="left:1594.4px;top:312.63px;width:102.2px;height:26.18px">
<div class="t" style="left:93.9px;top:13.09px;font-size:13.09px;letter-spacing:0.62px;color:#1b1b1b;">0</div></div>
<div style="left:0px;top:317px;width:805px;height:486px;background:#fff"></div>
<div style="left:0px;top:317px;width:805px;height:1.5px;background:#a5393f"></div>
<svg style="position:absolute;left:21px;top:330.57px" width="23.77" height="20.57" viewBox="0 0 26 21.5" preserveAspectRatio="none">
<rect x="0" y="0" width="26" height="21.5" fill="#6f83a8"/><rect x="0" y="0" width="26" height="4.6" fill="#5c76a3"/><rect x="0.9" y="1.6" width="7" height="1.5" fill="#a9bbe2"/><rect x="9.6" y="1.6" width="6.6" height="1.5" fill="#a9bbe2"/><rect x="18" y="1.6" width="6.6" height="1.5" fill="#a9bbe2"/><rect x="0.9" y="4.8" width="24" height="14" fill="#9aa5bf"/>
<rect x="0.9" y="4.9" width="7.1" height="3.6" fill="#f4f7fd"/>
<rect x="9.5" y="4.9" width="7.0" height="3.6" fill="#f4f7fd"/>
<rect x="17.8" y="4.9" width="7.0" height="3.6" fill="#f4f7fd"/>
<rect x="0.9" y="9.9" width="7.1" height="3.6" fill="#f4f7fd"/>
<rect x="9.5" y="9.9" width="7.0" height="3.6" fill="#f4f7fd"/>
<rect x="17.8" y="9.9" width="7.0" height="3.6" fill="#f4f7fd"/>
<rect x="0.9" y="14.9" width="7.1" height="3.6" fill="#f4f7fd"/>
<rect x="9.5" y="14.9" width="7.0" height="3.6" fill="#f4f7fd"/>
<rect x="17.8" y="14.9" width="7.0" height="3.6" fill="#f4f7fd"/>
<rect x="24.8" y="4.8" width="1.2" height="16.7" fill="#34405f"/><rect x="0" y="18.6" width="26" height="1.5" fill="#a6b2c9"/><rect x="0.9" y="20" width="25.1" height="1.5" fill="#34405f"/>
</svg>
<div class="t" style="left:61.01px;top:342.52px;font-size:18.29px;letter-spacing:0.03px;color:#2a2a2a;">Inventory</div>
<div style="left:5px;top:366px;width:799.6px;height:1.94px;background:#a8464b"></div>
<div style="left:5px;top:368.29px;width:799.6px;height:28.51px;background:linear-gradient(#e3e6ea,#dadee4)"></div>
<svg style="position:absolute;left:11.86px;top:375.14px" width="16" height="16.69" viewBox="0 0 14 14.6">
<defs><linearGradient id="tg" x1="0" y1="0" x2="0" y2="1"><stop offset="0" stop-color="#f8f9fb"/><stop offset="1" stop-color="#d6dae0"/></linearGradient></defs><path d="M0,14.6 L14,0 L14,14.6 Z" fill="url(#tg)"/><path d="M0,14.6 L14,0" stroke="#b9bec6" stroke-width="0.8"/></svg>
<div style="left:55.37px;top:368.29px;width:1.26px;height:28.51px;background:#aeb3ba"></div>
<div style="left:158.67px;top:368.29px;width:1.26px;height:28.51px;background:#aeb3ba"></div>
<div style="left:292.37px;top:368.29px;width:1.26px;height:28.51px;background:#aeb3ba"></div>
<div style="left:404.97px;top:368.29px;width:1.26px;height:28.51px;background:#aeb3ba"></div>
<div style="left:489.67px;top:368.29px;width:1.26px;height:28.51px;background:#aeb3ba"></div>
<div style="left:680.37px;top:368.29px;width:1.26px;height:28.51px;background:#aeb3ba"></div>
<div style="left:5px;top:395.66px;width:799.6px;height:1.14px;background:#cfd4da"></div>
<div style="left:55.31px;top:368.29px;width:103.3px;height:28.51px;background:linear-gradient(#fad35f,#fee97c)"></div>
<div class="c" style="left:57px;top:363.76px;width:75.44px;height:38.08px">
<div class="t" style="left:9.84px;top:19.04px;font-size:19.04px;letter-spacing:0.83px;color:#3b3b3b;">ItemID</div></div>
<svg style="position:absolute;left:141.58px;top:381.4px;overflow:visible" width="8" height="4.57" viewBox="0 0 7 4">
<path d="M-0.6,-0.5 L7.6,-0.5 L3.5,4.6 Z" fill="#fbfcfd" opacity="0.9"/><path d="M0,0 L7,0 L3.5,4 Z" fill="#232323"/></svg>
<div class="c" style="left:160.3px;top:363.76px;width:105.84px;height:38.08px">
<div class="t" style="left:4.94px;top:19.04px;font-size:19.04px;letter-spacing:0.93px;color:#3b3b3b;">Description</div></div>
<svg style="position:absolute;left:275.28px;top:381.4px;overflow:visible" width="8" height="4.57" viewBox="0 0 7 4">
<path d="M-0.6,-0.5 L7.6,-0.5 L3.5,4.6 Z" fill="#fbfcfd" opacity="0.9"/><path d="M0,0 L7,0 L3.5,4 Z" fill="#232323"/></svg>
<div class="c" style="left:294px;top:363.76px;width:84.74px;height:38.08px">
<div class="t" style="left:7.27px;top:19.04px;font-size:19.04px;letter-spacing:0.27px;color:#3b3b3b;">ListPrice</div></div>
<svg style="position:absolute;left:387.88px;top:381.4px;overflow:visible" width="8" height="4.57" viewBox="0 0 7 4">
<path d="M-0.6,-0.5 L7.6,-0.5 L3.5,4.6 Z" fill="#fbfcfd" opacity="0.9"/><path d="M0,0 L7,0 L3.5,4 Z" fill="#232323"/></svg>
<div class="c" style="left:406.6px;top:363.76px;width:56.84px;height:38.08px">
<div class="t" style="left:10.53px;top:19.04px;font-size:19.04px;letter-spacing:0.48px;color:#3b3b3b;">Cost</div></div>
<svg style="position:absolute;left:472.58px;top:381.4px;overflow:visible" width="8" height="4.57" viewBox="0 0 7 4">
<path d="M-0.6,-0.5 L7.6,-0.5 L3.5,4.6 Z" fill="#fbfcfd" opacity="0.9"/><path d="M0,0 L7,0 L3.5,4 Z" fill="#232323"/></svg>
<div class="c" style="left:491.3px;top:363.76px;width:162.84px;height:38.08px">
<div class="t" style="left:5.81px;top:19.04px;font-size:19.04px;letter-spacing:1.05px;color:#3b3b3b;">QuantityOnHand</div></div>
<svg style="position:absolute;left:663.28px;top:381.4px;overflow:visible" width="8" height="4.57" viewBox="0 0 7 4">
<path d="M-0.6,-0.5 L7.6,-0.5 L3.5,4.6 Z" fill="#fbfcfd" opacity="0.9"/><path d="M0,0 L7,0 L3.5,4 Z" fill="#232323"/></svg>
<div class="c" style="left:682px;top:363.76px;width:95.74px;height:38.08px">
<div class="t" style="left:9.44px;top:19.04px;font-size:19.04px;letter-spacing:0.61px;color:#3b3b3b;">Category</div></div>
<svg style="position:absolute;left:786.88px;top:381.4px;overflow:visible" width="8" height="4.57" viewBox="0 0 7 4">
<path d="M-0.6,-0.5 L7.6,-0.5 L3.5,4.6 Z" fill="#fbfcfd" opacity="0.9"/><path d="M0,0 L7,0 L3.5,4 Z" fill="#232323"/></svg>
<div style="left:5px;top:396.8px;width:27.4px;height:30.86px;background:#fcd75e"></div>
<div style="left:32.4px;top:396.8px;width:772.2px;height:30.86px;background:#ffffff"></div>
<div style="left:159.3px;top:396.8px;width:645.3px;height:30.86px;background:#a8cdf0"></div>
<div style="left:31.66px;top:396.8px;width:1.49px;height:30.86px;background:#b5bac1"></div>
<div style="left:55.43px;top:396.8px;width:1.14px;height:30.86px;background:#d3d8e1"></div>
<div style="left:158.73px;top:396.8px;width:1.14px;height:30.86px;background:#d3d8e1"></div>
<div style="left:292.43px;top:396.8px;width:1.14px;height:30.86px;background:#d3d8e1"></div>
<div style="left:405.03px;top:396.8px;width:1.14px;height:30.86px;background:#d3d8e1"></div>
<div style="left:489.73px;top:396.8px;width:1.14px;height:30.86px;background:#d3d8e1"></div>
<div style="left:680.43px;top:396.8px;width:1.14px;height:30.86px;background:#d3d8e1"></div>
<div style="left:803.46px;top:396.8px;width:1.14px;height:30.86px;background:#d3d8e1"></div>
<svg style="position:absolute;left:38.26px;top:405.83px" width="13.72" height="13.72" viewBox="0 0 12 12">
<rect x="0.55" y="0.55" width="10.9" height="10.9" fill="#fbfbfb" stroke="#8e8e8e" stroke-width="1.1"/><path d="M2.4,6 H9.6 M6,2.4 V9.6" stroke="#111" stroke-width="1.45"/></svg>
<div style="left:55.77px;top:396.23px;width:104.33px;height:32.23px;border:2.29px solid #f3a5ac;background:#fff;box-sizing:border-box"></div>
<div style="left:61.94px;top:400.23px;width:44.97px;height:26.29px;background:#000"></div>
<div class="c" style="left:56.57px;top:394.82px;width:102.16px;height:38.08px">
<div class="t" style="left:5.37px;top:19.04px;font-size:19.04px;letter-spacing:0.51px;color:#ffffff;">1223</div></div>
<div class="c" style="left:159.87px;top:394.82px;width:132.56px;height:38.08px">
<div class="t" style="left:5.37px;top:19.04px;font-size:19.04px;letter-spacing:0.51px;color:#1b1b1b;">Dog Food</div></div>
<div class="c" style="left:293.57px;top:394.82px;width:111.46px;height:38.08px">
<div class="t" style="left:49.84px;top:19.04px;font-size:19.04px;letter-spacing:0.4px;color:#1b1b1b;">$1.75  </div></div>
<div class="c" style="left:406.17px;top:394.82px;width:83.56px;height:38.08px">
<div class="t" style="left:21.94px;top:19.04px;font-size:19.04px;letter-spacing:0.4px;color:#1b1b1b;">$1.25  </div></div>
<div class="c" style="left:490.87px;top:394.82px;width:189.56px;height:38.08px">
<div class="t" style="left:177.89px;top:19.04px;font-size:19.04px;letter-spacing:0.51px;color:#1b1b1b;">3</div></div>
<div class="c" style="left:681.57px;top:394.82px;width:122.46px;height:38.08px">
<div class="t" style="left:5.37px;top:19.04px;font-size:19.04px;letter-spacing:-0.4px;color:#1b1b1b;">DOG</div></div>
<div style="left:5px;top:427.66px;width:27.4px;height:30.86px;background:#dfe3e8"></div>
<div style="left:32.4px;top:427.66px;width:772.2px;height:30.86px;background:#f2f1f3"></div>
<div style="left:31.66px;top:427.66px;width:1.49px;height:30.86px;background:#b5bac1"></div>
<div style="left:55.43px;top:427.66px;width:1.14px;height:30.86px;background:#d3d8e1"></div>
<div style="left:158.73px;top:427.66px;width:1.14px;height:30.86px;background:#d3d8e1"></div>
<div style="left:292.43px;top:427.66px;width:1.14px;height:30.86px;background:#d3d8e1"></div>
<div style="left:405.03px;top:427.66px;width:1.14px;height:30.86px;background:#d3d8e1"></div>
<div style="left:489.73px;top:427.66px;width:1.14px;height:30.86px;background:#d3d8e1"></div>
<div style="left:680.43px;top:427.66px;width:1.14px;height:30.86px;background:#d3d8e1"></div>
<div style="left:803.46px;top:427.66px;width:1.14px;height:30.86px;background:#d3d8e1"></div>
<div style="left:5px;top:426.97px;width:27.4px;height:1.37px;background:#c2c7ce"></div>
<div style="left:33.09px;top:427.09px;width:771.51px;height:1.14px;background:#d3d8e1"></div>
<svg style="position:absolute;left:38.26px;top:436.69px" width="13.72" height="13.72" viewBox="0 0 12 12">
<rect x="0.55" y="0.55" width="10.9" height="10.9" fill="#fbfbfb" stroke="#8e8e8e" stroke-width="1.1"/><path d="M2.4,6 H9.6 M6,2.4 V9.6" stroke="#111" stroke-width="1.45"/></svg>
<div class="c" style="left:56.57px;top:425.68px;width:102.16px;height:38.08px">
<div class="t" style="left:5.37px;top:19.04px;font-size:19.04px;letter-spacing:0.51px;color:#1b1b1b;">1224</div></div>
<div class="c" style="left:159.87px;top:425.68px;width:132.56px;height:38.08px">
<div class="t" style="left:5.37px;top:19.04px;font-size:19.04px;letter-spacing:0.49px;color:#1b1b1b;">Dog Brush</div></div>
<div class="c" style="left:293.57px;top:425.68px;width:111.46px;height:38.08px">
<div class="t" style="left:49.84px;top:19.04px;font-size:19.04px;letter-spacing:0.4px;color:#1b1b1b;">$3.75  </div></div>
<div class="c" style="left:406.17px;top:425.68px;width:83.56px;height:38.08px">
<div class="t" style="left:21.94px;top:19.04px;font-size:19.04px;letter-spacing:0.4px;color:#1b1b1b;">$2.75  </div></div>
<div class="c" style="left:490.87px;top:425.68px;width:189.56px;height:38.08px">
<div class="t" style="left:166.79px;top:19.04px;font-size:19.04px;letter-spacing:0.51px;color:#1b1b1b;">20</div></div>
<div class="c" style="left:681.57px;top:425.68px;width:122.46px;height:38.08px">
<div class="t" style="left:5.37px;top:19.04px;font-size:19.04px;letter-spacing:-0.4px;color:#1b1b1b;">DOG</div></div>
<div style="left:5px;top:458.52px;width:27.4px;height:30.86px;background:#dfe3e8"></div>
<div style="left:32.4px;top:458.52px;width:772.2px;height:30.86px;background:#ffffff"></div>
<div style="left:31.66px;top:458.52px;width:1.49px;height:30.86px;background:#b5bac1"></div>
<div style="left:55.43px;top:458.52px;width:1.14px;height:30.86px;background:#d3d8e1"></div>
<div style="left:158.73px;top:458.52px;width:1.14px;height:30.86px;background:#d3d8e1"></div>
<div style="left:292.43px;top:458.52px;width:1.14px;height:30.86px;background:#d3d8e1"></div>
<div style="left:405.03px;top:458.52px;width:1.14px;height:30.86px;background:#d3d8e1"></div>
<div style="left:489.73px;top:458.52px;width:1.14px;height:30.86px;background:#d3d8e1"></div>
<div style="left:680.43px;top:458.52px;width:1.14px;height:30.86px;background:#d3d8e1"></div>
<div style="left:803.46px;top:458.52px;width:1.14px;height:30.86px;background:#d3d8e1"></div>
<div style="left:5px;top:457.83px;width:27.4px;height:1.37px;background:#c2c7ce"></div>
<div style="left:33.09px;top:457.95px;width:771.51px;height:1.14px;background:#d3d8e1"></div>
<svg style="position:absolute;left:38.26px;top:467.55px" width="13.72" height="13.72" viewBox="0 0 12 12">
<rect x="0.55" y="0.55" width="10.9" height="10.9" fill="#fbfbfb" stroke="#8e8e8e" stroke-width="1.1"/><path d="M2.4,6 H9.6 M6,2.4 V9.6" stroke="#111" stroke-width="1.45"/></svg>
<div class="c" style="left:56.57px;top:456.54px;width:102.16px;height:38.08px">
<div class="t" style="left:5.37px;top:19.04px;font-size:19.04px;letter-spacing:0.51px;color:#1b1b1b;">1225</div></div>
<div class="c" style="left:159.87px;top:456.54px;width:132.56px;height:38.08px">
<div class="t" style="left:5.37px;top:19.04px;font-size:19.04px;letter-spacing:0.95px;color:#1b1b1b;">Dog Toothbrush</div></div>
<div class="c" style="left:293.57px;top:456.54px;width:111.46px;height:38.08px">
<div class="t" style="left:49.84px;top:19.04px;font-size:19.04px;letter-spacing:0.4px;color:#1b1b1b;">$4.10  </div></div>
<div class="c" style="left:406.17px;top:456.54px;width:83.56px;height:38.08px">
<div class="t" style="left:21.94px;top:19.04px;font-size:19.04px;letter-spacing:0.4px;color:#1b1b1b;">$3.50  </div></div>
<div class="c" style="left:490.87px;top:456.54px;width:189.56px;height:38.08px">
<div class="t" style="left:177.89px;top:19.04px;font-size:19.04px;letter-spacing:0.51px;color:#1b1b1b;">2</div></div>
<div class="c" style="left:681.57px;top:456.54px;width:122.46px;height:38.08px">
<div class="t" style="left:5.37px;top:19.04px;font-size:19.04px;letter-spacing:-0.4px;color:#1b1b1b;">DOG</div></div>
<div style="left:5px;top:489.38px;width:27.4px;height:30.86px;background:#dfe3e8"></div>
<div style="left:32.4px;top:489.38px;width:772.2px;height:30.86px;background:#f2f1f3"></div>
<div style="left:31.66px;top:489.38px;width:1.49px;height:30.86px;background:#b5bac1"></div>
<div style="left:55.43px;top:489.38px;width:1.14px;height:30.86px;background:#d3d8e1"></div>
<div style="left:158.73px;top:489.38px;width:1.14px;height:30.86px;background:#d3d8e1"></div>
<div style="left:292.43px;top:489.38px;width:1.14px;height:30.86px;background:#d3d8e1"></div>
<div style="left:405.03px;top:489.38px;width:1.14px;height:30.86px;background:#d3d8e1"></div>
<div style="left:489.73px;top:489.38px;width:1.14px;height:30.86px;background:#d3d8e1"></div>
<div style="left:680.43px;top:489.38px;width:1.14px;height:30.86px;background:#d3d8e1"></div>
<div style="left:803.46px;top:489.38px;width:1.14px;height:30.86px;background:#d3d8e1"></div>
<div style="left:5px;top:488.69px;width:27.4px;height:1.37px;background:#c2c7ce"></div>
<div style="left:33.09px;top:488.81px;width:771.51px;height:1.14px;background:#d3d8e1"></div>
<svg style="position:absolute;left:38.26px;top:498.41px" width="13.72" height="13.72" viewBox="0 0 12 12">
<rect x="0.55" y="0.55" width="10.9" height="10.9" fill="#fbfbfb" stroke="#8e8e8e" stroke-width="1.1"/><path d="M2.4,6 H9.6 M6,2.4 V9.6" stroke="#111" stroke-width="1.45"/></svg>
<div class="c" style="left:56.57px;top:487.4px;width:102.16px;height:38.08px">
<div class="t" style="left:5.37px;top:19.04px;font-size:19.04px;letter-spacing:0.51px;color:#1b1b1b;">1300</div></div>
<div class="c" style="left:159.87px;top:487.4px;width:132.56px;height:38.08px">
<div class="t" style="left:5.37px;top:19.04px;font-size:19.04px;letter-spacing:0.62px;color:#1b1b1b;">Cat Food</div></div>
<div class="c" style="left:293.57px;top:487.4px;width:111.46px;height:38.08px">
<div class="t" style="left:49.84px;top:19.04px;font-size:19.04px;letter-spacing:0.4px;color:#1b1b1b;">$1.50  </div></div>
<div class="c" style="left:406.17px;top:487.4px;width:83.56px;height:38.08px">
<div class="t" style="left:21.94px;top:19.04px;font-size:19.04px;letter-spacing:0.4px;color:#1b1b1b;">$0.50  </div></div>
<div class="c" style="left:490.87px;top:487.4px;width:189.56px;height:38.08px">
<div class="t" style="left:177.89px;top:19.04px;font-size:19.04px;letter-spacing:0.51px;color:#1b1b1b;">2</div></div>
<div class="c" style="left:681.57px;top:487.4px;width:122.46px;height:38.08px">
<div class="t" style="left:5.37px;top:19.04px;font-size:19.04px;letter-spacing:-0.48px;color:#1b1b1b;">CAT</div></div>
<div style="left:5px;top:520.24px;width:27.4px;height:30.86px;background:#dfe3e8"></div>
<div style="left:32.4px;top:520.24px;width:772.2px;height:30.86px;background:#ffffff"></div>
<div style="left:31.66px;top:520.24px;width:1.49px;height:30.86px;background:#b5bac1"></div>
<div style="left:55.43px;top:520.24px;width:1.14px;height:30.86px;background:#d3d8e1"></div>
<div style="left:158.73px;top:520.24px;width:1.14px;height:30.86px;background:#d3d8e1"></div>
<div style="left:292.43px;top:520.24px;width:1.14px;height:30.86px;background:#d3d8e1"></div>
<div style="left:405.03px;top:520.24px;width:1.14px;height:30.86px;background:#d3d8e1"></div>
<div style="left:489.73px;top:520.24px;width:1.14px;height:30.86px;background:#d3d8e1"></div>
<div style="left:680.43px;top:520.24px;width:1.14px;height:30.86px;background:#d3d8e1"></div>
<div style="left:803.46px;top:520.24px;width:1.14px;height:30.86px;background:#d3d8e1"></div>
<div style="left:5px;top:519.55px;width:27.4px;height:1.37px;background:#c2c7ce"></div>
<div style="left:33.09px;top:519.67px;width:771.51px;height:1.14px;background:#d3d8e1"></div>
<svg style="position:absolute;left:38.26px;top:529.27px" width="13.72" height="13.72" viewBox="0 0 12 12">
<rect x="0.55" y="0.55" width="10.9" height="10.9" fill="#fbfbfb" stroke="#8e8e8e" stroke-width="1.1"/><path d="M2.4,6 H9.6 M6,2.4 V9.6" stroke="#111" stroke-width="1.45"/></svg>
<div class="c" style="left:56.57px;top:518.26px;width:102.16px;height:38.08px">
<div class="t" style="left:5.37px;top:19.04px;font-size:19.04px;letter-spacing:0.51px;color:#1b1b1b;">1302</div></div>
<div class="c" style="left:159.87px;top:518.26px;width:132.56px;height:38.08px">
<div class="t" style="left:5.37px;top:19.04px;font-size:19.04px;letter-spacing:0.47px;color:#1b1b1b;">Cat Toy</div></div>
<div class="c" style="left:293.57px;top:518.26px;width:111.46px;height:38.08px">
<div class="t" style="left:49.84px;top:19.04px;font-size:19.04px;letter-spacing:0.4px;color:#1b1b1b;">$3.75  </div></div>
<div class="c" style="left:406.17px;top:518.26px;width:83.56px;height:38.08px">
<div class="t" style="left:21.94px;top:19.04px;font-size:19.04px;letter-spacing:0.4px;color:#1b1b1b;">$2.75  </div></div>
<div class="c" style="left:490.87px;top:518.26px;width:189.56px;height:38.08px">
<div class="t" style="left:166.79px;top:19.04px;font-size:19.04px;letter-spacing:0.51px;color:#1b1b1b;">25</div></div>
<div class="c" style="left:681.57px;top:518.26px;width:122.46px;height:38.08px">
<div class="t" style="left:5.37px;top:19.04px;font-size:19.04px;letter-spacing:-0.48px;color:#1b1b1b;">CAT</div></div>
<div style="left:5px;top:551.1px;width:27.4px;height:30.86px;background:#dfe3e8"></div>
<div style="left:32.4px;top:551.1px;width:772.2px;height:30.86px;background:#f2f1f3"></div>
<div style="left:31.66px;top:551.1px;width:1.49px;height:30.86px;background:#b5bac1"></div>
<div style="left:55.43px;top:551.1px;width:1.14px;height:30.86px;background:#d3d8e1"></div>
<div style="left:158.73px;top:551.1px;width:1.14px;height:30.86px;background:#d3d8e1"></div>
<div style="left:292.43px;top:551.1px;width:1.14px;height:30.86px;background:#d3d8e1"></div>
<div style="left:405.03px;top:551.1px;width:1.14px;height:30.86px;background:#d3d8e1"></div>
<div style="left:489.73px;top:551.1px;width:1.14px;height:30.86px;background:#d3d8e1"></div>
<div style="left:680.43px;top:551.1px;width:1.14px;height:30.86px;background:#d3d8e1"></div>
<div style="left:803.46px;top:551.1px;width:1.14px;height:30.86px;background:#d3d8e1"></div>
<div style="left:5px;top:550.41px;width:27.4px;height:1.37px;background:#c2c7ce"></div>
<div style="left:33.09px;top:550.53px;width:771.51px;height:1.14px;background:#d3d8e1"></div>
<svg style="position:absolute;left:38.26px;top:560.13px" width="13.72" height="13.72" viewBox="0 0 12 12">
<rect x="0.55" y="0.55" width="10.9" height="10.9" fill="#fbfbfb" stroke="#8e8e8e" stroke-width="1.1"/><path d="M2.4,6 H9.6 M6,2.4 V9.6" stroke="#111" stroke-width="1.45"/></svg>
<div class="c" style="left:56.57px;top:549.12px;width:102.16px;height:38.08px">
<div class="t" style="left:5.37px;top:19.04px;font-size:19.04px;letter-spacing:0.51px;color:#1b1b1b;">1502</div></div>
<div class="c" style="left:159.87px;top:549.12px;width:132.56px;height:38.08px">
<div class="t" style="left:5.37px;top:19.04px;font-size:19.04px;letter-spacing:0.31px;color:#1b1b1b;">Spade</div></div>
<div class="c" style="left:293.57px;top:549.12px;width:111.46px;height:38.08px">
<div class="t" style="left:49.84px;top:19.04px;font-size:19.04px;letter-spacing:0.4px;color:#1b1b1b;">$4.50  </div></div>
<div class="c" style="left:406.17px;top:549.12px;width:83.56px;height:38.08px">
<div class="t" style="left:21.94px;top:19.04px;font-size:19.04px;letter-spacing:0.4px;color:#1b1b1b;">$3.75  </div></div>
<div class="c" style="left:490.87px;top:549.12px;width:189.56px;height:38.08px">
<div class="t" style="left:166.79px;top:19.04px;font-size:19.04px;letter-spacing:0.51px;color:#1b1b1b;">15</div></div>
<div class="c" style="left:681.57px;top:549.12px;width:122.46px;height:38.08px">
<div class="t" style="left:5.37px;top:19.04px;font-size:19.04px;letter-spacing:-0.43px;color:#1b1b1b;">GAR</div></div>
<div style="left:5px;top:581.96px;width:27.4px;height:30.86px;background:#dfe3e8"></div>
<div style="left:32.4px;top:581.96px;width:772.2px;height:30.86px;background:#ffffff"></div>
<div style="left:31.66px;top:581.96px;width:1.49px;height:30.86px;background:#b5bac1"></div>
<div style="left:55.43px;top:581.96px;width:1.14px;height:30.86px;background:#d3d8e1"></div>
<div style="left:158.73px;top:581.96px;width:1.14px;height:30.86px;background:#d3d8e1"></div>
<div style="left:292.43px;top:581.96px;width:1.14px;height:30.86px;background:#d3d8e1"></div>
<div style="left:405.03px;top:581.96px;width:1.14px;height:30.86px;background:#d3d8e1"></div>
<div style="left:489.73px;top:581.96px;width:1.14px;height:30.86px;background:#d3d8e1"></div>
<div style="left:680.43px;top:581.96px;width:1.14px;height:30.86px;background:#d3d8e1"></div>
<div style="left:803.46px;top:581.96px;width:1.14px;height:30.86px;background:#d3d8e1"></div>
<div style="left:5px;top:581.27px;width:27.4px;height:1.37px;background:#c2c7ce"></div>
<div style="left:33.09px;top:581.39px;width:771.51px;height:1.14px;background:#d3d8e1"></div>
<svg style="position:absolute;left:38.26px;top:590.99px" width="13.72" height="13.72" viewBox="0 0 12 12">
<rect x="0.55" y="0.55" width="10.9" height="10.9" fill="#fbfbfb" stroke="#8e8e8e" stroke-width="1.1"/><path d="M2.4,6 H9.6 M6,2.4 V9.6" stroke="#111" stroke-width="1.45"/></svg>
<div class="c" style="left:56.57px;top:579.98px;width:102.16px;height:38.08px">
<div class="t" style="left:5.37px;top:19.04px;font-size:19.04px;letter-spacing:0.51px;color:#1b1b1b;">1504</div></div>
<div class="c" style="left:159.87px;top:579.98px;width:132.56px;height:38.08px">
<div class="t" style="left:5.37px;top:19.04px;font-size:19.04px;letter-spacing:-0.01px;color:#1b1b1b;">Rake</div></div>
<div class="c" style="left:293.57px;top:579.98px;width:111.46px;height:38.08px">
<div class="t" style="left:49.84px;top:19.04px;font-size:19.04px;letter-spacing:0.4px;color:#1b1b1b;">$5.99  </div></div>
<div class="c" style="left:406.17px;top:579.98px;width:83.56px;height:38.08px">
<div class="t" style="left:21.94px;top:19.04px;font-size:19.04px;letter-spacing:0.4px;color:#1b1b1b;">$4.80  </div></div>
<div class="c" style="left:490.87px;top:579.98px;width:189.56px;height:38.08px">
<div class="t" style="left:166.79px;top:19.04px;font-size:19.04px;letter-spacing:0.51px;color:#1b1b1b;">10</div></div>
<div class="c" style="left:681.57px;top:579.98px;width:122.46px;height:38.08px">
<div class="t" style="left:5.37px;top:19.04px;font-size:19.04px;letter-spacing:-0.43px;color:#1b1b1b;">GAR</div></div>
<div style="left:5px;top:612.82px;width:27.4px;height:30.86px;background:#dfe3e8"></div>
<div style="left:32.4px;top:612.82px;width:772.2px;height:30.86px;background:#f2f1f3"></div>
<div style="left:31.66px;top:612.82px;width:1.49px;height:30.86px;background:#b5bac1"></div>
<div style="left:55.43px;top:612.82px;width:1.14px;height:30.86px;background:#d3d8e1"></div>
<div style="left:158.73px;top:612.82px;width:1.14px;height:30.86px;background:#d3d8e1"></div>
<div style="left:292.43px;top:612.82px;width:1.14px;height:30.86px;background:#d3d8e1"></div>
<div style="left:405.03px;top:612.82px;width:1.14px;height:30.86px;background:#d3d8e1"></div>
<div style="left:489.73px;top:612.82px;width:1.14px;height:30.86px;background:#d3d8e1"></div>
<div style="left:680.43px;top:612.82px;width:1.14px;height:30.86px;background:#d3d8e1"></div>
<div style="left:803.46px;top:612.82px;width:1.14px;height:30.86px;background:#d3d8e1"></div>
<div style="left:5px;top:612.13px;width:27.4px;height:1.37px;background:#c2c7ce"></div>
<div style="left:33.09px;top:612.25px;width:771.51px;height:1.14px;background:#d3d8e1"></div>
<svg style="position:absolute;left:38.26px;top:621.85px" width="13.72" height="13.72" viewBox="0 0 12 12">
<rect x="0.55" y="0.55" width="10.9" height="10.9" fill="#fbfbfb" stroke="#8e8e8e" stroke-width="1.1"/><path d="M2.4,6 H9.6 M6,2.4 V9.6" stroke="#111" stroke-width="1.45"/></svg>
<div class="c" style="left:56.57px;top:610.84px;width:102.16px;height:38.08px">
<div class="t" style="left:5.37px;top:19.04px;font-size:19.04px;letter-spacing:0.51px;color:#1b1b1b;">3445</div></div>
<div class="c" style="left:159.87px;top:610.84px;width:132.56px;height:38.08px">
<div class="t" style="left:5.37px;top:19.04px;font-size:19.04px;letter-spacing:0.97px;color:#1b1b1b;">Hammer</div></div>
<div class="c" style="left:293.57px;top:610.84px;width:111.46px;height:38.08px">
<div class="t" style="left:49.84px;top:19.04px;font-size:19.04px;letter-spacing:0.4px;color:#1b1b1b;">$3.00  </div></div>
<div class="c" style="left:406.17px;top:610.84px;width:83.56px;height:38.08px">
<div class="t" style="left:21.94px;top:19.04px;font-size:19.04px;letter-spacing:0.4px;color:#1b1b1b;">$2.50  </div></div>
<div class="c" style="left:490.87px;top:610.84px;width:189.56px;height:38.08px">
<div class="t" style="left:166.79px;top:19.04px;font-size:19.04px;letter-spacing:0.51px;color:#1b1b1b;">23</div></div>
<div class="c" style="left:681.57px;top:610.84px;width:122.46px;height:38.08px">
<div class="t" style="left:5.37px;top:19.04px;font-size:19.04px;letter-spacing:-0.75px;color:#1b1b1b;">TOOL</div></div>
<div style="left:5px;top:643.68px;width:27.4px;height:30.86px;background:#dfe3e8"></div>
<div style="left:32.4px;top:643.68px;width:772.2px;height:30.86px;background:#ffffff"></div>
<div style="left:31.66px;top:643.68px;width:1.49px;height:30.86px;background:#b5bac1"></div>
<div style="left:55.43px;top:643.68px;width:1.14px;height:30.86px;background:#d3d8e1"></div>
<div style="left:158.73px;top:643.68px;width:1.14px;height:30.86px;background:#d3d8e1"></div>
<div style="left:292.43px;top:643.68px;width:1.14px;height:30.86px;background:#d3d8e1"></div>
<div style="left:405.03px;top:643.68px;width:1.14px;height:30.86px;background:#d3d8e1"></div>
<div style="left:489.73px;top:643.68px;width:1.14px;height:30.86px;background:#d3d8e1"></div>
<div style="left:680.43px;top:643.68px;width:1.14px;height:30.86px;background:#d3d8e1"></div>
<div style="left:803.46px;top:643.68px;width:1.14px;height:30.86px;background:#d3d8e1"></div>
<div style="left:5px;top:642.99px;width:27.4px;height:1.37px;background:#c2c7ce"></div>
<div style="left:33.09px;top:643.11px;width:771.51px;height:1.14px;background:#d3d8e1"></div>
<svg style="position:absolute;left:38.26px;top:652.71px" width="13.72" height="13.72" viewBox="0 0 12 12">
<rect x="0.55" y="0.55" width="10.9" height="10.9" fill="#fbfbfb" stroke="#8e8e8e" stroke-width="1.1"/><path d="M2.4,6 H9.6 M6,2.4 V9.6" stroke="#111" stroke-width="1.45"/></svg>
<div class="c" style="left:56.57px;top:641.7px;width:102.16px;height:38.08px">
<div class="t" style="left:5.37px;top:19.04px;font-size:19.04px;letter-spacing:0.51px;color:#1b1b1b;">3446</div></div>
<div class="c" style="left:159.87px;top:641.7px;width:132.56px;height:38.08px">
<div class="t" style="left:5.37px;top:19.04px;font-size:19.04px;letter-spacing:0.97px;color:#1b1b1b;">Hammer</div></div>
<div class="c" style="left:293.57px;top:641.7px;width:111.46px;height:38.08px">
<div class="t" style="left:49.84px;top:19.04px;font-size:19.04px;letter-spacing:0.4px;color:#1b1b1b;">$4.25  </div></div>
<div class="c" style="left:406.17px;top:641.7px;width:83.56px;height:38.08px">
<div class="t" style="left:21.94px;top:19.04px;font-size:19.04px;letter-spacing:0.4px;color:#1b1b1b;">$3.75  </div></div>
<div class="c" style="left:490.87px;top:641.7px;width:189.56px;height:38.08px">
<div class="t" style="left:166.79px;top:19.04px;font-size:19.04px;letter-spacing:0.51px;color:#1b1b1b;">15</div></div>
<div class="c" style="left:681.57px;top:641.7px;width:122.46px;height:38.08px">
<div class="t" style="left:5.37px;top:19.04px;font-size:19.04px;letter-spacing:-0.75px;color:#1b1b1b;">TOOL</div></div>
<div style="left:5px;top:674.54px;width:27.4px;height:30.86px;background:#dfe3e8"></div>
<div style="left:32.4px;top:674.54px;width:772.2px;height:30.86px;background:#f2f1f3"></div>
<div style="left:31.66px;top:674.54px;width:1.49px;height:30.86px;background:#b5bac1"></div>
<div style="left:55.43px;top:674.54px;width:1.14px;height:30.86px;background:#d3d8e1"></div>
<div style="left:158.73px;top:674.54px;width:1.14px;height:30.86px;background:#d3d8e1"></div>
<div style="left:292.43px;top:674.54px;width:1.14px;height:30.86px;background:#d3d8e1"></div>
<div style="left:405.03px;top:674.54px;width:1.14px;height:30.86px;background:#d3d8e1"></div>
<div style="left:489.73px;top:674.54px;width:1.14px;height:30.86px;background:#d3d8e1"></div>
<div style="left:680.43px;top:674.54px;width:1.14px;height:30.86px;background:#d3d8e1"></div>
<div style="left:803.46px;top:674.54px;width:1.14px;height:30.86px;background:#d3d8e1"></div>
<div style="left:5px;top:673.85px;width:27.4px;height:1.37px;background:#c2c7ce"></div>
<div style="left:33.09px;top:673.97px;width:771.51px;height:1.14px;background:#d3d8e1"></div>
<svg style="position:absolute;left:38.26px;top:683.57px" width="13.72" height="13.72" viewBox="0 0 12 12">
<rect x="0.55" y="0.55" width="10.9" height="10.9" fill="#fbfbfb" stroke="#8e8e8e" stroke-width="1.1"/><path d="M2.4,6 H9.6 M6,2.4 V9.6" stroke="#111" stroke-width="1.45"/></svg>
<div class="c" style="left:56.57px;top:672.56px;width:102.16px;height:38.08px">
<div class="t" style="left:5.37px;top:19.04px;font-size:19.04px;letter-spacing:0.51px;color:#1b1b1b;">8766</div></div>
<div class="c" style="left:159.87px;top:672.56px;width:132.56px;height:38.08px">
<div class="t" style="left:5.37px;top:19.04px;font-size:19.04px;letter-spacing:1.09px;color:#1b1b1b;">Wrench</div></div>
<div class="c" style="left:293.57px;top:672.56px;width:111.46px;height:38.08px">
<div class="t" style="left:49.84px;top:19.04px;font-size:19.04px;letter-spacing:0.4px;color:#1b1b1b;">$4.75  </div></div>
<div class="c" style="left:406.17px;top:672.56px;width:83.56px;height:38.08px">
<div class="t" style="left:21.94px;top:19.04px;font-size:19.04px;letter-spacing:0.4px;color:#1b1b1b;">$4.10  </div></div>
<div class="c" style="left:490.87px;top:672.56px;width:189.56px;height:38.08px">
<div class="t" style="left:166.79px;top:19.04px;font-size:19.04px;letter-spacing:0.51px;color:#1b1b1b;">18</div></div>
<div class="c" style="left:681.57px;top:672.56px;width:122.46px;height:38.08px">
<div class="t" style="left:5.37px;top:19.04px;font-size:19.04px;letter-spacing:-0.75px;color:#1b1b1b;">TOOL</div></div>
<div style="left:5px;top:705.4px;width:27.4px;height:30.86px;background:#dfe3e8"></div>
<div style="left:32.4px;top:705.4px;width:772.2px;height:30.86px;background:#ffffff"></div>
<div style="left:31.66px;top:705.4px;width:1.49px;height:30.86px;background:#b5bac1"></div>
<div style="left:55.43px;top:705.4px;width:1.14px;height:30.86px;background:#d3d8e1"></div>
<div style="left:158.73px;top:705.4px;width:1.14px;height:30.86px;background:#d3d8e1"></div>
<div style="left:292.43px;top:705.4px;width:1.14px;height:30.86px;background:#d3d8e1"></div>
<div style="left:405.03px;top:705.4px;width:1.14px;height:30.86px;background:#d3d8e1"></div>
<div style="left:489.73px;top:705.4px;width:1.14px;height:30.86px;background:#d3d8e1"></div>
<div style="left:680.43px;top:705.4px;width:1.14px;height:30.86px;background:#d3d8e1"></div>
<div style="left:803.46px;top:705.4px;width:1.14px;height:30.86px;background:#d3d8e1"></div>
<div style="left:5px;top:704.71px;width:27.4px;height:1.37px;background:#c2c7ce"></div>
<div style="left:33.09px;top:704.83px;width:771.51px;height:1.14px;background:#d3d8e1"></div>
<svg style="position:absolute;left:38.26px;top:714.43px" width="13.72" height="13.72" viewBox="0 0 12 12">
<rect x="0.55" y="0.55" width="10.9" height="10.9" fill="#fbfbfb" stroke="#8e8e8e" stroke-width="1.1"/><path d="M2.4,6 H9.6 M6,2.4 V9.6" stroke="#111" stroke-width="1.45"/></svg>
<div class="c" style="left:56.57px;top:703.42px;width:102.16px;height:38.08px">
<div class="t" style="left:5.37px;top:19.04px;font-size:19.04px;letter-spacing:0.51px;color:#1b1b1b;">8776</div></div>
<div class="c" style="left:159.87px;top:703.42px;width:132.56px;height:38.08px">
<div class="t" style="left:5.37px;top:19.04px;font-size:19.04px;letter-spacing:1.09px;color:#1b1b1b;">Wrench</div></div>
<div class="c" style="left:293.57px;top:703.42px;width:111.46px;height:38.08px">
<div class="t" style="left:49.84px;top:19.04px;font-size:19.04px;letter-spacing:0.4px;color:#1b1b1b;">$5.50  </div></div>
<div class="c" style="left:406.17px;top:703.42px;width:83.56px;height:38.08px">
<div class="t" style="left:21.94px;top:19.04px;font-size:19.04px;letter-spacing:0.4px;color:#1b1b1b;">$4.75  </div></div>
<div class="c" style="left:490.87px;top:703.42px;width:189.56px;height:38.08px">
<div class="t" style="left:166.79px;top:19.04px;font-size:19.04px;letter-spacing:0.51px;color:#1b1b1b;">12</div></div>
<div class="c" style="left:681.57px;top:703.42px;width:122.46px;height:38.08px">
<div class="t" style="left:5.37px;top:19.04px;font-size:19.04px;letter-spacing:-0.75px;color:#1b1b1b;">TOOL</div></div>
<div style="left:5px;top:736.26px;width:27.4px;height:30.86px;background:#dfe3e8"></div>
<div style="left:32.4px;top:736.26px;width:772.2px;height:30.86px;background:#f2f1f3"></div>
<div style="left:31.66px;top:736.26px;width:1.49px;height:30.86px;background:#b5bac1"></div>
<div style="left:55.43px;top:736.26px;width:1.14px;height:30.86px;background:#d3d8e1"></div>
<div style="left:158.73px;top:736.26px;width:1.14px;height:30.86px;background:#d3d8e1"></div>
<div style="left:292.43px;top:736.26px;width:1.14px;height:30.86px;background:#d3d8e1"></div>
<div style="left:405.03px;top:736.26px;width:1.14px;height:30.86px;background:#d3d8e1"></div>
<div style="left:489.73px;top:736.26px;width:1.14px;height:30.86px;background:#d3d8e1"></div>
<div style="left:680.43px;top:736.26px;width:1.14px;height:30.86px;background:#d3d8e1"></div>
<div style="left:803.46px;top:736.26px;width:1.14px;height:30.86px;background:#d3d8e1"></div>
<div style="left:5px;top:735.57px;width:27.4px;height:1.37px;background:#c2c7ce"></div>
<div style="left:33.09px;top:735.69px;width:771.51px;height:1.14px;background:#d3d8e1"></div>
<svg style="position:absolute;left:38.26px;top:745.29px" width="13.72" height="13.72" viewBox="0 0 12 12">
<rect x="0.55" y="0.55" width="10.9" height="10.9" fill="#fbfbfb" stroke="#8e8e8e" stroke-width="1.1"/><path d="M2.4,6 H9.6 M6,2.4 V9.6" stroke="#111" stroke-width="1.45"/></svg>
<div class="c" style="left:56.57px;top:734.28px;width:102.16px;height:38.08px">
<div class="t" style="left:5.37px;top:19.04px;font-size:19.04px;letter-spacing:0.51px;color:#1b1b1b;">9765</div></div>
<div class="c" style="left:159.87px;top:734.28px;width:132.56px;height:38.08px">
<div class="t" style="left:5.37px;top:19.04px;font-size:19.04px;letter-spacing:0.83px;color:#1b1b1b;">Archway</div></div>
<div class="c" style="left:293.57px;top:734.28px;width:111.46px;height:38.08px">
<div class="t" style="left:27.64px;top:19.04px;font-size:19.04px;letter-spacing:0.43px;color:#1b1b1b;">$275.00  </div></div>
<div class="c" style="left:406.17px;top:734.28px;width:83.56px;height:38.08px">
<div class="t" style="left:-0.26px;top:19.04px;font-size:19.04px;letter-spacing:0.43px;color:#1b1b1b;">$216.00  </div></div>
<div class="c" style="left:490.87px;top:734.28px;width:189.56px;height:38.08px">
<div class="t" style="left:177.89px;top:19.04px;font-size:19.04px;letter-spacing:0.51px;color:#1b1b1b;">2</div></div>
<div class="c" style="left:681.57px;top:734.28px;width:122.46px;height:38.08px">
<div class="t" style="left:5.37px;top:19.04px;font-size:19.04px;letter-spacing:-1.24px;color:#1b1b1b;">FLO</div></div>
<div style="left:5px;top:767.12px;width:27.4px;height:30.86px;background:#dfe3e8"></div>
<div style="left:32.4px;top:767.12px;width:772.2px;height:30.86px;background:#ffffff"></div>
<div style="left:31.66px;top:767.12px;width:1.49px;height:30.86px;background:#b5bac1"></div>
<div style="left:55.43px;top:767.12px;width:1.14px;height:30.86px;background:#d3d8e1"></div>
<div style="left:158.73px;top:767.12px;width:1.14px;height:30.86px;background:#d3d8e1"></div>
<div style="left:292.43px;top:767.12px;width:1.14px;height:30.86px;background:#d3d8e1"></div>
<div style="left:405.03px;top:767.12px;width:1.14px;height:30.86px;background:#d3d8e1"></div>
<div style="left:489.73px;top:767.12px;width:1.14px;height:30.86px;background:#d3d8e1"></div>
<div style="left:680.43px;top:767.12px;width:1.14px;height:30.86px;background:#d3d8e1"></div>
<div style="left:803.46px;top:767.12px;width:1.14px;height:30.86px;background:#d3d8e1"></div>
<div style="left:5px;top:766.43px;width:27.4px;height:1.37px;background:#c2c7ce"></div>
<div style="left:33.09px;top:766.55px;width:771.51px;height:1.14px;background:#d3d8e1"></div>
<div style="left:5px;top:797.29px;width:27.4px;height:1.37px;background:#c2c7ce"></div>
<div style="left:33.09px;top:797.41px;width:771.51px;height:1.14px;background:#d3d8e1"></div>
<svg style="position:absolute;left:11.27px;top:775.12px" width="14.86" height="14.86" viewBox="-6.5 -6.5 13 13">
<g stroke="#60636a" stroke-width="1.2"><line x1="-6.2" y1="0" x2="6.2" y2="0"/><line x1="0" y1="-6.2" x2="0" y2="6.2"/></g><g stroke="#7d8087" stroke-width="0.9"><line x1="-4.6" y1="-4.6" x2="4.6" y2="4.6"/><line x1="-4.6" y1="4.6" x2="4.6" y2="-4.6"/></g><circle r="1.8" fill="#60636a"/></svg>
<div class="c" style="left:293.57px;top:765.14px;width:111.46px;height:38.08px">
<div class="t" style="left:49.84px;top:19.04px;font-size:19.04px;letter-spacing:0.4px;color:#1b1b1b;">$0.00  </div></div>
<div class="c" style="left:406.17px;top:765.14px;width:83.56px;height:38.08px">
<div class="t" style="left:21.94px;top:19.04px;font-size:19.04px;letter-spacing:0.4px;color:#1b1b1b;">$0.00  </div></div>
<div class="c" style="left:490.87px;top:765.14px;width:189.56px;height:38.08px">
<div class="t" style="left:177.89px;top:19.04px;font-size:19.04px;letter-spacing:0.51px;color:#1b1b1b;">0</div></div>
<div style="left:805px;top:338px;width:534px;height:862px;background:#fff"></div>
<div style="left:805px;top:338px;width:534px;height:1.5px;background:#a5393f"></div>
<svg style="position:absolute;left:824.54px;top:352.26px" width="22.64" height="19.59" viewBox="0 0 26 21.5" preserveAspectRatio="none">
<rect x="0" y="0" width="26" height="21.5" fill="#6f83a8"/><rect x="0" y="0" width="26" height="4.6" fill="#5c76a3"/><rect x="0.9" y="1.6" width="7" height="1.5" fill="#a9bbe2"/><rect x="9.6" y="1.6" width="6.6" height="1.5" fill="#a9bbe2"/><rect x="18" y="1.6" width="6.6" height="1.5" fill="#a9bbe2"/><rect x="0.9" y="4.8" width="24" height="14" fill="#9aa5bf"/>
<rect x="0.9" y="4.9" width="7.1" height="3.6" fill="#f4f7fd"/>
<rect x="9.5" y="4.9" width="7.0" height="3.6" fill="#f4f7fd"/>
<rect x="17.8" y="4.9" width="7.0" height="3.6" fill="#f4f7fd"/>
<rect x="0.9" y="9.9" width="7.1" height="3.6" fill="#f4f7fd"/>
<rect x="9.5" y="9.9" width="7.0" height="3.6" fill="#f4f7fd"/>
<rect x="17.8" y="9.9" width="7.0" height="3.6" fill="#f4f7fd"/>
<rect x="0.9" y="14.9" width="7.1" height="3.6" fill="#f4f7fd"/>
<rect x="9.5" y="14.9" width="7.0" height="3.6" fill="#f4f7fd"/>
<rect x="17.8" y="14.9" width="7.0" height="3.6" fill="#f4f7fd"/>
<rect x="24.8" y="4.8" width="1.2" height="16.7" fill="#34405f"/><rect x="0" y="18.6" width="26" height="1.5" fill="#a6b2c9"/><rect x="0.9" y="20" width="25.1" height="1.5" fill="#34405f"/>
</svg>
<div class="t" style="left:862.64px;top:363.64px;font-size:17.42px;letter-spacing:-0.38px;color:#2a2a2a;">Order</div>
<div style="left:809.3px;top:386px;width:529.7px;height:1.85px;background:#a8464b"></div>
<div style="left:809.3px;top:388.18px;width:529.7px;height:27.42px;background:linear-gradient(#e3e6ea,#dadee4)"></div>
<svg style="position:absolute;left:815.83px;top:394.71px" width="15.24" height="15.89" viewBox="0 0 14 14.6">
<defs><linearGradient id="tg" x1="0" y1="0" x2="0" y2="1"><stop offset="0" stop-color="#f8f9fb"/><stop offset="1" stop-color="#d6dae0"/></linearGradient></defs><path d="M0,14.6 L14,0 L14,14.6 Z" fill="url(#tg)"/><path d="M0,14.6 L14,0" stroke="#b9bec6" stroke-width="0.8"/></svg>
<div style="left:857.9px;top:388.18px;width:1.2px;height:27.42px;background:#aeb3ba"></div>
<div style="left:934.7px;top:388.18px;width:1.2px;height:27.42px;background:#aeb3ba"></div>
<div style="left:1087.8px;top:388.18px;width:1.2px;height:27.42px;background:#aeb3ba"></div>
<div style="left:1200.8px;top:388.18px;width:1.2px;height:27.42px;background:#aeb3ba"></div>
<div style="left:1334.4px;top:388.18px;width:1.2px;height:27.42px;background:#aeb3ba"></div>
<div style="left:809.3px;top:414.51px;width:529.7px;height:1.09px;background:#cfd4da"></div>
<div style="left:857.85px;top:388.18px;width:76.8px;height:27.42px;background:linear-gradient(#fad35f,#fee97c)"></div>
<div class="c" style="left:859.5px;top:383.5px;width:46.95px;height:37.01px">
<div class="t" style="left:4.66px;top:18.5px;font-size:18.5px;letter-spacing:0.26px;color:#3b3b3b;">OrderID</div></div>
<svg style="position:absolute;left:918.43px;top:400.8px;overflow:visible" width="7.62" height="4.35" viewBox="0 0 7 4">
<path d="M-0.6,-0.5 L7.6,-0.5 L3.5,4.6 Z" fill="#fbfcfd" opacity="0.9"/><path d="M0,0 L7,0 L3.5,4 Z" fill="#232323"/></svg>
<div class="c" style="left:936.3px;top:383.5px;width:123.25px;height:37.01px">
<div class="t" style="left:20.51px;top:18.5px;font-size:18.5px;letter-spacing:0.45px;color:#3b3b3b;">OrderDate</div></div>
<svg style="position:absolute;left:1071.53px;top:400.8px;overflow:visible" width="7.62" height="4.35" viewBox="0 0 7 4">
<path d="M-0.6,-0.5 L7.6,-0.5 L3.5,4.6 Z" fill="#fbfcfd" opacity="0.9"/><path d="M0,0 L7,0 L3.5,4 Z" fill="#232323"/></svg>
<div class="c" style="left:1089.4px;top:383.5px;width:83.15px;height:37.01px">
<div class="t" style="left:31.14px;top:18.5px;font-size:18.5px;letter-spacing:-0.92px;color:#3b3b3b;">CID</div></div>
<svg style="position:absolute;left:1184.53px;top:400.8px;overflow:visible" width="7.62" height="4.35" viewBox="0 0 7 4">
<path d="M-0.6,-0.5 L7.6,-0.5 L3.5,4.6 Z" fill="#fbfcfd" opacity="0.9"/><path d="M0,0 L7,0 L3.5,4 Z" fill="#232323"/></svg>
<div class="c" style="left:1202.4px;top:383.5px;width:103.75px;height:37.01px">
<div class="t" style="left:4.66px;top:18.5px;font-size:18.5px;letter-spacing:0.22px;color:#3b3b3b;">EmployeeID</div></div>
<svg style="position:absolute;left:1318.13px;top:400.8px;overflow:visible" width="7.62" height="4.35" viewBox="0 0 7 4">
<path d="M-0.6,-0.5 L7.6,-0.5 L3.5,4.6 Z" fill="#fbfcfd" opacity="0.9"/><path d="M0,0 L7,0 L3.5,4 Z" fill="#232323"/></svg>
<div style="left:809.3px;top:415.6px;width:27.4px;height:29.39px;background:#fcd75e"></div>
<div style="left:836.7px;top:415.6px;width:502.3px;height:29.39px;background:#ffffff"></div>
<div style="left:935.3px;top:415.6px;width:403.7px;height:29.39px;background:#a8cdf0"></div>
<div style="left:835.99px;top:415.6px;width:1.42px;height:29.39px;background:#b5bac1"></div>
<div style="left:857.96px;top:415.6px;width:1.09px;height:29.39px;background:#d3d8e1"></div>
<div style="left:934.76px;top:415.6px;width:1.09px;height:29.39px;background:#d3d8e1"></div>
<div style="left:1087.86px;top:415.6px;width:1.09px;height:29.39px;background:#d3d8e1"></div>
<div style="left:1200.86px;top:415.6px;width:1.09px;height:29.39px;background:#d3d8e1"></div>
<div style="left:1334.46px;top:415.6px;width:1.09px;height:29.39px;background:#d3d8e1"></div>
<svg style="position:absolute;left:841.94px;top:424.2px" width="13.06" height="13.06" viewBox="0 0 12 12">
<rect x="0.55" y="0.55" width="10.9" height="10.9" fill="#fbfbfb" stroke="#8e8e8e" stroke-width="1.1"/><path d="M2.4,6 H9.6 M6,2.4 V9.6" stroke="#111" stroke-width="1.45"/></svg>
<div style="left:858.28px;top:415.06px;width:77.78px;height:30.7px;border:2.18px solid #f3a5ac;background:#fff;box-sizing:border-box"></div>
<div style="left:880.8px;top:418.87px;width:52.54px;height:25.04px;background:#000"></div>
<div class="c" style="left:859.04px;top:414.02px;width:75.71px;height:37.01px">
<div class="t" style="left:21.75px;top:18.5px;font-size:18.5px;letter-spacing:0.11px;color:#ffffff;">12200</div></div>
<div class="c" style="left:935.84px;top:414.02px;width:152.01px;height:37.01px">
<div class="t" style="left:60.61px;top:18.5px;font-size:18.5px;letter-spacing:0.79px;color:#1b1b1b;">1/15/2016</div></div>
<div class="c" style="left:1088.94px;top:414.02px;width:111.91px;height:37.01px">
<div class="t" style="left:99.55px;top:18.5px;font-size:18.5px;letter-spacing:0.11px;color:#1b1b1b;">8</div></div>
<div class="c" style="left:1201.94px;top:414.02px;width:132.51px;height:37.01px">
<div class="t" style="left:109.75px;top:18.5px;font-size:18.5px;letter-spacing:0.11px;color:#1b1b1b;">10</div></div>
<div style="left:809.3px;top:444.99px;width:27.4px;height:29.39px;background:#dfe3e8"></div>
<div style="left:836.7px;top:444.99px;width:502.3px;height:29.39px;background:#f2f1f3"></div>
<div style="left:835.99px;top:444.99px;width:1.42px;height:29.39px;background:#b5bac1"></div>
<div style="left:857.96px;top:444.99px;width:1.09px;height:29.39px;background:#d3d8e1"></div>
<div style="left:934.76px;top:444.99px;width:1.09px;height:29.39px;background:#d3d8e1"></div>
<div style="left:1087.86px;top:444.99px;width:1.09px;height:29.39px;background:#d3d8e1"></div>
<div style="left:1200.86px;top:444.99px;width:1.09px;height:29.39px;background:#d3d8e1"></div>
<div style="left:1334.46px;top:444.99px;width:1.09px;height:29.39px;background:#d3d8e1"></div>
<div style="left:809.3px;top:444.34px;width:27.4px;height:1.31px;background:#c2c7ce"></div>
<div style="left:837.35px;top:444.45px;width:501.65px;height:1.09px;background:#d3d8e1"></div>
<svg style="position:absolute;left:841.94px;top:453.59px" width="13.06" height="13.06" viewBox="0 0 12 12">
<rect x="0.55" y="0.55" width="10.9" height="10.9" fill="#fbfbfb" stroke="#8e8e8e" stroke-width="1.1"/><path d="M2.4,6 H9.6 M6,2.4 V9.6" stroke="#111" stroke-width="1.45"/></svg>
<div class="c" style="left:859.04px;top:443.41px;width:75.71px;height:37.01px">
<div class="t" style="left:21.75px;top:18.5px;font-size:18.5px;letter-spacing:0.11px;color:#1b1b1b;">12305</div></div>
<div class="c" style="left:935.84px;top:443.41px;width:152.01px;height:37.01px">
<div class="t" style="left:60.61px;top:18.5px;font-size:18.5px;letter-spacing:0.79px;color:#1b1b1b;">2/14/2016</div></div>
<div class="c" style="left:1088.94px;top:443.41px;width:111.91px;height:37.01px">
<div class="t" style="left:99.55px;top:18.5px;font-size:18.5px;letter-spacing:0.11px;color:#1b1b1b;">6</div></div>
<div class="c" style="left:1201.94px;top:443.41px;width:132.51px;height:37.01px">
<div class="t" style="left:109.75px;top:18.5px;font-size:18.5px;letter-spacing:0.11px;color:#1b1b1b;">12</div></div>
<div style="left:809.3px;top:474.38px;width:27.4px;height:29.39px;background:#dfe3e8"></div>
<div style="left:836.7px;top:474.38px;width:502.3px;height:29.39px;background:#ffffff"></div>
<div style="left:835.99px;top:474.38px;width:1.42px;height:29.39px;background:#b5bac1"></div>
<div style="left:857.96px;top:474.38px;width:1.09px;height:29.39px;background:#d3d8e1"></div>
<div style="left:934.76px;top:474.38px;width:1.09px;height:29.39px;background:#d3d8e1"></div>
<div style="left:1087.86px;top:474.38px;width:1.09px;height:29.39px;background:#d3d8e1"></div>
<div style="left:1200.86px;top:474.38px;width:1.09px;height:29.39px;background:#d3d8e1"></div>
<div style="left:1334.46px;top:474.38px;width:1.09px;height:29.39px;background:#d3d8e1"></div>
<div style="left:809.3px;top:473.73px;width:27.4px;height:1.31px;background:#c2c7ce"></div>
<div style="left:837.35px;top:473.84px;width:501.65px;height:1.09px;background:#d3d8e1"></div>
<svg style="position:absolute;left:841.94px;top:482.98px" width="13.06" height="13.06" viewBox="0 0 12 12">
<rect x="0.55" y="0.55" width="10.9" height="10.9" fill="#fbfbfb" stroke="#8e8e8e" stroke-width="1.1"/><path d="M2.4,6 H9.6 M6,2.4 V9.6" stroke="#111" stroke-width="1.45"/></svg>
<div class="c" style="left:859.04px;top:472.8px;width:75.71px;height:37.01px">
<div class="t" style="left:21.75px;top:18.5px;font-size:18.5px;letter-spacing:0.11px;color:#1b1b1b;">12306</div></div>
<div class="c" style="left:935.84px;top:472.8px;width:152.01px;height:37.01px">
<div class="t" style="left:60.61px;top:18.5px;font-size:18.5px;letter-spacing:0.79px;color:#1b1b1b;">2/23/2015</div></div>
<div class="c" style="left:1088.94px;top:472.8px;width:111.91px;height:37.01px">
<div class="t" style="left:99.55px;top:18.5px;font-size:18.5px;letter-spacing:0.11px;color:#1b1b1b;">7</div></div>
<div class="c" style="left:1201.94px;top:472.8px;width:132.51px;height:37.01px">
<div class="t" style="left:109.75px;top:18.5px;font-size:18.5px;letter-spacing:0.11px;color:#1b1b1b;">16</div></div>
<div style="left:809.3px;top:503.77px;width:27.4px;height:29.39px;background:#dfe3e8"></div>
<div style="left:836.7px;top:503.77px;width:502.3px;height:29.39px;background:#f2f1f3"></div>
<div style="left:835.99px;top:503.77px;width:1.42px;height:29.39px;background:#b5bac1"></div>
<div style="left:857.96px;top:503.77px;width:1.09px;height:29.39px;background:#d3d8e1"></div>
<div style="left:934.76px;top:503.77px;width:1.09px;height:29.39px;background:#d3d8e1"></div>
<div style="left:1087.86px;top:503.77px;width:1.09px;height:29.39px;background:#d3d8e1"></div>
<div style="left:1200.86px;top:503.77px;width:1.09px;height:29.39px;background:#d3d8e1"></div>
<div style="left:1334.46px;top:503.77px;width:1.09px;height:29.39px;background:#d3d8e1"></div>
<div style="left:809.3px;top:503.12px;width:27.4px;height:1.31px;background:#c2c7ce"></div>
<div style="left:837.35px;top:503.23px;width:501.65px;height:1.09px;background:#d3d8e1"></div>
<svg style="position:absolute;left:841.94px;top:512.37px" width="13.06" height="13.06" viewBox="0 0 12 12">
<rect x="0.55" y="0.55" width="10.9" height="10.9" fill="#fbfbfb" stroke="#8e8e8e" stroke-width="1.1"/><path d="M2.4,6 H9.6 M6,2.4 V9.6" stroke="#111" stroke-width="1.45"/></svg>
<div class="c" style="left:859.04px;top:502.19px;width:75.71px;height:37.01px">
<div class="t" style="left:21.75px;top:18.5px;font-size:18.5px;letter-spacing:0.11px;color:#1b1b1b;">12456</div></div>
<div class="c" style="left:935.84px;top:502.19px;width:152.01px;height:37.01px">
<div class="t" style="left:71.01px;top:18.5px;font-size:18.5px;letter-spacing:0.88px;color:#1b1b1b;">3/1/2016</div></div>
<div class="c" style="left:1088.94px;top:502.19px;width:111.91px;height:37.01px">
<div class="t" style="left:99.55px;top:18.5px;font-size:18.5px;letter-spacing:0.11px;color:#1b1b1b;">1</div></div>
<div class="c" style="left:1201.94px;top:502.19px;width:132.51px;height:37.01px">
<div class="t" style="left:109.75px;top:18.5px;font-size:18.5px;letter-spacing:0.11px;color:#1b1b1b;">12</div></div>
<div style="left:809.3px;top:533.16px;width:27.4px;height:29.39px;background:#dfe3e8"></div>
<div style="left:836.7px;top:533.16px;width:502.3px;height:29.39px;background:#ffffff"></div>
<div style="left:835.99px;top:533.16px;width:1.42px;height:29.39px;background:#b5bac1"></div>
<div style="left:857.96px;top:533.16px;width:1.09px;height:29.39px;background:#d3d8e1"></div>
<div style="left:934.76px;top:533.16px;width:1.09px;height:29.39px;background:#d3d8e1"></div>
<div style="left:1087.86px;top:533.16px;width:1.09px;height:29.39px;background:#d3d8e1"></div>
<div style="left:1200.86px;top:533.16px;width:1.09px;height:29.39px;background:#d3d8e1"></div>
<div style="left:1334.46px;top:533.16px;width:1.09px;height:29.39px;background:#d3d8e1"></div>
<div style="left:809.3px;top:532.51px;width:27.4px;height:1.31px;background:#c2c7ce"></div>
<div style="left:837.35px;top:532.62px;width:501.65px;height:1.09px;background:#d3d8e1"></div>
<svg style="position:absolute;left:841.94px;top:541.76px" width="13.06" height="13.06" viewBox="0 0 12 12">
<rect x="0.55" y="0.55" width="10.9" height="10.9" fill="#fbfbfb" stroke="#8e8e8e" stroke-width="1.1"/><path d="M2.4,6 H9.6 M6,2.4 V9.6" stroke="#111" stroke-width="1.45"/></svg>
<div class="c" style="left:859.04px;top:531.58px;width:75.71px;height:37.01px">
<div class="t" style="left:21.75px;top:18.5px;font-size:18.5px;letter-spacing:0.11px;color:#1b1b1b;">12457</div></div>
<div class="c" style="left:935.84px;top:531.58px;width:152.01px;height:37.01px">
<div class="t" style="left:71.01px;top:18.5px;font-size:18.5px;letter-spacing:0.88px;color:#1b1b1b;">3/7/2015</div></div>
<div class="c" style="left:1088.94px;top:531.58px;width:111.91px;height:37.01px">
<div class="t" style="left:99.55px;top:18.5px;font-size:18.5px;letter-spacing:0.11px;color:#1b1b1b;">1</div></div>
<div class="c" style="left:1201.94px;top:531.58px;width:132.51px;height:37.01px">
<div class="t" style="left:109.75px;top:18.5px;font-size:18.5px;letter-spacing:0.11px;color:#1b1b1b;">17</div></div>
<div style="left:809.3px;top:562.55px;width:27.4px;height:29.39px;background:#dfe3e8"></div>
<div style="left:836.7px;top:562.55px;width:502.3px;height:29.39px;background:#f2f1f3"></div>
<div style="left:835.99px;top:562.55px;width:1.42px;height:29.39px;background:#b5bac1"></div>
<div style="left:857.96px;top:562.55px;width:1.09px;height:29.39px;background:#d3d8e1"></div>
<div style="left:934.76px;top:562.55px;width:1.09px;height:29.39px;background:#d3d8e1"></div>
<div style="left:1087.86px;top:562.55px;width:1.09px;height:29.39px;background:#d3d8e1"></div>
<div style="left:1200.86px;top:562.55px;width:1.09px;height:29.39px;background:#d3d8e1"></div>
<div style="left:1334.46px;top:562.55px;width:1.09px;height:29.39px;background:#d3d8e1"></div>
<div style="left:809.3px;top:561.9px;width:27.4px;height:1.31px;background:#c2c7ce"></div>
<div style="left:837.35px;top:562.01px;width:501.65px;height:1.09px;background:#d3d8e1"></div>
<svg style="position:absolute;left:841.94px;top:571.15px" width="13.06" height="13.06" viewBox="0 0 12 12">
<rect x="0.55" y="0.55" width="10.9" height="10.9" fill="#fbfbfb" stroke="#8e8e8e" stroke-width="1.1"/><path d="M2.4,6 H9.6 M6,2.4 V9.6" stroke="#111" stroke-width="1.45"/></svg>
<div class="c" style="left:859.04px;top:560.97px;width:75.71px;height:37.01px">
<div class="t" style="left:21.75px;top:18.5px;font-size:18.5px;letter-spacing:0.11px;color:#1b1b1b;">12458</div></div>
<div class="c" style="left:935.84px;top:560.97px;width:152.01px;height:37.01px">
<div class="t" style="left:60.61px;top:18.5px;font-size:18.5px;letter-spacing:0.79px;color:#1b1b1b;">3/12/2016</div></div>
<div class="c" style="left:1088.94px;top:560.97px;width:111.91px;height:37.01px">
<div class="t" style="left:99.55px;top:18.5px;font-size:18.5px;letter-spacing:0.11px;color:#1b1b1b;">8</div></div>
<div class="c" style="left:1201.94px;top:560.97px;width:132.51px;height:37.01px">
<div class="t" style="left:109.75px;top:18.5px;font-size:18.5px;letter-spacing:0.11px;color:#1b1b1b;">12</div></div>
<div style="left:809.3px;top:591.94px;width:27.4px;height:29.39px;background:#dfe3e8"></div>
<div style="left:836.7px;top:591.94px;width:502.3px;height:29.39px;background:#ffffff"></div>
<div style="left:835.99px;top:591.94px;width:1.42px;height:29.39px;background:#b5bac1"></div>
<div style="left:857.96px;top:591.94px;width:1.09px;height:29.39px;background:#d3d8e1"></div>
<div style="left:934.76px;top:591.94px;width:1.09px;height:29.39px;background:#d3d8e1"></div>
<div style="left:1087.86px;top:591.94px;width:1.09px;height:29.39px;background:#d3d8e1"></div>
<div style="left:1200.86px;top:591.94px;width:1.09px;height:29.39px;background:#d3d8e1"></div>
<div style="left:1334.46px;top:591.94px;width:1.09px;height:29.39px;background:#d3d8e1"></div>
<div style="left:809.3px;top:591.29px;width:27.4px;height:1.31px;background:#c2c7ce"></div>
<div style="left:837.35px;top:591.4px;width:501.65px;height:1.09px;background:#d3d8e1"></div>
<svg style="position:absolute;left:841.94px;top:600.54px" width="13.06" height="13.06" viewBox="0 0 12 12">
<rect x="0.55" y="0.55" width="10.9" height="10.9" fill="#fbfbfb" stroke="#8e8e8e" stroke-width="1.1"/><path d="M2.4,6 H9.6 M6,2.4 V9.6" stroke="#111" stroke-width="1.45"/></svg>
<div class="c" style="left:859.04px;top:590.36px;width:75.71px;height:37.01px">
<div class="t" style="left:21.75px;top:18.5px;font-size:18.5px;letter-spacing:0.11px;color:#1b1b1b;">12459</div></div>
<div class="c" style="left:935.84px;top:590.36px;width:152.01px;height:37.01px">
<div class="t" style="left:71.01px;top:18.5px;font-size:18.5px;letter-spacing:0.88px;color:#1b1b1b;">6/2/2015</div></div>
<div class="c" style="left:1088.94px;top:590.36px;width:111.91px;height:37.01px">
<div class="t" style="left:99.55px;top:18.5px;font-size:18.5px;letter-spacing:0.11px;color:#1b1b1b;">2</div></div>
<div class="c" style="left:1201.94px;top:590.36px;width:132.51px;height:37.01px">
<div class="t" style="left:109.75px;top:18.5px;font-size:18.5px;letter-spacing:0.11px;color:#1b1b1b;">11</div></div>
<div style="left:809.3px;top:621.33px;width:27.4px;height:29.39px;background:#dfe3e8"></div>
<div style="left:836.7px;top:621.33px;width:502.3px;height:29.39px;background:#f2f1f3"></div>
<div style="left:835.99px;top:621.33px;width:1.42px;height:29.39px;background:#b5bac1"></div>
<div style="left:857.96px;top:621.33px;width:1.09px;height:29.39px;background:#d3d8e1"></div>
<div style="left:934.76px;top:621.33px;width:1.09px;height:29.39px;background:#d3d8e1"></div>
<div style="left:1087.86px;top:621.33px;width:1.09px;height:29.39px;background:#d3d8e1"></div>
<div style="left:1200.86px;top:621.33px;width:1.09px;height:29.39px;background:#d3d8e1"></div>
<div style="left:1334.46px;top:621.33px;width:1.09px;height:29.39px;background:#d3d8e1"></div>
<div style="left:809.3px;top:620.68px;width:27.4px;height:1.31px;background:#c2c7ce"></div>
<div style="left:837.35px;top:620.79px;width:501.65px;height:1.09px;background:#d3d8e1"></div>
<svg style="position:absolute;left:841.94px;top:629.93px" width="13.06" height="13.06" viewBox="0 0 12 12">
<rect x="0.55" y="0.55" width="10.9" height="10.9" fill="#fbfbfb" stroke="#8e8e8e" stroke-width="1.1"/><path d="M2.4,6 H9.6 M6,2.4 V9.6" stroke="#111" stroke-width="1.45"/></svg>
<div class="c" style="left:859.04px;top:619.75px;width:75.71px;height:37.01px">
<div class="t" style="left:21.75px;top:18.5px;font-size:18.5px;letter-spacing:0.11px;color:#1b1b1b;">12470</div></div>
<div class="c" style="left:935.84px;top:619.75px;width:152.01px;height:37.01px">
<div class="t" style="left:60.61px;top:18.5px;font-size:18.5px;letter-spacing:0.79px;color:#1b1b1b;">6/12/2015</div></div>
<div class="c" style="left:1088.94px;top:619.75px;width:111.91px;height:37.01px">
<div class="t" style="left:99.55px;top:18.5px;font-size:18.5px;letter-spacing:0.11px;color:#1b1b1b;">6</div></div>
<div class="c" style="left:1201.94px;top:619.75px;width:132.51px;height:37.01px">
<div class="t" style="left:109.75px;top:18.5px;font-size:18.5px;letter-spacing:0.11px;color:#1b1b1b;">13</div></div>
<div style="left:809.3px;top:650.72px;width:27.4px;height:29.39px;background:#dfe3e8"></div>
<div style="left:836.7px;top:650.72px;width:502.3px;height:29.39px;background:#ffffff"></div>
<div style="left:835.99px;top:650.72px;width:1.42px;height:29.39px;background:#b5bac1"></div>
<div style="left:857.96px;top:650.72px;width:1.09px;height:29.39px;background:#d3d8e1"></div>
<div style="left:934.76px;top:650.72px;width:1.09px;height:29.39px;background:#d3d8e1"></div>
<div style="left:1087.86px;top:650.72px;width:1.09px;height:29.39px;background:#d3d8e1"></div>
<div style="left:1200.86px;top:650.72px;width:1.09px;height:29.39px;background:#d3d8e1"></div>
<div style="left:1334.46px;top:650.72px;width:1.09px;height:29.39px;background:#d3d8e1"></div>
<div style="left:809.3px;top:650.07px;width:27.4px;height:1.31px;background:#c2c7ce"></div>
<div style="left:837.35px;top:650.18px;width:501.65px;height:1.09px;background:#d3d8e1"></div>
<svg style="position:absolute;left:841.94px;top:659.32px" width="13.06" height="13.06" viewBox="0 0 12 12">
<rect x="0.55" y="0.55" width="10.9" height="10.9" fill="#fbfbfb" stroke="#8e8e8e" stroke-width="1.1"/><path d="M2.4,6 H9.6 M6,2.4 V9.6" stroke="#111" stroke-width="1.45"/></svg>
<div class="c" style="left:859.04px;top:649.14px;width:75.71px;height:37.01px">
<div class="t" style="left:21.75px;top:18.5px;font-size:18.5px;letter-spacing:0.11px;color:#1b1b1b;">12471</div></div>
<div class="c" style="left:935.84px;top:649.14px;width:152.01px;height:37.01px">
<div class="t" style="left:60.61px;top:18.5px;font-size:18.5px;letter-spacing:0.79px;color:#1b1b1b;">6/17/2014</div></div>
<div class="c" style="left:1088.94px;top:649.14px;width:111.91px;height:37.01px">
<div class="t" style="left:99.55px;top:18.5px;font-size:18.5px;letter-spacing:0.11px;color:#1b1b1b;">5</div></div>
<div class="c" style="left:1201.94px;top:649.14px;width:132.51px;height:37.01px">
<div class="t" style="left:109.75px;top:18.5px;font-size:18.5px;letter-spacing:0.11px;color:#1b1b1b;">13</div></div>
<div style="left:809.3px;top:680.11px;width:27.4px;height:29.39px;background:#dfe3e8"></div>
<div style="left:836.7px;top:680.11px;width:502.3px;height:29.39px;background:#f2f1f3"></div>
<div style="left:835.99px;top:680.11px;width:1.42px;height:29.39px;background:#b5bac1"></div>
<div style="left:857.96px;top:680.11px;width:1.09px;height:29.39px;background:#d3d8e1"></div>
<div style="left:934.76px;top:680.11px;width:1.09px;height:29.39px;background:#d3d8e1"></div>
<div style="left:1087.86px;top:680.11px;width:1.09px;height:29.39px;background:#d3d8e1"></div>
<div style="left:1200.86px;top:680.11px;width:1.09px;height:29.39px;background:#d3d8e1"></div>
<div style="left:1334.46px;top:680.11px;width:1.09px;height:29.39px;background:#d3d8e1"></div>
<div style="left:809.3px;top:679.46px;width:27.4px;height:1.31px;background:#c2c7ce"></div>
<div style="left:837.35px;top:679.57px;width:501.65px;height:1.09px;background:#d3d8e1"></div>
<svg style="position:absolute;left:841.94px;top:688.71px" width="13.06" height="13.06" viewBox="0 0 12 12">
<rect x="0.55" y="0.55" width="10.9" height="10.9" fill="#fbfbfb" stroke="#8e8e8e" stroke-width="1.1"/><path d="M2.4,6 H9.6 M6,2.4 V9.6" stroke="#111" stroke-width="1.45"/></svg>
<div class="c" style="left:859.04px;top:678.53px;width:75.71px;height:37.01px">
<div class="t" style="left:21.75px;top:18.5px;font-size:18.5px;letter-spacing:0.11px;color:#1b1b1b;">12472</div></div>
<div class="c" style="left:935.84px;top:678.53px;width:152.01px;height:37.01px">
<div class="t" style="left:60.61px;top:18.5px;font-size:18.5px;letter-spacing:0.79px;color:#1b1b1b;">6/20/2014</div></div>
<div class="c" style="left:1088.94px;top:678.53px;width:111.91px;height:37.01px">
<div class="t" style="left:99.55px;top:18.5px;font-size:18.5px;letter-spacing:0.11px;color:#1b1b1b;">4</div></div>
<div class="c" style="left:1201.94px;top:678.53px;width:132.51px;height:37.01px">
<div class="t" style="left:109.75px;top:18.5px;font-size:18.5px;letter-spacing:0.11px;color:#1b1b1b;">17</div></div>
<div style="left:809.3px;top:709.5px;width:27.4px;height:29.39px;background:#dfe3e8"></div>
<div style="left:836.7px;top:709.5px;width:502.3px;height:29.39px;background:#ffffff"></div>
<div style="left:835.99px;top:709.5px;width:1.42px;height:29.39px;background:#b5bac1"></div>
<div style="left:857.96px;top:709.5px;width:1.09px;height:29.39px;background:#d3d8e1"></div>
<div style="left:934.76px;top:709.5px;width:1.09px;height:29.39px;background:#d3d8e1"></div>
<div style="left:1087.86px;top:709.5px;width:1.09px;height:29.39px;background:#d3d8e1"></div>
<div style="left:1200.86px;top:709.5px;width:1.09px;height:29.39px;background:#d3d8e1"></div>
<div style="left:1334.46px;top:709.5px;width:1.09px;height:29.39px;background:#d3d8e1"></div>
<div style="left:809.3px;top:708.85px;width:27.4px;height:1.31px;background:#c2c7ce"></div>
<div style="left:837.35px;top:708.96px;width:501.65px;height:1.09px;background:#d3d8e1"></div>
<svg style="position:absolute;left:841.94px;top:718.1px" width="13.06" height="13.06" viewBox="0 0 12 12">
<rect x="0.55" y="0.55" width="10.9" height="10.9" fill="#fbfbfb" stroke="#8e8e8e" stroke-width="1.1"/><path d="M2.4,6 H9.6 M6,2.4 V9.6" stroke="#111" stroke-width="1.45"/></svg>
<div class="c" style="left:859.04px;top:707.92px;width:75.71px;height:37.01px">
<div class="t" style="left:21.75px;top:18.5px;font-size:18.5px;letter-spacing:0.11px;color:#1b1b1b;">12480</div></div>
<div class="c" style="left:935.84px;top:707.92px;width:152.01px;height:37.01px">
<div class="t" style="left:60.61px;top:18.5px;font-size:18.5px;letter-spacing:0.79px;color:#1b1b1b;">6/28/2014</div></div>
<div class="c" style="left:1088.94px;top:707.92px;width:111.91px;height:37.01px">
<div class="t" style="left:99.55px;top:18.5px;font-size:18.5px;letter-spacing:0.11px;color:#1b1b1b;">3</div></div>
<div class="c" style="left:1201.94px;top:707.92px;width:132.51px;height:37.01px">
<div class="t" style="left:109.75px;top:18.5px;font-size:18.5px;letter-spacing:0.11px;color:#1b1b1b;">11</div></div>
<div style="left:809.3px;top:738.89px;width:27.4px;height:29.39px;background:#dfe3e8"></div>
<div style="left:836.7px;top:738.89px;width:502.3px;height:29.39px;background:#f2f1f3"></div>
<div style="left:835.99px;top:738.89px;width:1.42px;height:29.39px;background:#b5bac1"></div>
<div style="left:857.96px;top:738.89px;width:1.09px;height:29.39px;background:#d3d8e1"></div>
<div style="left:934.76px;top:738.89px;width:1.09px;height:29.39px;background:#d3d8e1"></div>
<div style="left:1087.86px;top:738.89px;width:1.09px;height:29.39px;background:#d3d8e1"></div>
<div style="left:1200.86px;top:738.89px;width:1.09px;height:29.39px;background:#d3d8e1"></div>
<div style="left:1334.46px;top:738.89px;width:1.09px;height:29.39px;background:#d3d8e1"></div>
<div style="left:809.3px;top:738.24px;width:27.4px;height:1.31px;background:#c2c7ce"></div>
<div style="left:837.35px;top:738.35px;width:501.65px;height:1.09px;background:#d3d8e1"></div>
<svg style="position:absolute;left:841.94px;top:747.49px" width="13.06" height="13.06" viewBox="0 0 12 12">
<rect x="0.55" y="0.55" width="10.9" height="10.9" fill="#fbfbfb" stroke="#8e8e8e" stroke-width="1.1"/><path d="M2.4,6 H9.6 M6,2.4 V9.6" stroke="#111" stroke-width="1.45"/></svg>
<div class="c" style="left:859.04px;top:737.31px;width:75.71px;height:37.01px">
<div class="t" style="left:21.75px;top:18.5px;font-size:18.5px;letter-spacing:0.11px;color:#1b1b1b;">12500</div></div>
<div class="c" style="left:935.84px;top:737.31px;width:152.01px;height:37.01px">
<div class="t" style="left:60.61px;top:18.5px;font-size:18.5px;letter-spacing:0.79px;color:#1b1b1b;">7/15/2014</div></div>
<div class="c" style="left:1088.94px;top:737.31px;width:111.91px;height:37.01px">
<div class="t" style="left:99.55px;top:18.5px;font-size:18.5px;letter-spacing:0.11px;color:#1b1b1b;">1</div></div>
<div class="c" style="left:1201.94px;top:737.31px;width:132.51px;height:37.01px">
<div class="t" style="left:109.75px;top:18.5px;font-size:18.5px;letter-spacing:0.11px;color:#1b1b1b;">14</div></div>
<div style="left:809.3px;top:768.28px;width:27.4px;height:29.39px;background:#dfe3e8"></div>
<div style="left:836.7px;top:768.28px;width:502.3px;height:29.39px;background:#ffffff"></div>
<div style="left:835.99px;top:768.28px;width:1.42px;height:29.39px;background:#b5bac1"></div>
<div style="left:857.96px;top:768.28px;width:1.09px;height:29.39px;background:#d3d8e1"></div>
<div style="left:934.76px;top:768.28px;width:1.09px;height:29.39px;background:#d3d8e1"></div>
<div style="left:1087.86px;top:768.28px;width:1.09px;height:29.39px;background:#d3d8e1"></div>
<div style="left:1200.86px;top:768.28px;width:1.09px;height:29.39px;background:#d3d8e1"></div>
<div style="left:1334.46px;top:768.28px;width:1.09px;height:29.39px;background:#d3d8e1"></div>
<div style="left:809.3px;top:767.63px;width:27.4px;height:1.31px;background:#c2c7ce"></div>
<div style="left:837.35px;top:767.74px;width:501.65px;height:1.09px;background:#d3d8e1"></div>
<svg style="position:absolute;left:841.94px;top:776.88px" width="13.06" height="13.06" viewBox="0 0 12 12">
<rect x="0.55" y="0.55" width="10.9" height="10.9" fill="#fbfbfb" stroke="#8e8e8e" stroke-width="1.1"/><path d="M2.4,6 H9.6 M6,2.4 V9.6" stroke="#111" stroke-width="1.45"/></svg>
<div class="c" style="left:859.04px;top:766.7px;width:75.71px;height:37.01px">
<div class="t" style="left:21.75px;top:18.5px;font-size:18.5px;letter-spacing:0.11px;color:#1b1b1b;">12501</div></div>
<div class="c" style="left:935.84px;top:766.7px;width:152.01px;height:37.01px">
<div class="t" style="left:60.61px;top:18.5px;font-size:18.5px;letter-spacing:0.79px;color:#1b1b1b;">7/15/2014</div></div>
<div class="c" style="left:1088.94px;top:766.7px;width:111.91px;height:37.01px">
<div class="t" style="left:99.55px;top:18.5px;font-size:18.5px;letter-spacing:0.11px;color:#1b1b1b;">4</div></div>
<div class="c" style="left:1201.94px;top:766.7px;width:132.51px;height:37.01px">
<div class="t" style="left:109.75px;top:18.5px;font-size:18.5px;letter-spacing:0.11px;color:#1b1b1b;">15</div></div>
<div style="left:809.3px;top:797.67px;width:27.4px;height:29.39px;background:#dfe3e8"></div>
<div style="left:836.7px;top:797.67px;width:502.3px;height:29.39px;background:#f2f1f3"></div>
<div style="left:835.99px;top:797.67px;width:1.42px;height:29.39px;background:#b5bac1"></div>
<div style="left:857.96px;top:797.67px;width:1.09px;height:29.39px;background:#d3d8e1"></div>
<div style="left:934.76px;top:797.67px;width:1.09px;height:29.39px;background:#d3d8e1"></div>
<div style="left:1087.86px;top:797.67px;width:1.09px;height:29.39px;background:#d3d8e1"></div>
<div style="left:1200.86px;top:797.67px;width:1.09px;height:29.39px;background:#d3d8e1"></div>
<div style="left:1334.46px;top:797.67px;width:1.09px;height:29.39px;background:#d3d8e1"></div>
<div style="left:809.3px;top:797.02px;width:27.4px;height:1.31px;background:#c2c7ce"></div>
<div style="left:837.35px;top:797.13px;width:501.65px;height:1.09px;background:#d3d8e1"></div>
<svg style="position:absolute;left:841.94px;top:806.27px" width="13.06" height="13.06" viewBox="0 0 12 12">
<rect x="0.55" y="0.55" width="10.9" height="10.9" fill="#fbfbfb" stroke="#8e8e8e" stroke-width="1.1"/><path d="M2.4,6 H9.6 M6,2.4 V9.6" stroke="#111" stroke-width="1.45"/></svg>
<div class="c" style="left:859.04px;top:796.09px;width:75.71px;height:37.01px">
<div class="t" style="left:21.75px;top:18.5px;font-size:18.5px;letter-spacing:0.11px;color:#1b1b1b;">12502</div></div>
<div class="c" style="left:935.84px;top:796.09px;width:152.01px;height:37.01px">
<div class="t" style="left:50.21px;top:18.5px;font-size:18.5px;letter-spacing:0.72px;color:#1b1b1b;">11/15/2014</div></div>
<div class="c" style="left:1088.94px;top:796.09px;width:111.91px;height:37.01px">
<div class="t" style="left:99.55px;top:18.5px;font-size:18.5px;letter-spacing:0.11px;color:#1b1b1b;">6</div></div>
<div class="c" style="left:1201.94px;top:796.09px;width:132.51px;height:37.01px">
<div class="t" style="left:109.75px;top:18.5px;font-size:18.5px;letter-spacing:0.11px;color:#1b1b1b;">17</div></div>
<div style="left:809.3px;top:827.06px;width:27.4px;height:29.39px;background:#dfe3e8"></div>
<div style="left:836.7px;top:827.06px;width:502.3px;height:29.39px;background:#ffffff"></div>
<div style="left:835.99px;top:827.06px;width:1.42px;height:29.39px;background:#b5bac1"></div>
<div style="left:857.96px;top:827.06px;width:1.09px;height:29.39px;background:#d3d8e1"></div>
<div style="left:934.76px;top:827.06px;width:1.09px;height:29.39px;background:#d3d8e1"></div>
<div style="left:1087.86px;top:827.06px;width:1.09px;height:29.39px;background:#d3d8e1"></div>
<div style="left:1200.86px;top:827.06px;width:1.09px;height:29.39px;background:#d3d8e1"></div>
<div style="left:1334.46px;top:827.06px;width:1.09px;height:29.39px;background:#d3d8e1"></div>
<div style="left:809.3px;top:826.41px;width:27.4px;height:1.31px;background:#c2c7ce"></div>
<div style="left:837.35px;top:826.52px;width:501.65px;height:1.09px;background:#d3d8e1"></div>
<svg style="position:absolute;left:841.94px;top:835.66px" width="13.06" height="13.06" viewBox="0 0 12 12">
<rect x="0.55" y="0.55" width="10.9" height="10.9" fill="#fbfbfb" stroke="#8e8e8e" stroke-width="1.1"/><path d="M2.4,6 H9.6 M6,2.4 V9.6" stroke="#111" stroke-width="1.45"/></svg>
<div class="c" style="left:859.04px;top:825.48px;width:75.71px;height:37.01px">
<div class="t" style="left:21.75px;top:18.5px;font-size:18.5px;letter-spacing:0.11px;color:#1b1b1b;">12503</div></div>
<div class="c" style="left:935.84px;top:825.48px;width:152.01px;height:37.01px">
<div class="t" style="left:50.21px;top:18.5px;font-size:18.5px;letter-spacing:0.72px;color:#1b1b1b;">11/23/2015</div></div>
<div class="c" style="left:1088.94px;top:825.48px;width:111.91px;height:37.01px">
<div class="t" style="left:99.55px;top:18.5px;font-size:18.5px;letter-spacing:0.11px;color:#1b1b1b;">5</div></div>
<div class="c" style="left:1201.94px;top:825.48px;width:132.51px;height:37.01px">
<div class="t" style="left:109.75px;top:18.5px;font-size:18.5px;letter-spacing:0.11px;color:#1b1b1b;">11</div></div>
<div style="left:809.3px;top:856.45px;width:27.4px;height:29.39px;background:#dfe3e8"></div>
<div style="left:836.7px;top:856.45px;width:502.3px;height:29.39px;background:#f2f1f3"></div>
<div style="left:835.99px;top:856.45px;width:1.42px;height:29.39px;background:#b5bac1"></div>
<div style="left:857.96px;top:856.45px;width:1.09px;height:29.39px;background:#d3d8e1"></div>
<div style="left:934.76px;top:856.45px;width:1.09px;height:29.39px;background:#d3d8e1"></div>
<div style="left:1087.86px;top:856.45px;width:1.09px;height:29.39px;background:#d3d8e1"></div>
<div style="left:1200.86px;top:856.45px;width:1.09px;height:29.39px;background:#d3d8e1"></div>
<div style="left:1334.46px;top:856.45px;width:1.09px;height:29.39px;background:#d3d8e1"></div>
<div style="left:809.3px;top:855.8px;width:27.4px;height:1.31px;background:#c2c7ce"></div>
<div style="left:837.35px;top:855.91px;width:501.65px;height:1.09px;background:#d3d8e1"></div>
<svg style="position:absolute;left:841.94px;top:865.05px" width="13.06" height="13.06" viewBox="0 0 12 12">
<rect x="0.55" y="0.55" width="10.9" height="10.9" fill="#fbfbfb" stroke="#8e8e8e" stroke-width="1.1"/><path d="M2.4,6 H9.6 M6,2.4 V9.6" stroke="#111" stroke-width="1.45"/></svg>
<div class="c" style="left:859.04px;top:854.87px;width:75.71px;height:37.01px">
<div class="t" style="left:21.75px;top:18.5px;font-size:18.5px;letter-spacing:0.11px;color:#1b1b1b;">12504</div></div>
<div class="c" style="left:935.84px;top:854.87px;width:152.01px;height:37.01px">
<div class="t" style="left:60.61px;top:18.5px;font-size:18.5px;letter-spacing:0.79px;color:#1b1b1b;">12/3/2015</div></div>
<div class="c" style="left:1088.94px;top:854.87px;width:111.91px;height:37.01px">
<div class="t" style="left:99.55px;top:18.5px;font-size:18.5px;letter-spacing:0.11px;color:#1b1b1b;">3</div></div>
<div class="c" style="left:1201.94px;top:854.87px;width:132.51px;height:37.01px">
<div class="t" style="left:109.75px;top:18.5px;font-size:18.5px;letter-spacing:0.11px;color:#1b1b1b;">10</div></div>
<div style="left:809.3px;top:885.84px;width:27.4px;height:29.39px;background:#dfe3e8"></div>
<div style="left:836.7px;top:885.84px;width:502.3px;height:29.39px;background:#ffffff"></div>
<div style="left:835.99px;top:885.84px;width:1.42px;height:29.39px;background:#b5bac1"></div>
<div style="left:857.96px;top:885.84px;width:1.09px;height:29.39px;background:#d3d8e1"></div>
<div style="left:934.76px;top:885.84px;width:1.09px;height:29.39px;background:#d3d8e1"></div>
<div style="left:1087.86px;top:885.84px;width:1.09px;height:29.39px;background:#d3d8e1"></div>
<div style="left:1200.86px;top:885.84px;width:1.09px;height:29.39px;background:#d3d8e1"></div>
<div style="left:1334.46px;top:885.84px;width:1.09px;height:29.39px;background:#d3d8e1"></div>
<div style="left:809.3px;top:885.19px;width:27.4px;height:1.31px;background:#c2c7ce"></div>
<div style="left:837.35px;top:885.3px;width:501.65px;height:1.09px;background:#d3d8e1"></div>
<svg style="position:absolute;left:841.94px;top:894.44px" width="13.06" height="13.06" viewBox="0 0 12 12">
<rect x="0.55" y="0.55" width="10.9" height="10.9" fill="#fbfbfb" stroke="#8e8e8e" stroke-width="1.1"/><path d="M2.4,6 H9.6 M6,2.4 V9.6" stroke="#111" stroke-width="1.45"/></svg>
<div class="c" style="left:859.04px;top:884.26px;width:75.71px;height:37.01px">
<div class="t" style="left:21.75px;top:18.5px;font-size:18.5px;letter-spacing:0.11px;color:#1b1b1b;">12602</div></div>
<div class="c" style="left:935.84px;top:884.26px;width:152.01px;height:37.01px">
<div class="t" style="left:50.21px;top:18.5px;font-size:18.5px;letter-spacing:0.72px;color:#1b1b1b;">12/30/2014</div></div>
<div class="c" style="left:1088.94px;top:884.26px;width:111.91px;height:37.01px">
<div class="t" style="left:99.55px;top:18.5px;font-size:18.5px;letter-spacing:0.11px;color:#1b1b1b;">1</div></div>
<div class="c" style="left:1201.94px;top:884.26px;width:132.51px;height:37.01px">
<div class="t" style="left:109.75px;top:18.5px;font-size:18.5px;letter-spacing:0.11px;color:#1b1b1b;">15</div></div>
<div style="left:809.3px;top:915.23px;width:27.4px;height:29.39px;background:#dfe3e8"></div>
<div style="left:836.7px;top:915.23px;width:502.3px;height:29.39px;background:#f2f1f3"></div>
<div style="left:835.99px;top:915.23px;width:1.42px;height:29.39px;background:#b5bac1"></div>
<div style="left:857.96px;top:915.23px;width:1.09px;height:29.39px;background:#d3d8e1"></div>
<div style="left:934.76px;top:915.23px;width:1.09px;height:29.39px;background:#d3d8e1"></div>
<div style="left:1087.86px;top:915.23px;width:1.09px;height:29.39px;background:#d3d8e1"></div>
<div style="left:1200.86px;top:915.23px;width:1.09px;height:29.39px;background:#d3d8e1"></div>
<div style="left:1334.46px;top:915.23px;width:1.09px;height:29.39px;background:#d3d8e1"></div>
<div style="left:809.3px;top:914.58px;width:27.4px;height:1.31px;background:#c2c7ce"></div>
<div style="left:837.35px;top:914.69px;width:501.65px;height:1.09px;background:#d3d8e1"></div>
<svg style="position:absolute;left:841.94px;top:923.83px" width="13.06" height="13.06" viewBox="0 0 12 12">
<rect x="0.55" y="0.55" width="10.9" height="10.9" fill="#fbfbfb" stroke="#8e8e8e" stroke-width="1.1"/><path d="M2.4,6 H9.6 M6,2.4 V9.6" stroke="#111" stroke-width="1.45"/></svg>
<div class="c" style="left:859.04px;top:913.65px;width:75.71px;height:37.01px">
<div class="t" style="left:21.75px;top:18.5px;font-size:18.5px;letter-spacing:0.11px;color:#1b1b1b;">12948</div></div>
<div class="c" style="left:935.84px;top:913.65px;width:152.01px;height:37.01px">
<div class="t" style="left:50.21px;top:18.5px;font-size:18.5px;letter-spacing:0.72px;color:#1b1b1b;">12/30/2014</div></div>
<div class="c" style="left:1088.94px;top:913.65px;width:111.91px;height:37.01px">
<div class="t" style="left:99.55px;top:18.5px;font-size:18.5px;letter-spacing:0.11px;color:#1b1b1b;">3</div></div>
<div class="c" style="left:1201.94px;top:913.65px;width:132.51px;height:37.01px">
<div class="t" style="left:109.75px;top:18.5px;font-size:18.5px;letter-spacing:0.11px;color:#1b1b1b;">16</div></div>
<div style="left:809.3px;top:944.62px;width:27.4px;height:29.39px;background:#dfe3e8"></div>
<div style="left:836.7px;top:944.62px;width:502.3px;height:29.39px;background:#ffffff"></div>
<div style="left:835.99px;top:944.62px;width:1.42px;height:29.39px;background:#b5bac1"></div>
<div style="left:857.96px;top:944.62px;width:1.09px;height:29.39px;background:#d3d8e1"></div>
<div style="left:934.76px;top:944.62px;width:1.09px;height:29.39px;background:#d3d8e1"></div>
<div style="left:1087.86px;top:944.62px;width:1.09px;height:29.39px;background:#d3d8e1"></div>
<div style="left:1200.86px;top:944.62px;width:1.09px;height:29.39px;background:#d3d8e1"></div>
<div style="left:1334.46px;top:944.62px;width:1.09px;height:29.39px;background:#d3d8e1"></div>
<div style="left:809.3px;top:943.97px;width:27.4px;height:1.31px;background:#c2c7ce"></div>
<div style="left:837.35px;top:944.08px;width:501.65px;height:1.09px;background:#d3d8e1"></div>
<div style="left:809.3px;top:973.36px;width:27.4px;height:1.31px;background:#c2c7ce"></div>
<div style="left:837.35px;top:973.47px;width:501.65px;height:1.09px;background:#d3d8e1"></div>
<svg style="position:absolute;left:815.92px;top:952.24px" width="14.15" height="14.15" viewBox="-6.5 -6.5 13 13">
<g stroke="#60636a" stroke-width="1.2"><line x1="-6.2" y1="0" x2="6.2" y2="0"/><line x1="0" y1="-6.2" x2="0" y2="6.2"/></g><g stroke="#7d8087" stroke-width="0.9"><line x1="-4.6" y1="-4.6" x2="4.6" y2="4.6"/><line x1="-4.6" y1="4.6" x2="4.6" y2="-4.6"/></g><circle r="1.8" fill="#60636a"/></svg>
<div class="c" style="left:859.04px;top:943.04px;width:75.71px;height:37.01px">
<div class="t" style="left:63.35px;top:18.5px;font-size:18.5px;letter-spacing:0.11px;color:#1b1b1b;">0</div></div>
<div class="c" style="left:1088.94px;top:943.04px;width:111.91px;height:37.01px">
<div class="t" style="left:99.55px;top:18.5px;font-size:18.5px;letter-spacing:0.11px;color:#1b1b1b;">0</div></div>
<div class="c" style="left:1201.94px;top:943.04px;width:132.51px;height:37.01px">
<div class="t" style="left:120.15px;top:18.5px;font-size:18.5px;letter-spacing:0.11px;color:#1b1b1b;">0</div></div>
<div style="left:1339px;top:337px;width:395px;height:863px;background:#fff"></div>
<div style="left:1339px;top:337px;width:395px;height:1.5px;background:#5a5a5a"></div>
<svg style="position:absolute;left:1361.69px;top:347.51px" width="25.69" height="22.23" viewBox="0 0 26 21.5" preserveAspectRatio="none">
<rect x="0" y="0" width="26" height="21.5" fill="#6f83a8"/><rect x="0" y="0" width="26" height="4.6" fill="#5c76a3"/><rect x="0.9" y="1.6" width="7" height="1.5" fill="#a9bbe2"/><rect x="9.6" y="1.6" width="6.6" height="1.5" fill="#a9bbe2"/><rect x="18" y="1.6" width="6.6" height="1.5" fill="#a9bbe2"/><rect x="0.9" y="4.8" width="24" height="14" fill="#9aa5bf"/>
<rect x="0.9" y="4.9" width="7.1" height="3.6" fill="#f4f7fd"/>
<rect x="9.5" y="4.9" width="7.0" height="3.6" fill="#f4f7fd"/>
<rect x="17.8" y="4.9" width="7.0" height="3.6" fill="#f4f7fd"/>
<rect x="0.9" y="9.9" width="7.1" height="3.6" fill="#f4f7fd"/>
<rect x="9.5" y="9.9" width="7.0" height="3.6" fill="#f4f7fd"/>
<rect x="17.8" y="9.9" width="7.0" height="3.6" fill="#f4f7fd"/>
<rect x="0.9" y="14.9" width="7.1" height="3.6" fill="#f4f7fd"/>
<rect x="9.5" y="14.9" width="7.0" height="3.6" fill="#f4f7fd"/>
<rect x="17.8" y="14.9" width="7.0" height="3.6" fill="#f4f7fd"/>
<rect x="24.8" y="4.8" width="1.2" height="16.7" fill="#34405f"/><rect x="0" y="18.6" width="26" height="1.5" fill="#a6b2c9"/><rect x="0.9" y="20" width="25.1" height="1.5" fill="#34405f"/>
</svg>
<div class="t" style="left:1404.92px;top:360.43px;font-size:19.76px;letter-spacing:-0.18px;color:#2a2a2a;">OrderItem</div>
<div style="left:1344.4px;top:385.8px;width:389.6px;height:2.1px;background:#a8464b"></div>
<div style="left:1344.4px;top:388.27px;width:389.6px;height:30.93px;background:linear-gradient(#e3e6ea,#dadee4)"></div>
<svg style="position:absolute;left:1351.81px;top:395.68px" width="17.29" height="18.03" viewBox="0 0 14 14.6">
<defs><linearGradient id="tg" x1="0" y1="0" x2="0" y2="1"><stop offset="0" stop-color="#f8f9fb"/><stop offset="1" stop-color="#d6dae0"/></linearGradient></defs><path d="M0,14.6 L14,0 L14,14.6 Z" fill="url(#tg)"/><path d="M0,14.6 L14,0" stroke="#b9bec6" stroke-width="0.8"/></svg>
<div style="left:1374.32px;top:388.27px;width:1.36px;height:30.93px;background:#aeb3ba"></div>
<div style="left:1461.22px;top:388.27px;width:1.36px;height:30.93px;background:#aeb3ba"></div>
<div style="left:1535.62px;top:388.27px;width:1.36px;height:30.93px;background:#aeb3ba"></div>
<div style="left:1627.52px;top:388.27px;width:1.36px;height:30.93px;background:#aeb3ba"></div>
<div style="left:1728.82px;top:388.27px;width:1.36px;height:30.93px;background:#aeb3ba"></div>
<div style="left:1344.4px;top:417.96px;width:389.6px;height:1.24px;background:#cfd4da"></div>
<div style="left:1374.26px;top:388.27px;width:86.9px;height:30.93px;background:linear-gradient(#fad35f,#fee97c)"></div>
<div class="c" style="left:1376px;top:382.88px;width:53.79px;height:41.99px">
<div class="t" style="left:5.42px;top:21px;font-size:21px;letter-spacing:0.29px;color:#3b3b3b;">OrderID</div></div>
<svg style="position:absolute;left:1442.76px;top:402.5px;overflow:visible" width="8.65" height="4.94" viewBox="0 0 7 4">
<path d="M-0.6,-0.5 L7.6,-0.5 L3.5,4.6 Z" fill="#fbfcfd" opacity="0.9"/><path d="M0,0 L7,0 L3.5,4 Z" fill="#232323"/></svg>
<div class="c" style="left:1462.9px;top:382.88px;width:41.29px;height:41.99px">
<div class="t" style="left:5.42px;top:21px;font-size:21px;letter-spacing:0.51px;color:#3b3b3b;">ItemID</div></div>
<svg style="position:absolute;left:1517.16px;top:402.5px;overflow:visible" width="8.65" height="4.94" viewBox="0 0 7 4">
<path d="M-0.6,-0.5 L7.6,-0.5 L3.5,4.6 Z" fill="#fbfcfd" opacity="0.9"/><path d="M0,0 L7,0 L3.5,4 Z" fill="#232323"/></svg>
<div class="c" style="left:1537.3px;top:382.88px;width:58.79px;height:41.99px">
<div class="t" style="left:5.42px;top:21px;font-size:21px;letter-spacing:0.99px;color:#3b3b3b;">Quantity</div></div>
<svg style="position:absolute;left:1609.06px;top:402.5px;overflow:visible" width="8.65" height="4.94" viewBox="0 0 7 4">
<path d="M-0.6,-0.5 L7.6,-0.5 L3.5,4.6 Z" fill="#fbfcfd" opacity="0.9"/><path d="M0,0 L7,0 L3.5,4 Z" fill="#232323"/></svg>
<div class="c" style="left:1629.2px;top:382.88px;width:68.19px;height:41.99px">
<div class="t" style="left:5.42px;top:21px;font-size:21px;letter-spacing:-0.28px;color:#3b3b3b;">SalePrice</div></div>
<svg style="position:absolute;left:1710.36px;top:402.5px;overflow:visible" width="8.65" height="4.94" viewBox="0 0 7 4">
<path d="M-0.6,-0.5 L7.6,-0.5 L3.5,4.6 Z" fill="#fbfcfd" opacity="0.9"/><path d="M0,0 L7,0 L3.5,4 Z" fill="#232323"/></svg>
<div style="left:1344.4px;top:419.2px;width:30.6px;height:33.34px;background:#fcd75e"></div>
<div style="left:1375px;top:419.2px;width:359px;height:33.34px;background:#ffffff"></div>
<div style="left:1461.9px;top:419.2px;width:272.1px;height:33.34px;background:#a8cdf0"></div>
<div style="left:1374.2px;top:419.2px;width:1.61px;height:33.34px;background:#b5bac1"></div>
<div style="left:1461.28px;top:419.2px;width:1.24px;height:33.34px;background:#d3d8e1"></div>
<div style="left:1535.68px;top:419.2px;width:1.24px;height:33.34px;background:#d3d8e1"></div>
<div style="left:1627.58px;top:419.2px;width:1.24px;height:33.34px;background:#d3d8e1"></div>
<div style="left:1728.88px;top:419.2px;width:1.24px;height:33.34px;background:#d3d8e1"></div>
<div style="left:1374.75px;top:418.58px;width:88.01px;height:34.82px;border:2.47px solid #f3a5ac;background:#fff;box-sizing:border-box"></div>
<div style="left:1401.67px;top:422.9px;width:59.62px;height:28.4px;background:#000"></div>
<div class="c" style="left:1375.62px;top:416.49px;width:85.66px;height:41.99px">
<div class="t" style="left:26.05px;top:21px;font-size:21px;letter-spacing:0.12px;color:#ffffff;">12200</div></div>
<div class="c" style="left:1462.52px;top:416.49px;width:73.16px;height:41.99px">
<div class="t" style="left:5.8px;top:21px;font-size:21px;letter-spacing:0.12px;color:#1b1b1b;">1223</div></div>
<div class="c" style="left:1536.92px;top:416.49px;width:90.66px;height:41.99px">
<div class="t" style="left:66.45px;top:21px;font-size:21px;letter-spacing:0.12px;color:#1b1b1b;">11</div></div>
<div class="c" style="left:1628.82px;top:416.49px;width:100.06px;height:41.99px">
<div class="t" style="left:34.55px;top:21px;font-size:21px;letter-spacing:0.1px;color:#1b1b1b;">$1.75  </div></div>
<div style="left:1344.4px;top:452.54px;width:30.6px;height:33.34px;background:#dfe3e8"></div>
<div style="left:1375px;top:452.54px;width:359px;height:33.34px;background:#f2f1f3"></div>
<div style="left:1374.2px;top:452.54px;width:1.61px;height:33.34px;background:#b5bac1"></div>
<div style="left:1461.28px;top:452.54px;width:1.24px;height:33.34px;background:#d3d8e1"></div>
<div style="left:1535.68px;top:452.54px;width:1.24px;height:33.34px;background:#d3d8e1"></div>
<div style="left:1627.58px;top:452.54px;width:1.24px;height:33.34px;background:#d3d8e1"></div>
<div style="left:1728.88px;top:452.54px;width:1.24px;height:33.34px;background:#d3d8e1"></div>
<div style="left:1344.4px;top:451.8px;width:30.6px;height:1.48px;background:#c2c7ce"></div>
<div style="left:1375.74px;top:451.92px;width:358.26px;height:1.24px;background:#d3d8e1"></div>
<div class="c" style="left:1375.62px;top:449.83px;width:85.66px;height:41.99px">
<div class="t" style="left:26.05px;top:21px;font-size:21px;letter-spacing:0.12px;color:#1b1b1b;">12305</div></div>
<div class="c" style="left:1462.52px;top:449.83px;width:73.16px;height:41.99px">
<div class="t" style="left:5.8px;top:21px;font-size:21px;letter-spacing:0.12px;color:#1b1b1b;">1224</div></div>
<div class="c" style="left:1536.92px;top:449.83px;width:90.66px;height:41.99px">
<div class="t" style="left:78.25px;top:21px;font-size:21px;letter-spacing:0.12px;color:#1b1b1b;">1</div></div>
<div class="c" style="left:1628.82px;top:449.83px;width:100.06px;height:41.99px">
<div class="t" style="left:34.55px;top:21px;font-size:21px;letter-spacing:0.1px;color:#1b1b1b;">$3.75  </div></div>
<div style="left:1344.4px;top:485.88px;width:30.6px;height:33.34px;background:#dfe3e8"></div>
<div style="left:1375px;top:485.88px;width:359px;height:33.34px;background:#ffffff"></div>
<div style="left:1374.2px;top:485.88px;width:1.61px;height:33.34px;background:#b5bac1"></div>
<div style="left:1461.28px;top:485.88px;width:1.24px;height:33.34px;background:#d3d8e1"></div>
<div style="left:1535.68px;top:485.88px;width:1.24px;height:33.34px;background:#d3d8e1"></div>
<div style="left:1627.58px;top:485.88px;width:1.24px;height:33.34px;background:#d3d8e1"></div>
<div style="left:1728.88px;top:485.88px;width:1.24px;height:33.34px;background:#d3d8e1"></div>
<div style="left:1344.4px;top:485.14px;width:30.6px;height:1.48px;background:#c2c7ce"></div>
<div style="left:1375.74px;top:485.26px;width:358.26px;height:1.24px;background:#d3d8e1"></div>
<div class="c" style="left:1375.62px;top:483.17px;width:85.66px;height:41.99px">
<div class="t" style="left:26.05px;top:21px;font-size:21px;letter-spacing:0.12px;color:#1b1b1b;">12306</div></div>
<div class="c" style="left:1462.52px;top:483.17px;width:73.16px;height:41.99px">
<div class="t" style="left:5.8px;top:21px;font-size:21px;letter-spacing:0.12px;color:#1b1b1b;">1504</div></div>
<div class="c" style="left:1536.92px;top:483.17px;width:90.66px;height:41.99px">
<div class="t" style="left:78.25px;top:21px;font-size:21px;letter-spacing:0.12px;color:#1b1b1b;">2</div></div>
<div class="c" style="left:1628.82px;top:483.17px;width:100.06px;height:41.99px">
<div class="t" style="left:34.55px;top:21px;font-size:21px;letter-spacing:0.1px;color:#1b1b1b;">$6.00  </div></div>
<div style="left:1344.4px;top:519.22px;width:30.6px;height:33.34px;background:#dfe3e8"></div>
<div style="left:1375px;top:519.22px;width:359px;height:33.34px;background:#f2f1f3"></div>
<div style="left:1374.2px;top:519.22px;width:1.61px;height:33.34px;background:#b5bac1"></div>
<div style="left:1461.28px;top:519.22px;width:1.24px;height:33.34px;background:#d3d8e1"></div>
<div style="left:1535.68px;top:519.22px;width:1.24px;height:33.34px;background:#d3d8e1"></div>
<div style="left:1627.58px;top:519.22px;width:1.24px;height:33.34px;background:#d3d8e1"></div>
<div style="left:1728.88px;top:519.22px;width:1.24px;height:33.34px;background:#d3d8e1"></div>
<div style="left:1344.4px;top:518.48px;width:30.6px;height:1.48px;background:#c2c7ce"></div>
<div style="left:1375.74px;top:518.6px;width:358.26px;height:1.23px;background:#d3d8e1"></div>
<div class="c" style="left:1375.62px;top:516.51px;width:85.66px;height:41.99px">
<div class="t" style="left:26.05px;top:21px;font-size:21px;letter-spacing:0.12px;color:#1b1b1b;">12456</div></div>
<div class="c" style="left:1462.52px;top:516.51px;width:73.16px;height:41.99px">
<div class="t" style="left:5.8px;top:21px;font-size:21px;letter-spacing:0.12px;color:#1b1b1b;">1300</div></div>
<div class="c" style="left:1536.92px;top:516.51px;width:90.66px;height:41.99px">
<div class="t" style="left:78.25px;top:21px;font-size:21px;letter-spacing:0.12px;color:#1b1b1b;">1</div></div>
<div class="c" style="left:1628.82px;top:516.51px;width:100.06px;height:41.99px">
<div class="t" style="left:34.55px;top:21px;font-size:21px;letter-spacing:0.1px;color:#1b1b1b;">$1.00  </div></div>
<div style="left:1344.4px;top:552.56px;width:30.6px;height:33.34px;background:#dfe3e8"></div>
<div style="left:1375px;top:552.56px;width:359px;height:33.34px;background:#ffffff"></div>
<div style="left:1374.2px;top:552.56px;width:1.61px;height:33.34px;background:#b5bac1"></div>
<div style="left:1461.28px;top:552.56px;width:1.24px;height:33.34px;background:#d3d8e1"></div>
<div style="left:1535.68px;top:552.56px;width:1.24px;height:33.34px;background:#d3d8e1"></div>
<div style="left:1627.58px;top:552.56px;width:1.24px;height:33.34px;background:#d3d8e1"></div>
<div style="left:1728.88px;top:552.56px;width:1.24px;height:33.34px;background:#d3d8e1"></div>
<div style="left:1344.4px;top:551.82px;width:30.6px;height:1.48px;background:#c2c7ce"></div>
<div style="left:1375.74px;top:551.94px;width:358.26px;height:1.23px;background:#d3d8e1"></div>
<div class="c" style="left:1375.62px;top:549.85px;width:85.66px;height:41.99px">
<div class="t" style="left:26.05px;top:21px;font-size:21px;letter-spacing:0.12px;color:#1b1b1b;">12457</div></div>
<div class="c" style="left:1462.52px;top:549.85px;width:73.16px;height:41.99px">
<div class="t" style="left:5.8px;top:21px;font-size:21px;letter-spacing:0.12px;color:#1b1b1b;">8776</div></div>
<div class="c" style="left:1536.92px;top:549.85px;width:90.66px;height:41.99px">
<div class="t" style="left:78.25px;top:21px;font-size:21px;letter-spacing:0.12px;color:#1b1b1b;">1</div></div>
<div class="c" style="left:1628.82px;top:549.85px;width:100.06px;height:41.99px">
<div class="t" style="left:34.55px;top:21px;font-size:21px;letter-spacing:0.1px;color:#1b1b1b;">$5.00  </div></div>
<div style="left:1344.4px;top:585.9px;width:30.6px;height:33.34px;background:#dfe3e8"></div>
<div style="left:1375px;top:585.9px;width:359px;height:33.34px;background:#f2f1f3"></div>
<div style="left:1374.2px;top:585.9px;width:1.61px;height:33.34px;background:#b5bac1"></div>
<div style="left:1461.28px;top:585.9px;width:1.24px;height:33.34px;background:#d3d8e1"></div>
<div style="left:1535.68px;top:585.9px;width:1.24px;height:33.34px;background:#d3d8e1"></div>
<div style="left:1627.58px;top:585.9px;width:1.24px;height:33.34px;background:#d3d8e1"></div>
<div style="left:1728.88px;top:585.9px;width:1.24px;height:33.34px;background:#d3d8e1"></div>
<div style="left:1344.4px;top:585.16px;width:30.6px;height:1.48px;background:#c2c7ce"></div>
<div style="left:1375.74px;top:585.28px;width:358.26px;height:1.23px;background:#d3d8e1"></div>
<div class="c" style="left:1375.62px;top:583.19px;width:85.66px;height:41.99px">
<div class="t" style="left:26.05px;top:21px;font-size:21px;letter-spacing:0.12px;color:#1b1b1b;">12458</div></div>
<div class="c" style="left:1462.52px;top:583.19px;width:73.16px;height:41.99px">
<div class="t" style="left:5.8px;top:21px;font-size:21px;letter-spacing:0.12px;color:#1b1b1b;">1223</div></div>
<div class="c" style="left:1536.92px;top:583.19px;width:90.66px;height:41.99px">
<div class="t" style="left:78.25px;top:21px;font-size:21px;letter-spacing:0.12px;color:#1b1b1b;">2</div></div>
<div class="c" style="left:1628.82px;top:583.19px;width:100.06px;height:41.99px">
<div class="t" style="left:34.55px;top:21px;font-size:21px;letter-spacing:0.1px;color:#1b1b1b;">$2.00  </div></div>
<div style="left:1344.4px;top:619.24px;width:30.6px;height:33.34px;background:#dfe3e8"></div>
<div style="left:1375px;top:619.24px;width:359px;height:33.34px;background:#ffffff"></div>
<div style="left:1374.2px;top:619.24px;width:1.61px;height:33.34px;background:#b5bac1"></div>
<div style="left:1461.28px;top:619.24px;width:1.24px;height:33.34px;background:#d3d8e1"></div>
<div style="left:1535.68px;top:619.24px;width:1.24px;height:33.34px;background:#d3d8e1"></div>
<div style="left:1627.58px;top:619.24px;width:1.24px;height:33.34px;background:#d3d8e1"></div>
<div style="left:1728.88px;top:619.24px;width:1.24px;height:33.34px;background:#d3d8e1"></div>
<div style="left:1344.4px;top:618.5px;width:30.6px;height:1.48px;background:#c2c7ce"></div>
<div style="left:1375.74px;top:618.62px;width:358.26px;height:1.23px;background:#d3d8e1"></div>
<div class="c" style="left:1375.62px;top:616.53px;width:85.66px;height:41.99px">
<div class="t" style="left:26.05px;top:21px;font-size:21px;letter-spacing:0.12px;color:#1b1b1b;">12459</div></div>
<div class="c" style="left:1462.52px;top:616.53px;width:73.16px;height:41.99px">
<div class="t" style="left:5.8px;top:21px;font-size:21px;letter-spacing:0.12px;color:#1b1b1b;">1300</div></div>
<div class="c" style="left:1536.92px;top:616.53px;width:90.66px;height:41.99px">
<div class="t" style="left:78.25px;top:21px;font-size:21px;letter-spacing:0.12px;color:#1b1b1b;">2</div></div>
<div class="c" style="left:1628.82px;top:616.53px;width:100.06px;height:41.99px">
<div class="t" style="left:34.55px;top:21px;font-size:21px;letter-spacing:0.1px;color:#1b1b1b;">$1.00  </div></div>
<div style="left:1344.4px;top:652.58px;width:30.6px;height:33.34px;background:#dfe3e8"></div>
<div style="left:1375px;top:652.58px;width:359px;height:33.34px;background:#f2f1f3"></div>
<div style="left:1374.2px;top:652.58px;width:1.61px;height:33.34px;background:#b5bac1"></div>
<div style="left:1461.28px;top:652.58px;width:1.24px;height:33.34px;background:#d3d8e1"></div>
<div style="left:1535.68px;top:652.58px;width:1.24px;height:33.34px;background:#d3d8e1"></div>
<div style="left:1627.58px;top:652.58px;width:1.24px;height:33.34px;background:#d3d8e1"></div>
<div style="left:1728.88px;top:652.58px;width:1.24px;height:33.34px;background:#d3d8e1"></div>
<div style="left:1344.4px;top:651.84px;width:30.6px;height:1.48px;background:#c2c7ce"></div>
<div style="left:1375.74px;top:651.96px;width:358.26px;height:1.23px;background:#d3d8e1"></div>
<div class="c" style="left:1375.62px;top:649.87px;width:85.66px;height:41.99px">
<div class="t" style="left:26.05px;top:21px;font-size:21px;letter-spacing:0.12px;color:#1b1b1b;">12470</div></div>
<div class="c" style="left:1462.52px;top:649.87px;width:73.16px;height:41.99px">
<div class="t" style="left:5.8px;top:21px;font-size:21px;letter-spacing:0.12px;color:#1b1b1b;">1224</div></div>
<div class="c" style="left:1536.92px;top:649.87px;width:90.66px;height:41.99px">
<div class="t" style="left:78.25px;top:21px;font-size:21px;letter-spacing:0.12px;color:#1b1b1b;">2</div></div>
<div class="c" style="left:1628.82px;top:649.87px;width:100.06px;height:41.99px">
<div class="t" style="left:34.55px;top:21px;font-size:21px;letter-spacing:0.1px;color:#1b1b1b;">$3.75  </div></div>
<div style="left:1344.4px;top:685.92px;width:30.6px;height:33.34px;background:#dfe3e8"></div>
<div style="left:1375px;top:685.92px;width:359px;height:33.34px;background:#ffffff"></div>
<div style="left:1374.2px;top:685.92px;width:1.61px;height:33.34px;background:#b5bac1"></div>
<div style="left:1461.28px;top:685.92px;width:1.24px;height:33.34px;background:#d3d8e1"></div>
<div style="left:1535.68px;top:685.92px;width:1.24px;height:33.34px;background:#d3d8e1"></div>
<div style="left:1627.58px;top:685.92px;width:1.24px;height:33.34px;background:#d3d8e1"></div>
<div style="left:1728.88px;top:685.92px;width:1.24px;height:33.34px;background:#d3d8e1"></div>
<div style="left:1344.4px;top:685.18px;width:30.6px;height:1.48px;background:#c2c7ce"></div>
<div style="left:1375.74px;top:685.3px;width:358.26px;height:1.23px;background:#d3d8e1"></div>
<div class="c" style="left:1375.62px;top:683.21px;width:85.66px;height:41.99px">
<div class="t" style="left:26.05px;top:21px;font-size:21px;letter-spacing:0.12px;color:#1b1b1b;">12470</div></div>
<div class="c" style="left:1462.52px;top:683.21px;width:73.16px;height:41.99px">
<div class="t" style="left:5.8px;top:21px;font-size:21px;letter-spacing:0.12px;color:#1b1b1b;">1225</div></div>
<div class="c" style="left:1536.92px;top:683.21px;width:90.66px;height:41.99px">
<div class="t" style="left:78.25px;top:21px;font-size:21px;letter-spacing:0.12px;color:#1b1b1b;">1</div></div>
<div class="c" style="left:1628.82px;top:683.21px;width:100.06px;height:41.99px">
<div class="t" style="left:34.55px;top:21px;font-size:21px;letter-spacing:0.1px;color:#1b1b1b;">$4.10  </div></div>
<div style="left:1344.4px;top:719.26px;width:30.6px;height:33.34px;background:#dfe3e8"></div>
<div style="left:1375px;top:719.26px;width:359px;height:33.34px;background:#f2f1f3"></div>
<div style="left:1374.2px;top:719.26px;width:1.61px;height:33.34px;background:#b5bac1"></div>
<div style="left:1461.28px;top:719.26px;width:1.24px;height:33.34px;background:#d3d8e1"></div>
<div style="left:1535.68px;top:719.26px;width:1.24px;height:33.34px;background:#d3d8e1"></div>
<div style="left:1627.58px;top:719.26px;width:1.24px;height:33.34px;background:#d3d8e1"></div>
<div style="left:1728.88px;top:719.26px;width:1.24px;height:33.34px;background:#d3d8e1"></div>
<div style="left:1344.4px;top:718.52px;width:30.6px;height:1.48px;background:#c2c7ce"></div>
<div style="left:1375.74px;top:718.64px;width:358.26px;height:1.23px;background:#d3d8e1"></div>
<div class="c" style="left:1375.62px;top:716.55px;width:85.66px;height:41.99px">
<div class="t" style="left:26.05px;top:21px;font-size:21px;letter-spacing:0.12px;color:#1b1b1b;">12471</div></div>
<div class="c" style="left:1462.52px;top:716.55px;width:73.16px;height:41.99px">
<div class="t" style="left:5.8px;top:21px;font-size:21px;letter-spacing:0.12px;color:#1b1b1b;">1224</div></div>
<div class="c" style="left:1536.92px;top:716.55px;width:90.66px;height:41.99px">
<div class="t" style="left:78.25px;top:21px;font-size:21px;letter-spacing:0.12px;color:#1b1b1b;">1</div></div>
<div class="c" style="left:1628.82px;top:716.55px;width:100.06px;height:41.99px">
<div class="t" style="left:34.55px;top:21px;font-size:21px;letter-spacing:0.1px;color:#1b1b1b;">$3.50  </div></div>
<div style="left:1344.4px;top:752.6px;width:30.6px;height:33.34px;background:#dfe3e8"></div>
<div style="left:1375px;top:752.6px;width:359px;height:33.34px;background:#ffffff"></div>
<div style="left:1374.2px;top:752.6px;width:1.61px;height:33.34px;background:#b5bac1"></div>
<div style="left:1461.28px;top:752.6px;width:1.24px;height:33.34px;background:#d3d8e1"></div>
<div style="left:1535.68px;top:752.6px;width:1.24px;height:33.34px;background:#d3d8e1"></div>
<div style="left:1627.58px;top:752.6px;width:1.24px;height:33.34px;background:#d3d8e1"></div>
<div style="left:1728.88px;top:752.6px;width:1.24px;height:33.34px;background:#d3d8e1"></div>
<div style="left:1344.4px;top:751.86px;width:30.6px;height:1.48px;background:#c2c7ce"></div>
<div style="left:1375.74px;top:751.98px;width:358.26px;height:1.23px;background:#d3d8e1"></div>
<div class="c" style="left:1375.62px;top:749.89px;width:85.66px;height:41.99px">
<div class="t" style="left:26.05px;top:21px;font-size:21px;letter-spacing:0.12px;color:#1b1b1b;">12500</div></div>
<div class="c" style="left:1462.52px;top:749.89px;width:73.16px;height:41.99px">
<div class="t" style="left:5.8px;top:21px;font-size:21px;letter-spacing:0.12px;color:#1b1b1b;">1224</div></div>
<div class="c" style="left:1536.92px;top:749.89px;width:90.66px;height:41.99px">
<div class="t" style="left:78.25px;top:21px;font-size:21px;letter-spacing:0.12px;color:#1b1b1b;">2</div></div>
<div class="c" style="left:1628.82px;top:749.89px;width:100.06px;height:41.99px">
<div class="t" style="left:34.55px;top:21px;font-size:21px;letter-spacing:0.1px;color:#1b1b1b;">$4.00  </div></div>
<div style="left:1344.4px;top:785.94px;width:30.6px;height:33.34px;background:#dfe3e8"></div>
<div style="left:1375px;top:785.94px;width:359px;height:33.34px;background:#f2f1f3"></div>
<div style="left:1374.2px;top:785.94px;width:1.61px;height:33.34px;background:#b5bac1"></div>
<div style="left:1461.28px;top:785.94px;width:1.24px;height:33.34px;background:#d3d8e1"></div>
<div style="left:1535.68px;top:785.94px;width:1.24px;height:33.34px;background:#d3d8e1"></div>
<div style="left:1627.58px;top:785.94px;width:1.24px;height:33.34px;background:#d3d8e1"></div>
<div style="left:1728.88px;top:785.94px;width:1.24px;height:33.34px;background:#d3d8e1"></div>
<div style="left:1344.4px;top:785.2px;width:30.6px;height:1.48px;background:#c2c7ce"></div>
<div style="left:1375.74px;top:785.32px;width:358.26px;height:1.23px;background:#d3d8e1"></div>
<div class="c" style="left:1375.62px;top:783.23px;width:85.66px;height:41.99px">
<div class="t" style="left:26.05px;top:21px;font-size:21px;letter-spacing:0.12px;color:#1b1b1b;">12500</div></div>
<div class="c" style="left:1462.52px;top:783.23px;width:73.16px;height:41.99px">
<div class="t" style="left:5.8px;top:21px;font-size:21px;letter-spacing:0.12px;color:#1b1b1b;">8776</div></div>
<div class="c" style="left:1536.92px;top:783.23px;width:90.66px;height:41.99px">
<div class="t" style="left:78.25px;top:21px;font-size:21px;letter-spacing:0.12px;color:#1b1b1b;">3</div></div>
<div class="c" style="left:1628.82px;top:783.23px;width:100.06px;height:41.99px">
<div class="t" style="left:34.55px;top:21px;font-size:21px;letter-spacing:0.1px;color:#1b1b1b;">$5.00  </div></div>
<div style="left:1344.4px;top:819.28px;width:30.6px;height:33.34px;background:#dfe3e8"></div>
<div style="left:1375px;top:819.28px;width:359px;height:33.34px;background:#ffffff"></div>
<div style="left:1374.2px;top:819.28px;width:1.61px;height:33.34px;background:#b5bac1"></div>
<div style="left:1461.28px;top:819.28px;width:1.24px;height:33.34px;background:#d3d8e1"></div>
<div style="left:1535.68px;top:819.28px;width:1.24px;height:33.34px;background:#d3d8e1"></div>
<div style="left:1627.58px;top:819.28px;width:1.24px;height:33.34px;background:#d3d8e1"></div>
<div style="left:1728.88px;top:819.28px;width:1.24px;height:33.34px;background:#d3d8e1"></div>
<div style="left:1344.4px;top:818.54px;width:30.6px;height:1.48px;background:#c2c7ce"></div>
<div style="left:1375.74px;top:818.66px;width:358.26px;height:1.23px;background:#d3d8e1"></div>
<div class="c" style="left:1375.62px;top:816.57px;width:85.66px;height:41.99px">
<div class="t" style="left:26.05px;top:21px;font-size:21px;letter-spacing:0.12px;color:#1b1b1b;">12501</div></div>
<div class="c" style="left:1462.52px;top:816.57px;width:73.16px;height:41.99px">
<div class="t" style="left:5.8px;top:21px;font-size:21px;letter-spacing:0.12px;color:#1b1b1b;">1223</div></div>
<div class="c" style="left:1536.92px;top:816.57px;width:90.66px;height:41.99px">
<div class="t" style="left:78.25px;top:21px;font-size:21px;letter-spacing:0.12px;color:#1b1b1b;">3</div></div>
<div class="c" style="left:1628.82px;top:816.57px;width:100.06px;height:41.99px">
<div class="t" style="left:34.55px;top:21px;font-size:21px;letter-spacing:0.1px;color:#1b1b1b;">$2.00  </div></div>
<div style="left:1344.4px;top:852.62px;width:30.6px;height:33.34px;background:#dfe3e8"></div>
<div style="left:1375px;top:852.62px;width:359px;height:33.34px;background:#f2f1f3"></div>
<div style="left:1374.2px;top:852.62px;width:1.61px;height:33.34px;background:#b5bac1"></div>
<div style="left:1461.28px;top:852.62px;width:1.24px;height:33.34px;background:#d3d8e1"></div>
<div style="left:1535.68px;top:852.62px;width:1.24px;height:33.34px;background:#d3d8e1"></div>
<div style="left:1627.58px;top:852.62px;width:1.24px;height:33.34px;background:#d3d8e1"></div>
<div style="left:1728.88px;top:852.62px;width:1.24px;height:33.34px;background:#d3d8e1"></div>
<div style="left:1344.4px;top:851.88px;width:30.6px;height:1.48px;background:#c2c7ce"></div>
<div style="left:1375.74px;top:852px;width:358.26px;height:1.23px;background:#d3d8e1"></div>
<div class="c" style="left:1375.62px;top:849.91px;width:85.66px;height:41.99px">
<div class="t" style="left:26.05px;top:21px;font-size:21px;letter-spacing:0.12px;color:#1b1b1b;">12502</div></div>
<div class="c" style="left:1462.52px;top:849.91px;width:73.16px;height:41.99px">
<div class="t" style="left:5.8px;top:21px;font-size:21px;letter-spacing:0.12px;color:#1b1b1b;">1224</div></div>
<div class="c" style="left:1536.92px;top:849.91px;width:90.66px;height:41.99px">
<div class="t" style="left:78.25px;top:21px;font-size:21px;letter-spacing:0.12px;color:#1b1b1b;">2</div></div>
<div class="c" style="left:1628.82px;top:849.91px;width:100.06px;height:41.99px">
<div class="t" style="left:34.55px;top:21px;font-size:21px;letter-spacing:0.1px;color:#1b1b1b;">$2.00  </div></div>
<div style="left:1344.4px;top:885.96px;width:30.6px;height:33.34px;background:#dfe3e8"></div>
<div style="left:1375px;top:885.96px;width:359px;height:33.34px;background:#ffffff"></div>
<div style="left:1374.2px;top:885.96px;width:1.61px;height:33.34px;background:#b5bac1"></div>
<div style="left:1461.28px;top:885.96px;width:1.24px;height:33.34px;background:#d3d8e1"></div>
<div style="left:1535.68px;top:885.96px;width:1.24px;height:33.34px;background:#d3d8e1"></div>
<div style="left:1627.58px;top:885.96px;width:1.24px;height:33.34px;background:#d3d8e1"></div>
<div style="left:1728.88px;top:885.96px;width:1.24px;height:33.34px;background:#d3d8e1"></div>
<div style="left:1344.4px;top:885.22px;width:30.6px;height:1.48px;background:#c2c7ce"></div>
<div style="left:1375.74px;top:885.34px;width:358.26px;height:1.23px;background:#d3d8e1"></div>
<div class="c" style="left:1375.62px;top:883.25px;width:85.66px;height:41.99px">
<div class="t" style="left:26.05px;top:21px;font-size:21px;letter-spacing:0.12px;color:#1b1b1b;">12502</div></div>
<div class="c" style="left:1462.52px;top:883.25px;width:73.16px;height:41.99px">
<div class="t" style="left:5.8px;top:21px;font-size:21px;letter-spacing:0.12px;color:#1b1b1b;">3445</div></div>
<div class="c" style="left:1536.92px;top:883.25px;width:90.66px;height:41.99px">
<div class="t" style="left:78.25px;top:21px;font-size:21px;letter-spacing:0.12px;color:#1b1b1b;">1</div></div>
<div class="c" style="left:1628.82px;top:883.25px;width:100.06px;height:41.99px">
<div class="t" style="left:34.55px;top:21px;font-size:21px;letter-spacing:0.1px;color:#1b1b1b;">$2.80  </div></div>
<div style="left:1344.4px;top:919.3px;width:30.6px;height:33.34px;background:#dfe3e8"></div>
<div style="left:1375px;top:919.3px;width:359px;height:33.34px;background:#f2f1f3"></div>
<div style="left:1374.2px;top:919.3px;width:1.61px;height:33.34px;background:#b5bac1"></div>
<div style="left:1461.28px;top:919.3px;width:1.24px;height:33.34px;background:#d3d8e1"></div>
<div style="left:1535.68px;top:919.3px;width:1.24px;height:33.34px;background:#d3d8e1"></div>
<div style="left:1627.58px;top:919.3px;width:1.24px;height:33.34px;background:#d3d8e1"></div>
<div style="left:1728.88px;top:919.3px;width:1.24px;height:33.34px;background:#d3d8e1"></div>
<div style="left:1344.4px;top:918.56px;width:30.6px;height:1.48px;background:#c2c7ce"></div>
<div style="left:1375.74px;top:918.68px;width:358.26px;height:1.23px;background:#d3d8e1"></div>
<div class="c" style="left:1375.62px;top:916.59px;width:85.66px;height:41.99px">
<div class="t" style="left:26.05px;top:21px;font-size:21px;letter-spacing:0.12px;color:#1b1b1b;">12503</div></div>
<div class="c" style="left:1462.52px;top:916.59px;width:73.16px;height:41.99px">
<div class="t" style="left:5.8px;top:21px;font-size:21px;letter-spacing:0.12px;color:#1b1b1b;">1300</div></div>
<div class="c" style="left:1536.92px;top:916.59px;width:90.66px;height:41.99px">
<div class="t" style="left:78.25px;top:21px;font-size:21px;letter-spacing:0.12px;color:#1b1b1b;">1</div></div>
<div class="c" style="left:1628.82px;top:916.59px;width:100.06px;height:41.99px">
<div class="t" style="left:34.55px;top:21px;font-size:21px;letter-spacing:0.1px;color:#1b1b1b;">$1.00  </div></div>
<div style="left:1344.4px;top:952.64px;width:30.6px;height:33.34px;background:#dfe3e8"></div>
<div style="left:1375px;top:952.64px;width:359px;height:33.34px;background:#ffffff"></div>
<div style="left:1374.2px;top:952.64px;width:1.61px;height:33.34px;background:#b5bac1"></div>
<div style="left:1461.28px;top:952.64px;width:1.24px;height:33.34px;background:#d3d8e1"></div>
<div style="left:1535.68px;top:952.64px;width:1.24px;height:33.34px;background:#d3d8e1"></div>
<div style="left:1627.58px;top:952.64px;width:1.24px;height:33.34px;background:#d3d8e1"></div>
<div style="left:1728.88px;top:952.64px;width:1.24px;height:33.34px;background:#d3d8e1"></div>
<div style="left:1344.4px;top:951.9px;width:30.6px;height:1.48px;background:#c2c7ce"></div>
<div style="left:1375.74px;top:952.02px;width:358.26px;height:1.23px;background:#d3d8e1"></div>
<div class="c" style="left:1375.62px;top:949.93px;width:85.66px;height:41.99px">
<div class="t" style="left:26.05px;top:21px;font-size:21px;letter-spacing:0.12px;color:#1b1b1b;">12504</div></div>
<div class="c" style="left:1462.52px;top:949.93px;width:73.16px;height:41.99px">
<div class="t" style="left:5.8px;top:21px;font-size:21px;letter-spacing:0.12px;color:#1b1b1b;">8776</div></div>
<div class="c" style="left:1536.92px;top:949.93px;width:90.66px;height:41.99px">
<div class="t" style="left:78.25px;top:21px;font-size:21px;letter-spacing:0.12px;color:#1b1b1b;">1</div></div>
<div class="c" style="left:1628.82px;top:949.93px;width:100.06px;height:41.99px">
<div class="t" style="left:34.55px;top:21px;font-size:21px;letter-spacing:0.1px;color:#1b1b1b;">$5.00  </div></div>
<div style="left:1344.4px;top:985.98px;width:30.6px;height:33.34px;background:#dfe3e8"></div>
<div style="left:1375px;top:985.98px;width:359px;height:33.34px;background:#f2f1f3"></div>
<div style="left:1374.2px;top:985.98px;width:1.61px;height:33.34px;background:#b5bac1"></div>
<div style="left:1461.28px;top:985.98px;width:1.24px;height:33.34px;background:#d3d8e1"></div>
<div style="left:1535.68px;top:985.98px;width:1.24px;height:33.34px;background:#d3d8e1"></div>
<div style="left:1627.58px;top:985.98px;width:1.24px;height:33.34px;background:#d3d8e1"></div>
<div style="left:1728.88px;top:985.98px;width:1.24px;height:33.34px;background:#d3d8e1"></div>
<div style="left:1344.4px;top:985.24px;width:30.6px;height:1.48px;background:#c2c7ce"></div>
<div style="left:1375.74px;top:985.36px;width:358.26px;height:1.23px;background:#d3d8e1"></div>
<div class="c" style="left:1375.62px;top:983.27px;width:85.66px;height:41.99px">
<div class="t" style="left:26.05px;top:21px;font-size:21px;letter-spacing:0.12px;color:#1b1b1b;">12602</div></div>
<div class="c" style="left:1462.52px;top:983.27px;width:73.16px;height:41.99px">
<div class="t" style="left:5.8px;top:21px;font-size:21px;letter-spacing:0.12px;color:#1b1b1b;">9765</div></div>
<div class="c" style="left:1536.92px;top:983.27px;width:90.66px;height:41.99px">
<div class="t" style="left:78.25px;top:21px;font-size:21px;letter-spacing:0.12px;color:#1b1b1b;">1</div></div>
<div class="c" style="left:1628.82px;top:983.27px;width:100.06px;height:41.99px">
<div class="t" style="left:10.95px;top:21px;font-size:21px;letter-spacing:0.1px;color:#1b1b1b;">$270.00  </div></div>
<div style="left:1344.4px;top:1019.32px;width:30.6px;height:33.34px;background:#dfe3e8"></div>
<div style="left:1375px;top:1019.32px;width:359px;height:33.34px;background:#ffffff"></div>
<div style="left:1374.2px;top:1019.32px;width:1.61px;height:33.34px;background:#b5bac1"></div>
<div style="left:1461.28px;top:1019.32px;width:1.24px;height:33.34px;background:#d3d8e1"></div>
<div style="left:1535.68px;top:1019.32px;width:1.24px;height:33.34px;background:#d3d8e1"></div>
<div style="left:1627.58px;top:1019.32px;width:1.24px;height:33.34px;background:#d3d8e1"></div>
<div style="left:1728.88px;top:1019.32px;width:1.24px;height:33.34px;background:#d3d8e1"></div>
<div style="left:1344.4px;top:1018.58px;width:30.6px;height:1.48px;background:#c2c7ce"></div>
<div style="left:1375.74px;top:1018.7px;width:358.26px;height:1.23px;background:#d3d8e1"></div>
<div class="c" style="left:1375.62px;top:1016.61px;width:85.66px;height:41.99px">
<div class="t" style="left:26.05px;top:21px;font-size:21px;letter-spacing:0.12px;color:#1b1b1b;">12948</div></div>
<div class="c" style="left:1462.52px;top:1016.61px;width:73.16px;height:41.99px">
<div class="t" style="left:5.8px;top:21px;font-size:21px;letter-spacing:0.12px;color:#1b1b1b;">1223</div></div>
<div class="c" style="left:1536.92px;top:1016.61px;width:90.66px;height:41.99px">
<div class="t" style="left:66.45px;top:21px;font-size:21px;letter-spacing:0.12px;color:#1b1b1b;">10</div></div>
<div class="c" style="left:1628.82px;top:1016.61px;width:100.06px;height:41.99px">
<div class="t" style="left:34.55px;top:21px;font-size:21px;letter-spacing:0.1px;color:#1b1b1b;">$1.75  </div></div>
<div style="left:1344.4px;top:1052.66px;width:30.6px;height:33.34px;background:#dfe3e8"></div>
<div style="left:1375px;top:1052.66px;width:359px;height:33.34px;background:#f2f1f3"></div>
<div style="left:1374.2px;top:1052.66px;width:1.61px;height:33.34px;background:#b5bac1"></div>
<div style="left:1461.28px;top:1052.66px;width:1.24px;height:33.34px;background:#d3d8e1"></div>
<div style="left:1535.68px;top:1052.66px;width:1.24px;height:33.34px;background:#d3d8e1"></div>
<div style="left:1627.58px;top:1052.66px;width:1.24px;height:33.34px;background:#d3d8e1"></div>
<div style="left:1728.88px;top:1052.66px;width:1.24px;height:33.34px;background:#d3d8e1"></div>
<div style="left:1344.4px;top:1051.92px;width:30.6px;height:1.48px;background:#c2c7ce"></div>
<div style="left:1375.74px;top:1052.04px;width:358.26px;height:1.24px;background:#d3d8e1"></div>
<div class="c" style="left:1375.62px;top:1049.95px;width:85.66px;height:41.99px">
<div class="t" style="left:26.05px;top:21px;font-size:21px;letter-spacing:0.12px;color:#1b1b1b;">12948</div></div>
<div class="c" style="left:1462.52px;top:1049.95px;width:73.16px;height:41.99px">
<div class="t" style="left:5.8px;top:21px;font-size:21px;letter-spacing:0.12px;color:#1b1b1b;">1224</div></div>
<div class="c" style="left:1536.92px;top:1049.95px;width:90.66px;height:41.99px">
<div class="t" style="left:78.25px;top:21px;font-size:21px;letter-spacing:0.12px;color:#1b1b1b;">1</div></div>
<div class="c" style="left:1628.82px;top:1049.95px;width:100.06px;height:41.99px">
<div class="t" style="left:34.55px;top:21px;font-size:21px;letter-spacing:0.1px;color:#1b1b1b;">$3.50  </div></div>
<div style="left:1344.4px;top:1086px;width:30.6px;height:33.34px;background:#dfe3e8"></div>
<div style="left:1375px;top:1086px;width:359px;height:33.34px;background:#ffffff"></div>
<div style="left:1374.2px;top:1086px;width:1.61px;height:33.34px;background:#b5bac1"></div>
<div style="left:1461.28px;top:1086px;width:1.24px;height:33.34px;background:#d3d8e1"></div>
<div style="left:1535.68px;top:1086px;width:1.24px;height:33.34px;background:#d3d8e1"></div>
<div style="left:1627.58px;top:1086px;width:1.24px;height:33.34px;background:#d3d8e1"></div>
<div style="left:1728.88px;top:1086px;width:1.24px;height:33.34px;background:#d3d8e1"></div>
<div style="left:1344.4px;top:1085.26px;width:30.6px;height:1.48px;background:#c2c7ce"></div>
<div style="left:1375.74px;top:1085.38px;width:358.26px;height:1.24px;background:#d3d8e1"></div>
<div style="left:1344.4px;top:1118.6px;width:30.6px;height:1.48px;background:#c2c7ce"></div>
<div style="left:1375.74px;top:1118.72px;width:358.26px;height:1.24px;background:#d3d8e1"></div>
<svg style="position:absolute;left:1351.67px;top:1094.64px" width="16.05" height="16.05" viewBox="-6.5 -6.5 13 13">
<g stroke="#60636a" stroke-width="1.2"><line x1="-6.2" y1="0" x2="6.2" y2="0"/><line x1="0" y1="-6.2" x2="0" y2="6.2"/></g><g stroke="#7d8087" stroke-width="0.9"><line x1="-4.6" y1="-4.6" x2="4.6" y2="4.6"/><line x1="-4.6" y1="4.6" x2="4.6" y2="-4.6"/></g><circle r="1.8" fill="#60636a"/></svg>
<div class="c" style="left:1375.62px;top:1083.29px;width:85.66px;height:41.99px">
<div class="t" style="left:73.25px;top:21px;font-size:21px;letter-spacing:0.12px;color:#1b1b1b;">0</div></div>
<div class="c" style="left:1536.92px;top:1083.29px;width:90.66px;height:41.99px">
<div class="t" style="left:78.25px;top:21px;font-size:21px;letter-spacing:0.12px;color:#1b1b1b;">0</div></div>
<div class="c" style="left:1628.82px;top:1083.29px;width:100.06px;height:41.99px">
<div class="t" style="left:34.55px;top:21px;font-size:21px;letter-spacing:0.1px;color:#1b1b1b;">$0.00  </div></div>
<div style="left:0px;top:802.3px;width:680px;height:307.7px;background:#fff"></div>
<div style="left:0px;top:802.3px;width:680px;height:1.5px;background:#a5393f"></div>
<svg style="position:absolute;left:23.14px;top:817.82px" width="26.96" height="23.33" viewBox="0 0 26 21.5" preserveAspectRatio="none">
<rect x="0" y="0" width="26" height="21.5" fill="#6f83a8"/><rect x="0" y="0" width="26" height="4.6" fill="#5c76a3"/><rect x="0.9" y="1.6" width="7" height="1.5" fill="#a9bbe2"/><rect x="9.6" y="1.6" width="6.6" height="1.5" fill="#a9bbe2"/><rect x="18" y="1.6" width="6.6" height="1.5" fill="#a9bbe2"/><rect x="0.9" y="4.8" width="24" height="14" fill="#9aa5bf"/>
<rect x="0.9" y="4.9" width="7.1" height="3.6" fill="#f4f7fd"/>
<rect x="9.5" y="4.9" width="7.0" height="3.6" fill="#f4f7fd"/>
<rect x="17.8" y="4.9" width="7.0" height="3.6" fill="#f4f7fd"/>
<rect x="0.9" y="9.9" width="7.1" height="3.6" fill="#f4f7fd"/>
<rect x="9.5" y="9.9" width="7.0" height="3.6" fill="#f4f7fd"/>
<rect x="17.8" y="9.9" width="7.0" height="3.6" fill="#f4f7fd"/>
<rect x="0.9" y="14.9" width="7.1" height="3.6" fill="#f4f7fd"/>
<rect x="9.5" y="14.9" width="7.0" height="3.6" fill="#f4f7fd"/>
<rect x="17.8" y="14.9" width="7.0" height="3.6" fill="#f4f7fd"/>
<rect x="24.8" y="4.8" width="1.2" height="16.7" fill="#34405f"/><rect x="0" y="18.6" width="26" height="1.5" fill="#a6b2c9"/><rect x="0.9" y="20" width="25.1" height="1.5" fill="#34405f"/>
</svg>
<div class="t" style="left:68.5px;top:831.37px;font-size:20.74px;letter-spacing:-0.29px;color:#2a2a2a;">ItemCategory</div>
<div style="left:5px;top:858px;width:674px;height:2.2px;background:#a8464b"></div>
<div style="left:5px;top:860.59px;width:674px;height:33.41px;background:linear-gradient(#e3e6ea,#dadee4)"></div>
<svg style="position:absolute;left:12.78px;top:868.37px" width="18.14" height="18.92" viewBox="0 0 14 14.6">
<defs><linearGradient id="tg" x1="0" y1="0" x2="0" y2="1"><stop offset="0" stop-color="#f8f9fb"/><stop offset="1" stop-color="#d6dae0"/></linearGradient></defs><path d="M0,14.6 L14,0 L14,14.6 Z" fill="url(#tg)"/><path d="M0,14.6 L14,0" stroke="#b9bec6" stroke-width="0.8"/></svg>
<div style="left:62.79px;top:860.59px;width:1.43px;height:33.41px;background:#aeb3ba"></div>
<div style="left:167.79px;top:860.59px;width:1.43px;height:33.41px;background:#aeb3ba"></div>
<div style="left:312.29px;top:860.59px;width:1.43px;height:33.41px;background:#aeb3ba"></div>
<div style="left:464.09px;top:860.59px;width:1.43px;height:33.41px;background:#aeb3ba"></div>
<div style="left:556.69px;top:860.59px;width:1.43px;height:33.41px;background:#aeb3ba"></div>
<div style="left:676.29px;top:860.59px;width:1.43px;height:33.41px;background:#aeb3ba"></div>
<div style="left:5px;top:892.7px;width:674px;height:1.3px;background:#cfd4da"></div>
<div style="left:62.72px;top:860.59px;width:105px;height:33.41px;background:linear-gradient(#fad35f,#fee97c)"></div>
<div class="c" style="left:64.5px;top:855.41px;width:71.86px;height:44.06px">
<div class="t" style="left:5.74px;top:22.03px;font-size:22.03px;letter-spacing:0.48px;color:#3b3b3b;">Category</div></div>
<svg style="position:absolute;left:148.41px;top:876px;overflow:visible" width="9.07" height="5.18" viewBox="0 0 7 4">
<path d="M-0.6,-0.5 L7.6,-0.5 L3.5,4.6 Z" fill="#fbfcfd" opacity="0.9"/><path d="M0,0 L7,0 L3.5,4 Z" fill="#232323"/></svg>
<div class="c" style="left:169.5px;top:855.41px;width:111.36px;height:44.06px">
<div class="t" style="left:5.74px;top:22.03px;font-size:22.03px;letter-spacing:0.86px;color:#3b3b3b;">Description</div></div>
<svg style="position:absolute;left:292.91px;top:876px;overflow:visible" width="9.07" height="5.18" viewBox="0 0 7 4">
<path d="M-0.6,-0.5 L7.6,-0.5 L3.5,4.6 Z" fill="#fbfcfd" opacity="0.9"/><path d="M0,0 L7,0 L3.5,4 Z" fill="#232323"/></svg>
<div class="c" style="left:314px;top:855.41px;width:118.66px;height:44.06px">
<div class="t" style="left:5.74px;top:22.03px;font-size:22.03px;letter-spacing:0.69px;color:#3b3b3b;">StoreLocation</div></div>
<svg style="position:absolute;left:444.71px;top:876px;overflow:visible" width="9.07" height="5.18" viewBox="0 0 7 4">
<path d="M-0.6,-0.5 L7.6,-0.5 L3.5,4.6 Z" fill="#fbfcfd" opacity="0.9"/><path d="M0,0 L7,0 L3.5,4 Z" fill="#232323"/></svg>
<div class="c" style="left:465.8px;top:855.41px;width:59.46px;height:44.06px">
<div class="t" style="left:5.74px;top:22.03px;font-size:22.03px;letter-spacing:-0.06px;color:#3b3b3b;">Season</div></div>
<svg style="position:absolute;left:537.31px;top:876px;overflow:visible" width="9.07" height="5.18" viewBox="0 0 7 4">
<path d="M-0.6,-0.5 L7.6,-0.5 L3.5,4.6 Z" fill="#fbfcfd" opacity="0.9"/><path d="M0,0 L7,0 L3.5,4 Z" fill="#232323"/></svg>
<div class="c" style="left:558.4px;top:855.41px;width:86.46px;height:44.06px">
<div class="t" style="left:5.74px;top:22.03px;font-size:22.03px;letter-spacing:0.9px;color:#3b3b3b;">Manager</div></div>
<svg style="position:absolute;left:656.91px;top:876px;overflow:visible" width="9.07" height="5.18" viewBox="0 0 7 4">
<path d="M-0.6,-0.5 L7.6,-0.5 L3.5,4.6 Z" fill="#fbfcfd" opacity="0.9"/><path d="M0,0 L7,0 L3.5,4 Z" fill="#232323"/></svg>
<div style="left:5px;top:894px;width:33px;height:34.83px;background:#fcd75e"></div>
<div style="left:38px;top:894px;width:641px;height:34.83px;background:#ffffff"></div>
<div style="left:168.5px;top:894px;width:510.5px;height:34.83px;background:#a8cdf0"></div>
<div style="left:37.16px;top:894px;width:1.68px;height:34.83px;background:#b5bac1"></div>
<div style="left:62.85px;top:894px;width:1.3px;height:34.83px;background:#d3d8e1"></div>
<div style="left:167.85px;top:894px;width:1.3px;height:34.83px;background:#d3d8e1"></div>
<div style="left:312.35px;top:894px;width:1.3px;height:34.83px;background:#d3d8e1"></div>
<div style="left:464.15px;top:894px;width:1.3px;height:34.83px;background:#d3d8e1"></div>
<div style="left:556.75px;top:894px;width:1.3px;height:34.83px;background:#d3d8e1"></div>
<div style="left:676.35px;top:894px;width:1.3px;height:34.83px;background:#d3d8e1"></div>
<svg style="position:absolute;left:44.01px;top:904.16px" width="15.55" height="15.55" viewBox="0 0 12 12">
<rect x="0.55" y="0.55" width="10.9" height="10.9" fill="#fbfbfb" stroke="#8e8e8e" stroke-width="1.1"/><path d="M2.4,6 H9.6 M6,2.4 V9.6" stroke="#111" stroke-width="1.45"/></svg>
<div style="left:63.24px;top:893.35px;width:106.17px;height:36.39px;border:2.59px solid #f3a5ac;background:#fff;box-sizing:border-box"></div>
<div style="left:70.24px;top:897.89px;width:42.23px;height:29.65px;background:#000"></div>
<div class="c" style="left:64.15px;top:891.08px;width:103.7px;height:44.06px">
<div class="t" style="left:6.09px;top:22.03px;font-size:22.03px;letter-spacing:-0.83px;color:#ffffff;">CAT</div></div>
<div class="c" style="left:169.15px;top:891.08px;width:143.2px;height:44.06px">
<div class="t" style="left:6.09px;top:22.03px;font-size:22.03px;letter-spacing:0.78px;color:#1b1b1b;">Cat Item</div></div>
<div class="c" style="left:313.65px;top:891.08px;width:150.5px;height:44.06px">
<div class="t" style="left:6.09px;top:22.03px;font-size:22.03px;letter-spacing:0.35px;color:#1b1b1b;">123</div></div>
<div class="c" style="left:465.45px;top:891.08px;width:91.3px;height:44.06px">
<div class="t" style="left:6.09px;top:22.03px;font-size:22.03px;letter-spacing:-1.27px;color:#1b1b1b;">SPRING</div></div>
<div class="c" style="left:558.05px;top:891.08px;width:118.3px;height:44.06px">
<div class="t" style="left:103.24px;top:22.03px;font-size:22.03px;letter-spacing:0.35px;color:#1b1b1b;">1</div></div>
<div style="left:5px;top:928.83px;width:33px;height:34.83px;background:#dfe3e8"></div>
<div style="left:38px;top:928.83px;width:641px;height:34.83px;background:#f2f1f3"></div>
<div style="left:37.16px;top:928.83px;width:1.68px;height:34.83px;background:#b5bac1"></div>
<div style="left:62.85px;top:928.83px;width:1.3px;height:34.83px;background:#d3d8e1"></div>
<div style="left:167.85px;top:928.83px;width:1.3px;height:34.83px;background:#d3d8e1"></div>
<div style="left:312.35px;top:928.83px;width:1.3px;height:34.83px;background:#d3d8e1"></div>
<div style="left:464.15px;top:928.83px;width:1.3px;height:34.83px;background:#d3d8e1"></div>
<div style="left:556.75px;top:928.83px;width:1.3px;height:34.83px;background:#d3d8e1"></div>
<div style="left:676.35px;top:928.83px;width:1.3px;height:34.83px;background:#d3d8e1"></div>
<div style="left:5px;top:928.05px;width:33px;height:1.56px;background:#c2c7ce"></div>
<div style="left:38.78px;top:928.18px;width:640.22px;height:1.3px;background:#d3d8e1"></div>
<svg style="position:absolute;left:44.01px;top:938.99px" width="15.55" height="15.55" viewBox="0 0 12 12">
<rect x="0.55" y="0.55" width="10.9" height="10.9" fill="#fbfbfb" stroke="#8e8e8e" stroke-width="1.1"/><path d="M2.4,6 H9.6 M6,2.4 V9.6" stroke="#111" stroke-width="1.45"/></svg>
<div class="c" style="left:64.15px;top:925.91px;width:103.7px;height:44.06px">
<div class="t" style="left:6.09px;top:22.03px;font-size:22.03px;letter-spacing:-0.77px;color:#1b1b1b;">DOG</div></div>
<div class="c" style="left:169.15px;top:925.91px;width:143.2px;height:44.06px">
<div class="t" style="left:6.09px;top:22.03px;font-size:22.03px;letter-spacing:0.64px;color:#1b1b1b;">Dog Item</div></div>
<div class="c" style="left:313.65px;top:925.91px;width:150.5px;height:44.06px">
<div class="t" style="left:6.09px;top:22.03px;font-size:22.03px;letter-spacing:0.35px;color:#1b1b1b;">342</div></div>
<div class="c" style="left:465.45px;top:925.91px;width:91.3px;height:44.06px">
<div class="t" style="left:6.09px;top:22.03px;font-size:22.03px;letter-spacing:-1.27px;color:#1b1b1b;">SPRING</div></div>
<div class="c" style="left:558.05px;top:925.91px;width:118.3px;height:44.06px">
<div class="t" style="left:103.24px;top:22.03px;font-size:22.03px;letter-spacing:0.35px;color:#1b1b1b;">2</div></div>
<div style="left:5px;top:963.66px;width:33px;height:34.83px;background:#dfe3e8"></div>
<div style="left:38px;top:963.66px;width:641px;height:34.83px;background:#ffffff"></div>
<div style="left:37.16px;top:963.66px;width:1.68px;height:34.83px;background:#b5bac1"></div>
<div style="left:62.85px;top:963.66px;width:1.3px;height:34.83px;background:#d3d8e1"></div>
<div style="left:167.85px;top:963.66px;width:1.3px;height:34.83px;background:#d3d8e1"></div>
<div style="left:312.35px;top:963.66px;width:1.3px;height:34.83px;background:#d3d8e1"></div>
<div style="left:464.15px;top:963.66px;width:1.3px;height:34.83px;background:#d3d8e1"></div>
<div style="left:556.75px;top:963.66px;width:1.3px;height:34.83px;background:#d3d8e1"></div>
<div style="left:676.35px;top:963.66px;width:1.3px;height:34.83px;background:#d3d8e1"></div>
<div style="left:5px;top:962.88px;width:33px;height:1.56px;background:#c2c7ce"></div>
<div style="left:38.78px;top:963.01px;width:640.22px;height:1.3px;background:#d3d8e1"></div>
<svg style="position:absolute;left:44.01px;top:973.82px" width="15.55" height="15.55" viewBox="0 0 12 12">
<rect x="0.55" y="0.55" width="10.9" height="10.9" fill="#fbfbfb" stroke="#8e8e8e" stroke-width="1.1"/><path d="M2.4,6 H9.6 M6,2.4 V9.6" stroke="#111" stroke-width="1.45"/></svg>
<div class="c" style="left:64.15px;top:960.74px;width:103.7px;height:44.06px">
<div class="t" style="left:6.09px;top:22.03px;font-size:22.03px;letter-spacing:-1.68px;color:#1b1b1b;">FLO</div></div>
<div class="c" style="left:169.15px;top:960.74px;width:143.2px;height:44.06px">
<div class="t" style="left:6.09px;top:22.03px;font-size:22.03px;letter-spacing:0.59px;color:#1b1b1b;">Florist Supplies</div></div>
<div class="c" style="left:313.65px;top:960.74px;width:150.5px;height:44.06px">
<div class="t" style="left:6.09px;top:22.03px;font-size:22.03px;letter-spacing:0.35px;color:#1b1b1b;">234</div></div>
<div class="c" style="left:465.45px;top:960.74px;width:91.3px;height:44.06px">
<div class="t" style="left:6.09px;top:22.03px;font-size:22.03px;letter-spacing:-1.27px;color:#1b1b1b;">SPRING</div></div>
<div class="c" style="left:558.05px;top:960.74px;width:118.3px;height:44.06px">
<div class="t" style="left:103.24px;top:22.03px;font-size:22.03px;letter-spacing:0.35px;color:#1b1b1b;">3</div></div>
<div style="left:5px;top:998.49px;width:33px;height:34.83px;background:#dfe3e8"></div>
<div style="left:38px;top:998.49px;width:641px;height:34.83px;background:#f2f1f3"></div>
<div style="left:37.16px;top:998.49px;width:1.68px;height:34.83px;background:#b5bac1"></div>
<div style="left:62.85px;top:998.49px;width:1.3px;height:34.83px;background:#d3d8e1"></div>
<div style="left:167.85px;top:998.49px;width:1.3px;height:34.83px;background:#d3d8e1"></div>
<div style="left:312.35px;top:998.49px;width:1.3px;height:34.83px;background:#d3d8e1"></div>
<div style="left:464.15px;top:998.49px;width:1.3px;height:34.83px;background:#d3d8e1"></div>
<div style="left:556.75px;top:998.49px;width:1.3px;height:34.83px;background:#d3d8e1"></div>
<div style="left:676.35px;top:998.49px;width:1.3px;height:34.83px;background:#d3d8e1"></div>
<div style="left:5px;top:997.71px;width:33px;height:1.56px;background:#c2c7ce"></div>
<div style="left:38.78px;top:997.84px;width:640.22px;height:1.3px;background:#d3d8e1"></div>
<svg style="position:absolute;left:44.01px;top:1008.65px" width="15.55" height="15.55" viewBox="0 0 12 12">
<rect x="0.55" y="0.55" width="10.9" height="10.9" fill="#fbfbfb" stroke="#8e8e8e" stroke-width="1.1"/><path d="M2.4,6 H9.6 M6,2.4 V9.6" stroke="#111" stroke-width="1.45"/></svg>
<div class="c" style="left:64.15px;top:995.57px;width:103.7px;height:44.06px">
<div class="t" style="left:6.09px;top:22.03px;font-size:22.03px;letter-spacing:-0.79px;color:#1b1b1b;">GAR</div></div>
<div class="c" style="left:169.15px;top:995.57px;width:143.2px;height:44.06px">
<div class="t" style="left:6.09px;top:22.03px;font-size:22.03px;letter-spacing:0.74px;color:#1b1b1b;">Garden Items</div></div>
<div class="c" style="left:313.65px;top:995.57px;width:150.5px;height:44.06px">
<div class="t" style="left:6.09px;top:22.03px;font-size:22.03px;letter-spacing:0.35px;color:#1b1b1b;">351</div></div>
<div class="c" style="left:465.45px;top:995.57px;width:91.3px;height:44.06px">
<div class="t" style="left:6.09px;top:22.03px;font-size:22.03px;letter-spacing:-0.15px;color:#1b1b1b;">SUMMER</div></div>
<div class="c" style="left:558.05px;top:995.57px;width:118.3px;height:44.06px">
<div class="t" style="left:103.24px;top:22.03px;font-size:22.03px;letter-spacing:0.35px;color:#1b1b1b;">4</div></div>
<div style="left:5px;top:1033.32px;width:33px;height:34.83px;background:#dfe3e8"></div>
<div style="left:38px;top:1033.32px;width:641px;height:34.83px;background:#ffffff"></div>
<div style="left:37.16px;top:1033.32px;width:1.68px;height:34.83px;background:#b5bac1"></div>
<div style="left:62.85px;top:1033.32px;width:1.3px;height:34.83px;background:#d3d8e1"></div>
<div style="left:167.85px;top:1033.32px;width:1.3px;height:34.83px;background:#d3d8e1"></div>
<div style="left:312.35px;top:1033.32px;width:1.3px;height:34.83px;background:#d3d8e1"></div>
<div style="left:464.15px;top:1033.32px;width:1.3px;height:34.83px;background:#d3d8e1"></div>
<div style="left:556.75px;top:1033.32px;width:1.3px;height:34.83px;background:#d3d8e1"></div>
<div style="left:676.35px;top:1033.32px;width:1.3px;height:34.83px;background:#d3d8e1"></div>
<div style="left:5px;top:1032.54px;width:33px;height:1.56px;background:#c2c7ce"></div>
<div style="left:38.78px;top:1032.67px;width:640.22px;height:1.3px;background:#d3d8e1"></div>
<svg style="position:absolute;left:44.01px;top:1043.48px" width="15.55" height="15.55" viewBox="0 0 12 12">
<rect x="0.55" y="0.55" width="10.9" height="10.9" fill="#fbfbfb" stroke="#8e8e8e" stroke-width="1.1"/><path d="M2.4,6 H9.6 M6,2.4 V9.6" stroke="#111" stroke-width="1.45"/></svg>
<div class="c" style="left:64.15px;top:1030.4px;width:103.7px;height:44.06px">
<div class="t" style="left:6.09px;top:22.03px;font-size:22.03px;letter-spacing:-1.14px;color:#1b1b1b;">TOOL</div></div>
<div class="c" style="left:169.15px;top:1030.4px;width:143.2px;height:44.06px">
<div class="t" style="left:6.09px;top:22.03px;font-size:22.03px;letter-spacing:0.56px;color:#1b1b1b;">Tools</div></div>
<div class="c" style="left:313.65px;top:1030.4px;width:150.5px;height:44.06px">
<div class="t" style="left:6.09px;top:22.03px;font-size:22.03px;letter-spacing:0.35px;color:#1b1b1b;">351</div></div>
<div class="c" style="left:465.45px;top:1030.4px;width:91.3px;height:44.06px">
<div class="t" style="left:6.09px;top:22.03px;font-size:22.03px;letter-spacing:-0.15px;color:#1b1b1b;">SUMMER</div></div>
<div class="c" style="left:558.05px;top:1030.4px;width:118.3px;height:44.06px">
<div class="t" style="left:103.24px;top:22.03px;font-size:22.03px;letter-spacing:0.35px;color:#1b1b1b;">4</div></div>
<div style="left:5px;top:1068.15px;width:33px;height:34.83px;background:#dfe3e8"></div>
<div style="left:38px;top:1068.15px;width:641px;height:34.83px;background:#f2f1f3"></div>
<div style="left:37.16px;top:1068.15px;width:1.68px;height:34.83px;background:#b5bac1"></div>
<div style="left:62.85px;top:1068.15px;width:1.3px;height:34.83px;background:#d3d8e1"></div>
<div style="left:167.85px;top:1068.15px;width:1.3px;height:34.83px;background:#d3d8e1"></div>
<div style="left:312.35px;top:1068.15px;width:1.3px;height:34.83px;background:#d3d8e1"></div>
<div style="left:464.15px;top:1068.15px;width:1.3px;height:34.83px;background:#d3d8e1"></div>
<div style="left:556.75px;top:1068.15px;width:1.3px;height:34.83px;background:#d3d8e1"></div>
<div style="left:676.35px;top:1068.15px;width:1.3px;height:34.83px;background:#d3d8e1"></div>
<div style="left:5px;top:1067.37px;width:33px;height:1.56px;background:#c2c7ce"></div>
<div style="left:38.78px;top:1067.5px;width:640.22px;height:1.3px;background:#d3d8e1"></div>
<div style="left:5px;top:1102.2px;width:33px;height:1.56px;background:#c2c7ce"></div>
<div style="left:38.78px;top:1102.33px;width:640.22px;height:1.3px;background:#d3d8e1"></div>
<svg style="position:absolute;left:13.08px;top:1077.14px" width="16.85" height="16.85" viewBox="-6.5 -6.5 13 13">
<g stroke="#60636a" stroke-width="1.2"><line x1="-6.2" y1="0" x2="6.2" y2="0"/><line x1="0" y1="-6.2" x2="0" y2="6.2"/></g><g stroke="#7d8087" stroke-width="0.9"><line x1="-4.6" y1="-4.6" x2="4.6" y2="4.6"/><line x1="-4.6" y1="4.6" x2="4.6" y2="-4.6"/></g><circle r="1.8" fill="#60636a"/></svg>
<div class="c" style="left:558.05px;top:1065.23px;width:118.3px;height:44.06px">
<div class="t" style="left:103.24px;top:22.03px;font-size:22.03px;letter-spacing:0.35px;color:#1b1b1b;">0</div></div>
</body></html>
